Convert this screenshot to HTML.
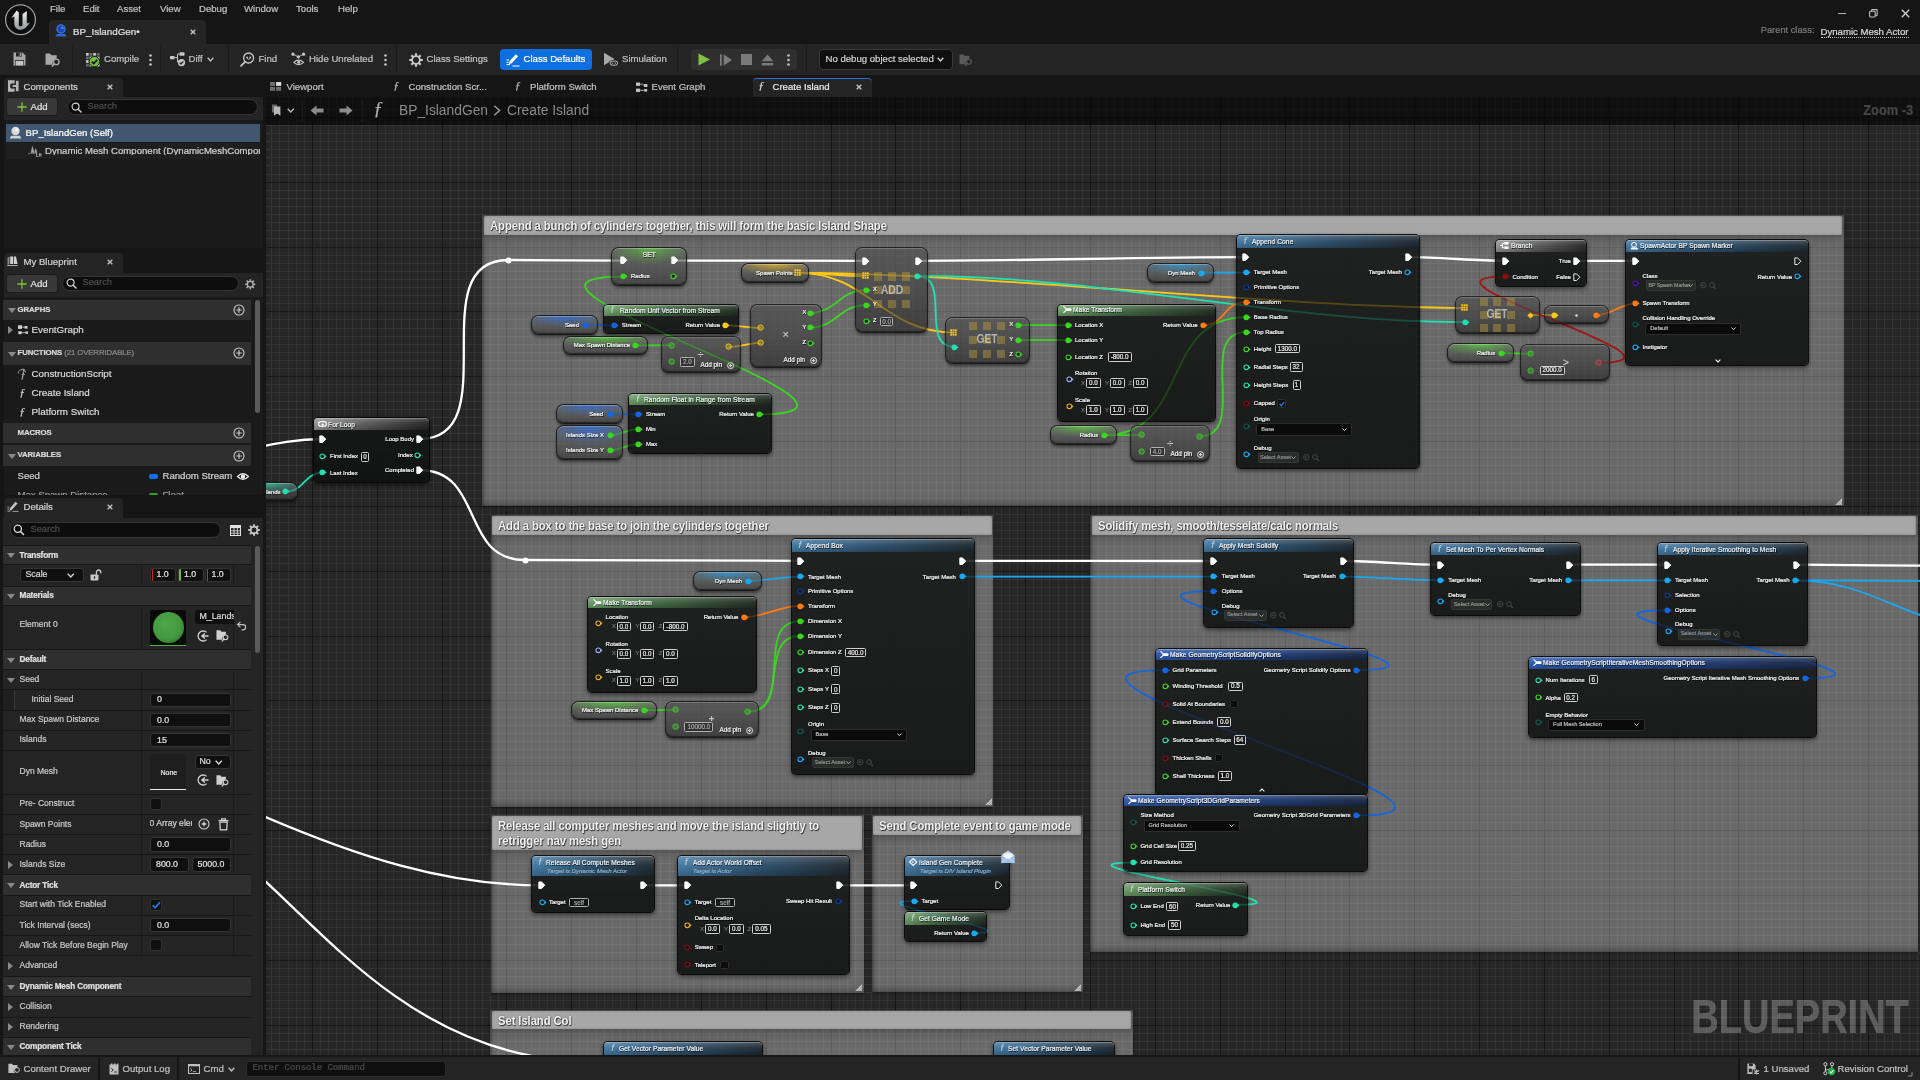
<!DOCTYPE html>
<html lang="en"><head><meta charset="utf-8"><title>BP_IslandGen</title>
<style>
*{margin:0;padding:0;}
html,body{width:1920px;height:1080px;overflow:hidden;background:#151515;}
body{font-family:"Liberation Sans",sans-serif;position:relative;}
.t{position:absolute;white-space:nowrap;line-height:1;-webkit-text-stroke:0.22px currentColor;}
.r{position:absolute;}
svg{overflow:visible;}
#app{position:absolute;left:0;top:0;width:1920px;height:1080px;will-change:transform;overflow:hidden;}
#graph{position:absolute;left:0;top:0;width:1920px;height:1080px;clip-path:inset(97px 0 25px 266px);
 background-color:#262626;}
.cm{background:rgba(255,255,255,.31);box-shadow:inset 1.5px 1.5px 3px rgba(0,0,0,.3), inset 5px -9px 9px -7px rgba(0,0,0,.32), inset -0.5px -0.5px 1px rgba(0,0,0,.1), 0 1px 1.5px rgba(0,0,0,.45);}
.cmt{border-radius:1.5px;background:#a7a7a7;box-shadow:inset 0 0 3px rgba(0,0,0,.2), 0 3px 7px 1px rgba(0,0,0,.22);}
.cmtx{font-size:12.6px;font-weight:700;color:#f4f4f4;transform:scaleX(.897);transform-origin:0 0;text-shadow:0.8px 1px 1px rgba(0,0,0,.75), 0 0 1.5px rgba(0,0,0,.5);line-height:15.1px;letter-spacing:-.1px;-webkit-text-stroke:0;}
.nd{background:linear-gradient(to bottom, rgba(20,23,21,.87) 0, rgba(15,17,16,.89) 100%);border-radius:4px;box-shadow:0 0 0 1px rgba(5,5,5,.9), 0 2px 4px 1px rgba(0,0,0,.5);}
.vn{border-radius:6.5px;box-shadow:inset 0 0.8px 0.5px rgba(255,255,255,.35), inset 0 -1px 1px rgba(0,0,0,.5), 0 0 0 1px rgba(20,20,20,.85), 0 2px 3px 1px rgba(0,0,0,.45);}
.cn{border-radius:6.5px;background:linear-gradient(to bottom, rgba(80,80,80,.68) 0, rgba(64,64,64,.68) 50%, rgba(46,46,46,.72) 100%);box-shadow:inset 0 0.8px 0.5px rgba(255,255,255,.25), inset 0 -1px 1px rgba(0,0,0,.45), 0 0 0 1px rgba(20,20,20,.8), 0 2px 3px 1px rgba(0,0,0,.45);}
</style></head><body>
<div id="app">
<div id="graph">
<svg class="r" style="left:0;top:0" width="1920" height="1080" viewBox="0 0 1920 1080" shape-rendering="crispEdges"><path d="M263.5 97V1056M271.5 97V1056M279.5 97V1056M288.5 97V1056M296.5 97V1056M304.5 97V1056M320.5 97V1056M328.5 97V1056M336.5 97V1056M344.5 97V1056M352.5 97V1056M361.5 97V1056M369.5 97V1056M385.5 97V1056M393.5 97V1056M401.5 97V1056M409.5 97V1056M417.5 97V1056M425.5 97V1056M433.5 97V1056M450.5 97V1056M458.5 97V1056M466.5 97V1056M474.5 97V1056M482.5 97V1056M490.5 97V1056M498.5 97V1056M515.5 97V1056M523.5 97V1056M531.5 97V1056M539.5 97V1056M547.5 97V1056M555.5 97V1056M563.5 97V1056M579.5 97V1056M587.5 97V1056M596.5 97V1056M604.5 97V1056M612.5 97V1056M620.5 97V1056M628.5 97V1056M644.5 97V1056M652.5 97V1056M660.5 97V1056M669.5 97V1056M677.5 97V1056M685.5 97V1056M693.5 97V1056M709.5 97V1056M717.5 97V1056M725.5 97V1056M733.5 97V1056M741.5 97V1056M750.5 97V1056M758.5 97V1056M774.5 97V1056M782.5 97V1056M790.5 97V1056M798.5 97V1056M806.5 97V1056M814.5 97V1056M823.5 97V1056M839.5 97V1056M847.5 97V1056M855.5 97V1056M863.5 97V1056M871.5 97V1056M879.5 97V1056M887.5 97V1056M904.5 97V1056M912.5 97V1056M920.5 97V1056M928.5 97V1056M936.5 97V1056M944.5 97V1056M952.5 97V1056M968.5 97V1056M977.5 97V1056M985.5 97V1056M993.5 97V1056M1001.5 97V1056M1009.5 97V1056M1017.5 97V1056M1033.5 97V1056M1041.5 97V1056M1049.5 97V1056M1058.5 97V1056M1066.5 97V1056M1074.5 97V1056M1082.5 97V1056M1098.5 97V1056M1106.5 97V1056M1114.5 97V1056M1122.5 97V1056M1131.5 97V1056M1139.5 97V1056M1147.5 97V1056M1163.5 97V1056M1171.5 97V1056M1179.5 97V1056M1187.5 97V1056M1195.5 97V1056M1203.5 97V1056M1212.5 97V1056M1228.5 97V1056M1236.5 97V1056M1244.5 97V1056M1252.5 97V1056M1260.5 97V1056M1268.5 97V1056M1276.5 97V1056M1293.5 97V1056M1301.5 97V1056M1309.5 97V1056M1317.5 97V1056M1325.5 97V1056M1333.5 97V1056M1341.5 97V1056M1357.5 97V1056M1366.5 97V1056M1374.5 97V1056M1382.5 97V1056M1390.5 97V1056M1398.5 97V1056M1406.5 97V1056M1422.5 97V1056M1430.5 97V1056M1438.5 97V1056M1447.5 97V1056M1455.5 97V1056M1463.5 97V1056M1471.5 97V1056M1487.5 97V1056M1495.5 97V1056M1503.5 97V1056M1511.5 97V1056M1520.5 97V1056M1528.5 97V1056M1536.5 97V1056M1552.5 97V1056M1560.5 97V1056M1568.5 97V1056M1576.5 97V1056M1584.5 97V1056M1592.5 97V1056M1601.5 97V1056M1617.5 97V1056M1625.5 97V1056M1633.5 97V1056M1641.5 97V1056M1649.5 97V1056M1657.5 97V1056M1665.5 97V1056M1682.5 97V1056M1690.5 97V1056M1698.5 97V1056M1706.5 97V1056M1714.5 97V1056M1722.5 97V1056M1730.5 97V1056M1746.5 97V1056M1755.5 97V1056M1763.5 97V1056M1771.5 97V1056M1779.5 97V1056M1787.5 97V1056M1795.5 97V1056M1811.5 97V1056M1819.5 97V1056M1828.5 97V1056M1836.5 97V1056M1844.5 97V1056M1852.5 97V1056M1860.5 97V1056M1876.5 97V1056M1884.5 97V1056M1892.5 97V1056M1900.5 97V1056M1909.5 97V1056M1917.5 97V1056M266 93.5H1920M266 101.5H1920M266 109.5H1920M266 125.5H1920M266 133.5H1920M266 141.5H1920M266 149.5H1920M266 157.5H1920M266 165.5H1920M266 174.5H1920M266 190.5H1920M266 198.5H1920M266 206.5H1920M266 214.5H1920M266 222.5H1920M266 230.5H1920M266 238.5H1920M266 255.5H1920M266 263.5H1920M266 271.5H1920M266 279.5H1920M266 287.5H1920M266 295.5H1920M266 303.5H1920M266 319.5H1920M266 328.5H1920M266 336.5H1920M266 344.5H1920M266 352.5H1920M266 360.5H1920M266 368.5H1920M266 384.5H1920M266 392.5H1920M266 401.5H1920M266 409.5H1920M266 417.5H1920M266 425.5H1920M266 433.5H1920M266 449.5H1920M266 457.5H1920M266 465.5H1920M266 473.5H1920M266 482.5H1920M266 490.5H1920M266 498.5H1920M266 514.5H1920M266 522.5H1920M266 530.5H1920M266 538.5H1920M266 546.5H1920M266 555.5H1920M266 563.5H1920M266 579.5H1920M266 587.5H1920M266 595.5H1920M266 603.5H1920M266 611.5H1920M266 619.5H1920M266 627.5H1920M266 644.5H1920M266 652.5H1920M266 660.5H1920M266 668.5H1920M266 676.5H1920M266 684.5H1920M266 692.5H1920M266 709.5H1920M266 717.5H1920M266 725.5H1920M266 733.5H1920M266 741.5H1920M266 749.5H1920M266 757.5H1920M266 773.5H1920M266 781.5H1920M266 790.5H1920M266 798.5H1920M266 806.5H1920M266 814.5H1920M266 822.5H1920M266 838.5H1920M266 846.5H1920M266 854.5H1920M266 863.5H1920M266 871.5H1920M266 879.5H1920M266 887.5H1920M266 903.5H1920M266 911.5H1920M266 919.5H1920M266 927.5H1920M266 935.5H1920M266 944.5H1920M266 952.5H1920M266 968.5H1920M266 976.5H1920M266 984.5H1920M266 992.5H1920M266 1000.5H1920M266 1008.5H1920M266 1017.5H1920M266 1033.5H1920M266 1041.5H1920M266 1049.5H1920" stroke="#333333" stroke-width="1" fill="none"/><path d="M312.5 97V1056M377.5 97V1056M442.5 97V1056M506.5 97V1056M571.5 97V1056M636.5 97V1056M701.5 97V1056M766.5 97V1056M831.5 97V1056M895.5 97V1056M960.5 97V1056M1025.5 97V1056M1090.5 97V1056M1155.5 97V1056M1220.5 97V1056M1285.5 97V1056M1349.5 97V1056M1414.5 97V1056M1479.5 97V1056M1544.5 97V1056M1609.5 97V1056M1674.5 97V1056M1738.5 97V1056M1803.5 97V1056M1868.5 97V1056M266 117.5H1920M266 182.5H1920M266 247.5H1920M266 311.5H1920M266 376.5H1920M266 441.5H1920M266 506.5H1920M266 571.5H1920M266 636.5H1920M266 700.5H1920M266 765.5H1920M266 830.5H1920M266 895.5H1920M266 960.5H1920M266 1025.5H1920" stroke="#171717" stroke-width="1" fill="none"/></svg>
<div class="r cm" style="left:482.4px;top:214.6px;width:1361.5px;height:291.8px;"><div class="r cmt" style="left:1.5px;top:1.5px;right:1.5px;height:19.0px;"></div><svg class="r" style="right:1.5px;bottom:1.5px" width="7" height="7" viewBox="0 0 7 7"><path d="M7 0.3V7H0.3Z" fill="#d0d0d0" fill-opacity=".9"/><path d="M7 2.8L2.8 7M7 5L5 7" stroke="#7a7a7a" stroke-width="0.6"/></svg></div>
<div class="t cmtx" style="left:489.8px;top:218.8px;">Append a bunch of cylinders together, this will form the basic Island Shape</div>
<div class="r cm" style="left:490.5px;top:514.6px;width:502.6px;height:292.3px;"><div class="r cmt" style="left:1.5px;top:1.5px;right:1.5px;height:19.2px;"></div><svg class="r" style="right:1.5px;bottom:1.5px" width="7" height="7" viewBox="0 0 7 7"><path d="M7 0.3V7H0.3Z" fill="#d0d0d0" fill-opacity=".9"/><path d="M7 2.8L2.8 7M7 5L5 7" stroke="#7a7a7a" stroke-width="0.6"/></svg></div>
<div class="t cmtx" style="left:497.9px;top:518.8px;">Add a box to the base to join the cylinders together</div>
<div class="r cm" style="left:1090.1px;top:514.6px;width:827.7px;height:437.4px;"><div class="r cmt" style="left:1.5px;top:1.5px;right:1.5px;height:19.2px;"></div></div>
<div class="t cmtx" style="left:1097.5px;top:518.8px;">Solidify mesh, smooth/tesselate/calc normals</div>
<div class="r cm" style="left:490.5px;top:814.6px;width:373.1px;height:178.0px;"><div class="r cmt" style="left:1.5px;top:1.5px;right:1.5px;height:33.9px;"></div><svg class="r" style="right:1.5px;bottom:1.5px" width="7" height="7" viewBox="0 0 7 7"><path d="M7 0.3V7H0.3Z" fill="#d0d0d0" fill-opacity=".9"/><path d="M7 2.8L2.8 7M7 5L5 7" stroke="#7a7a7a" stroke-width="0.6"/></svg></div>
<div class="t cmtx" style="left:497.9px;top:818.8px;">Release all computer meshes and move the island slightly to<br>retrigger nav mesh gen</div>
<div class="r cm" style="left:871.8px;top:814.6px;width:211.2px;height:177.9px;"><div class="r cmt" style="left:1.5px;top:1.5px;right:1.5px;height:19.1px;"></div><svg class="r" style="right:1.5px;bottom:1.5px" width="7" height="7" viewBox="0 0 7 7"><path d="M7 0.3V7H0.3Z" fill="#d0d0d0" fill-opacity=".9"/><path d="M7 2.8L2.8 7M7 5L5 7" stroke="#7a7a7a" stroke-width="0.6"/></svg></div>
<div class="t cmtx" style="left:879.2px;top:818.8px;">Send Complete event to game mode</div>
<div class="r cm" style="left:490.4px;top:1009.8px;width:642.6px;height:90.2px;"><div class="r cmt" style="left:1.5px;top:1.5px;right:1.5px;height:18.2px;"></div><svg class="r" style="right:1.5px;bottom:1.5px" width="7" height="7" viewBox="0 0 7 7"><path d="M7 0.3V7H0.3Z" fill="#d0d0d0" fill-opacity=".9"/><path d="M7 2.8L2.8 7M7 5L5 7" stroke="#7a7a7a" stroke-width="0.6"/></svg></div>
<div class="t cmtx" style="left:497.8px;top:1014.0px;">Set Island Col</div>
<svg class="r" style="left:0;top:0" width="1920" height="1080" viewBox="0 0 1920 1080">
<path d="M186.0 457.0C237.4 457.0 270.9 439.0 322.3 439.0" stroke="#ffffff" stroke-width="2.3" fill="none" stroke-opacity="1.0"/>
<path d="M419.3 439.0C508.6 439.0 419.0 260.0 508.3 260.0" stroke="#ffffff" stroke-width="2.3" fill="none" stroke-opacity="1.0"/>
<path d="M508.3 260.0C546.9 260.0 584.8 260.6 623.4 260.6" stroke="#ffffff" stroke-width="2.3" fill="none" stroke-opacity="1.0"/>
<path d="M675.0 260.6C738.7 260.6 802.1 260.8 865.8 260.8" stroke="#ffffff" stroke-width="2.3" fill="none" stroke-opacity="1.0"/>
<path d="M918.3 260.8C1028.7 260.8 1135.4 257.2 1245.8 257.2" stroke="#ffffff" stroke-width="2.3" fill="none" stroke-opacity="1.0"/>
<path d="M1408.8 257.2C1442.3 257.2 1472.1 260.8 1505.6 260.8" stroke="#ffffff" stroke-width="2.3" fill="none" stroke-opacity="1.0"/>
<path d="M1576.4 260.8C1596.1 260.8 1615.9 260.8 1635.6 260.8" stroke="#ffffff" stroke-width="2.3" fill="none" stroke-opacity="1.0"/>
<path d="M419.3 470.0C484.5 470.0 459.8 560.0 525.0 560.0" stroke="#ffffff" stroke-width="2.3" fill="none" stroke-opacity="1.0"/>
<path d="M525.0 560.0C617.0 560.0 708.3 560.8 800.3 560.8" stroke="#ffffff" stroke-width="2.3" fill="none" stroke-opacity="1.0"/>
<path d="M962.8 560.8C1046.4 560.8 1129.9 561.0 1213.5 561.0" stroke="#ffffff" stroke-width="2.3" fill="none" stroke-opacity="1.0"/>
<path d="M1343.2 561.0C1376.8 561.0 1406.8 564.7 1440.4 564.7" stroke="#ffffff" stroke-width="2.3" fill="none" stroke-opacity="1.0"/>
<path d="M1570.0 564.7C1602.6 564.7 1635.1 564.7 1667.7 564.7" stroke="#ffffff" stroke-width="2.3" fill="none" stroke-opacity="1.0"/>
<path d="M1796.3 564.7C1851.3 564.7 1905.0 566.0 1960.0 566.0" stroke="#ffffff" stroke-width="2.3" fill="none" stroke-opacity="1.0"/>
<path d="M238 805L265 816.7C356 855.5 444 885.3 541.3 885.3" stroke="#ffffff" stroke-width="2.3" fill="none"/>
<path d="M230 849L265 881C334 945 407 1030 527 1055L575 1065" stroke="#ffffff" stroke-width="2.3" fill="none"/>
<path d="M643.7 885.3C658.2 885.3 672.6 885.3 687.1 885.3" stroke="#ffffff" stroke-width="2.3" fill="none" stroke-opacity="1.0"/>
<path d="M839.3 885.3C864.1 885.3 889.0 885.3 913.8 885.3" stroke="#ffffff" stroke-width="2.3" fill="none" stroke-opacity="1.0"/>
<path d="M285.7 491.7C304.4 491.7 304.0 472.7 322.7 472.7" stroke="#22e0b0" stroke-width="1.75" fill="none" stroke-opacity="1.0"/>
<path d="M585.4 325.0C595.2 325.0 604.6 325.3 614.4 325.3" stroke="#1466e0" stroke-width="1.75" fill="none" stroke-opacity="1.0"/>
<path d="M725.6 325.3C738.2 325.3 748.2 327.8 760.8 327.8" stroke="#fdc818" stroke-width="1.75" fill="none" stroke-opacity="1.0"/>
<path d="M635.7 345.4C647.6 345.4 659.4 345.4 671.3 345.4" stroke="#3bd622" stroke-width="1.75" fill="none" stroke-opacity="1.0"/>
<path d="M728.6 347.0C740.7 347.0 748.7 342.8 760.8 342.8" stroke="#fdc818" stroke-width="1.75" fill="none" stroke-opacity="1.0"/>
<path d="M810.1 312.8C836.3 312.8 839.6 290.0 865.8 290.0" stroke="#3bd622" stroke-width="1.75" fill="none" stroke-opacity="1.0"/>
<path d="M810.1 327.6C836.2 327.6 839.7 305.0 865.8 305.0" stroke="#3bd622" stroke-width="1.75" fill="none" stroke-opacity="1.0"/>
<path d="M797.8 272.8C821.2 272.8 841.6 275.8 865.0 275.8" stroke="#fdc818" stroke-width="2.35" fill="none" stroke-opacity="1.0"/>
<path d="M797.8 272.8C869.7 272.8 881.9 332.5 953.8 332.5" stroke="#fdc818" stroke-width="1.75" fill="none" stroke-opacity="1.0"/>
<path d="M797.8 272.8C978.4 272.8 1284.1 307.8 1464.7 307.8" stroke="#fdc818" stroke-width="1.75" fill="none" stroke-opacity="1.0"/>
<path d="M916.8 275.8C953.0 275.8 918.3 346.8 954.5 346.8" stroke="#22e0b0" stroke-width="1.75" fill="none" stroke-opacity="1.0"/>
<path d="M916.8 275.8C1101.1 275.8 1281.0 322.0 1465.3 322.0" stroke="#22e0b0" stroke-width="1.75" fill="none" stroke-opacity="1.0"/>
<path d="M1018.0 325.0C1034.7 325.0 1051.3 325.0 1068.0 325.0" stroke="#3bd622" stroke-width="1.75" fill="none" stroke-opacity="1.0"/>
<path d="M1018.0 340.0C1034.7 340.0 1051.3 340.0 1068.0 340.0" stroke="#3bd622" stroke-width="1.75" fill="none" stroke-opacity="1.0"/>
<path d="M758.8 414.3C932.4 414.3 449.8 276.6 623.4 276.6" stroke="#3bd622" stroke-width="1.75" fill="none" stroke-opacity="1.0"/>
<path d="M610.0 414.1C619.5 414.1 628.9 414.3 638.4 414.3" stroke="#1466e0" stroke-width="1.75" fill="none" stroke-opacity="1.0"/>
<path d="M610.0 435.0C621.4 435.0 627.0 429.1 638.4 429.1" stroke="#3bd622" stroke-width="1.75" fill="none" stroke-opacity="1.0"/>
<path d="M610.0 450.0C621.4 450.0 627.0 444.1 638.4 444.1" stroke="#3bd622" stroke-width="1.75" fill="none" stroke-opacity="1.0"/>
<path d="M1201.3 272.8C1216.2 272.8 1230.9 272.5 1245.8 272.5" stroke="#19a8f2" stroke-width="1.75" fill="none" stroke-opacity="1.0"/>
<path d="M1203.2 325.0C1225.1 325.0 1223.9 302.0 1245.8 302.0" stroke="#ff7a14" stroke-width="1.75" fill="none" stroke-opacity="1.0"/>
<path d="M1104.3 435.0C1190.8 435.0 1159.3 317.0 1245.8 317.0" stroke="#3bd622" stroke-width="1.75" fill="none" stroke-opacity="1.0"/>
<path d="M1104.3 435.0C1116.8 435.0 1129.3 435.0 1141.8 435.0" stroke="#3bd622" stroke-width="1.75" fill="none" stroke-opacity="1.0"/>
<path d="M1199.3 436.3C1249.6 436.3 1195.5 332.0 1245.8 332.0" stroke="#3bd622" stroke-width="1.75" fill="none" stroke-opacity="1.0"/>
<path d="M1530.0 315.0C1538.1 315.0 1546.1 315.0 1554.2 315.0" stroke="#fdc818" stroke-width="1.75" fill="none" stroke-opacity="1.0"/>
<path d="M1596.7 315.0C1613.5 315.0 1618.8 303.6 1635.6 303.6" stroke="#ff7a14" stroke-width="1.75" fill="none" stroke-opacity="1.0"/>
<path d="M1501.4 353.0C1511.3 353.0 1520.7 353.6 1530.6 353.6" stroke="#3bd622" stroke-width="1.75" fill="none" stroke-opacity="1.0"/>
<path d="M1598.9 362.5C1714.7 362.5 1389.8 276.7 1505.6 276.7" stroke="#a01818" stroke-width="1.75" fill="none" stroke-opacity="1.0"/>
<path d="M748.0 580.8C766.8 580.8 781.5 576.7 800.3 576.7" stroke="#19a8f2" stroke-width="1.75" fill="none" stroke-opacity="1.0"/>
<path d="M743.8 617.0C766.4 617.0 777.7 605.8 800.3 605.8" stroke="#ff7a14" stroke-width="1.75" fill="none" stroke-opacity="1.0"/>
<path d="M643.9 710.0C654.5 710.0 665.2 710.0 675.8 710.0" stroke="#3bd622" stroke-width="1.75" fill="none" stroke-opacity="1.0"/>
<path d="M748.0 711.7C795.6 711.7 752.7 621.1 800.3 621.1" stroke="#3bd622" stroke-width="1.75" fill="none" stroke-opacity="1.0"/>
<path d="M748.0 711.7C790.7 711.7 757.6 635.8 800.3 635.8" stroke="#3bd622" stroke-width="1.75" fill="none" stroke-opacity="1.0"/>
<path d="M961.8 576.7C1045.7 576.7 1129.6 576.6 1213.5 576.6" stroke="#19a8f2" stroke-width="1.75" fill="none" stroke-opacity="1.0"/>
<path d="M1341.8 576.6C1375.9 576.6 1406.3 580.3 1440.4 580.3" stroke="#19a8f2" stroke-width="1.75" fill="none" stroke-opacity="1.0"/>
<path d="M1568.2 580.3C1601.4 580.3 1634.5 580.3 1667.7 580.3" stroke="#19a8f2" stroke-width="1.75" fill="none" stroke-opacity="1.0"/>
<path d="M1795.0 580.3C1850.2 580.3 1904.8 581.0 1960.0 581.0" stroke="#19a8f2" stroke-width="1.75" fill="none" stroke-opacity="1.0"/>
<path d="M1795.0 580.3C1875.9 580.3 1909.1 628.0 1990.0 628.0" stroke="#19a8f2" stroke-width="1.75" fill="none" stroke-opacity="1.0"/>
<path d="M1356.0 670.0C1510.6 670.0 1058.9 591.2 1213.5 591.2" stroke="#1466e0" stroke-width="1.75" fill="none" stroke-opacity="1.0"/>
<path d="M1356.0 815.4C1545.3 815.4 975.7 670.0 1165.0 670.0" stroke="#1466e0" stroke-width="1.75" fill="none" stroke-opacity="1.0"/>
<path d="M1235.0 904.8C1339.5 904.8 1028.7 862.6 1133.2 862.6" stroke="#22e0b0" stroke-width="1.75" fill="none" stroke-opacity="1.0"/>
<path d="M1804.8 678.0C1950.1 678.0 1522.4 610.3 1667.7 610.3" stroke="#1466e0" stroke-width="1.75" fill="none" stroke-opacity="1.0"/>
<path d="M973.8 933.0C1038.4 933.0 849.2 901.0 913.8 901.0" stroke="#19a8f2" stroke-width="1.75" fill="none" stroke-opacity="1.0"/>
</svg>
<div class="r nd" style="left:314.3px;top:418.3px;width:114.7px;height:63.4px;"><div class="r" style="left:0;top:0;width:100%;height:12.0px;border-radius:3.5px 3.5px 0 0;background:linear-gradient(to bottom, rgba(255,255,255,.22) 0, rgba(255,255,255,.04) 45%, rgba(0,0,0,.18) 100%), linear-gradient(to right, rgba(150,150,150,.98) 0, rgba(100,100,100,.85) 45%, rgba(45,45,45,.5) 100%);box-shadow:inset 0 0.7px 0 rgba(255,255,255,.35);"></div></div>
<svg class="r" style="left:318.3px;top:420.8px;" width="9" height="7" viewBox="0 0 9 7"><rect x="0.6" y="0.6" width="7.8" height="4.6" rx="2.3" stroke="#fff" stroke-width="1.1" fill="none"/><path d="M3.2 2.8h3L4.7 6.6z" fill="#fff"/></svg>
<div class="t" style="left:327.8px;top:420.68px;font-size:7.2px;color:#eef2f4;font-weight:400;text-shadow:0.6px 0.8px 0.6px rgba(0,0,0,.9);transform:scaleX(.93);transform-origin:0 50%;letter-spacing:.05px;">For Loop</div>
<svg class="r" style="left:318.7px;top:434.8px;" width="7.6" height="8.4" viewBox="0 0 7.6 8.4"><path d="M0.8 0.9H3.6L6.8 4.2L3.6 7.5H0.8Z" fill="#ffffff" stroke="#ffffff" stroke-width="0.9" stroke-linejoin="round"/></svg>
<div class="t" style="right:1506.0px;top:435.82px;font-size:6px;color:#f2f2f2;font-weight:400;text-shadow:0.6px 0.8px 0.6px rgba(0,0,0,.9);">Loop Body</div>
<svg class="r" style="left:415.7px;top:434.8px;" width="7.6" height="8.4" viewBox="0 0 7.6 8.4"><path d="M0.8 0.9H3.6L6.8 4.2L3.6 7.5H0.8Z" fill="#ffffff" stroke="#ffffff" stroke-width="0.9" stroke-linejoin="round"/></svg>
<svg class="r" style="left:319.4px;top:453.0px;" width="8.4" height="6.6" viewBox="0 0 8.4 6.6"><circle cx="3.3" cy="3.3" r="2.35" fill="#0c0c0c" fill-opacity="0.6" stroke="#22e0b0" stroke-width="1.1"/><path d="M6 1.9L7.6 3.3L6 4.7Z" fill="#22e0b0"/></svg>
<div class="t" style="left:330.0px;top:453.12px;font-size:6px;color:#f2f2f2;font-weight:400;text-shadow:0.6px 0.8px 0.6px rgba(0,0,0,.9);">First Index</div>
<div class="r" style="left:361.0px;top:451.7px;width:8.3px;height:10.0px;border:1px solid #d0d0d0;box-sizing:border-box;border-radius:1.5px;background:rgba(10,10,10,.35);"></div><div class="t" style="left:265.1px;width:200px;text-align:center;top:453.81px;font-size:6.3px;color:#e8e8e8;font-weight:400;">0</div>
<div class="t" style="right:1507.3px;top:451.82px;font-size:6px;color:#f2f2f2;font-weight:400;text-shadow:0.6px 0.8px 0.6px rgba(0,0,0,.9);">Index</div>
<svg class="r" style="left:414.3px;top:451.7px;" width="8.4" height="6.6" viewBox="0 0 8.4 6.6"><circle cx="3.3" cy="3.3" r="2.35" fill="#0c0c0c" fill-opacity="0.6" stroke="#22e0b0" stroke-width="1.1"/><path d="M6 1.9L7.6 3.3L6 4.7Z" fill="#22e0b0"/></svg>
<svg class="r" style="left:319.4px;top:469.4px;" width="8.4" height="6.6" viewBox="0 0 8.4 6.6"><circle cx="3.3" cy="3.3" r="2.9" fill="#22e0b0"/><path d="M6 1.9L7.6 3.3L6 4.7Z" fill="#22e0b0"/></svg>
<div class="t" style="left:330.0px;top:469.52px;font-size:6px;color:#f2f2f2;font-weight:400;text-shadow:0.6px 0.8px 0.6px rgba(0,0,0,.9);">Last Index</div>
<div class="t" style="right:1506.0px;top:466.82px;font-size:6px;color:#f2f2f2;font-weight:400;text-shadow:0.6px 0.8px 0.6px rgba(0,0,0,.9);">Completed</div>
<svg class="r" style="left:415.7px;top:465.8px;" width="7.6" height="8.4" viewBox="0 0 7.6 8.4"><path d="M0.8 0.9H3.6L6.8 4.2L3.6 7.5H0.8Z" fill="#ffffff" stroke="#ffffff" stroke-width="0.9" stroke-linejoin="round"/></svg>
<div class="r vn" style="left:236.0px;top:483.3px;width:61.3px;height:16.7px;background:radial-gradient(ellipse 70% 62% at 50% 0%, rgba(40,210,170,.75) 0, rgba(40,210,170,.3) 50%, rgba(40,210,170,0) 100%), linear-gradient(to bottom, rgba(98,100,98,.66) 0, rgba(78,80,78,.66) 55%, rgba(56,56,56,.7) 100%);"></div>
<div class="t" style="right:1639.5px;top:488.52px;font-size:6px;color:#f2f2f2;font-weight:400;text-shadow:0.6px 0.8px 0.6px rgba(0,0,0,.9);">Islands</div>
<svg class="r" style="left:282.4px;top:488.4px;" width="8.4" height="6.6" viewBox="0 0 8.4 6.6"><circle cx="3.3" cy="3.3" r="2.9" fill="#22e0b0"/><path d="M6 1.9L7.6 3.3L6 4.7Z" fill="#22e0b0"/></svg>
<div class="r vn" style="left:612.3px;top:247.6px;width:73.8px;height:37.4px;border-radius:7px;background:radial-gradient(ellipse 60% 45% at 50% 0%, rgba(90,220,60,.7) 0, rgba(90,220,60,.28) 45%, rgba(90,220,60,0) 100%), linear-gradient(to bottom, rgba(94,96,94,.66) 0, rgba(74,76,74,.66) 55%, rgba(54,54,54,.7) 100%);"></div>
<div class="t" style="left:549.3px;width:200px;text-align:center;top:252.20px;font-size:6.8px;color:#f0f0f0;font-weight:400;text-shadow:0.6px 0.8px 0.6px rgba(0,0,0,.9);">SET</div>
<svg class="r" style="left:619.8px;top:256.4px;" width="7.6" height="8.4" viewBox="0 0 7.6 8.4"><path d="M0.8 0.9H3.6L6.8 4.2L3.6 7.5H0.8Z" fill="#ffffff" stroke="#ffffff" stroke-width="0.9" stroke-linejoin="round"/></svg>
<svg class="r" style="left:671.4px;top:256.4px;" width="7.6" height="8.4" viewBox="0 0 7.6 8.4"><path d="M0.8 0.9H3.6L6.8 4.2L3.6 7.5H0.8Z" fill="#ffffff" stroke="#ffffff" stroke-width="0.9" stroke-linejoin="round"/></svg>
<svg class="r" style="left:620.1px;top:273.3px;" width="8.4" height="6.6" viewBox="0 0 8.4 6.6"><circle cx="3.3" cy="3.3" r="2.9" fill="#3bd622"/><path d="M6 1.9L7.6 3.3L6 4.7Z" fill="#3bd622"/></svg>
<div class="t" style="left:631.0px;top:273.42px;font-size:6px;color:#f2f2f2;font-weight:400;text-shadow:0.6px 0.8px 0.6px rgba(0,0,0,.9);">Radius</div>
<svg class="r" style="left:670.3px;top:273.3px;" width="8.4" height="6.6" viewBox="0 0 8.4 6.6"><circle cx="3.3" cy="3.3" r="2.35" fill="#0c0c0c" fill-opacity="0.6" stroke="#3bd622" stroke-width="1.1"/><path d="M6 1.9L7.6 3.3L6 4.7Z" fill="#3bd622"/></svg>
<div class="r vn" style="left:742.3px;top:264.3px;width:66.0px;height:17.4px;background:radial-gradient(ellipse 70% 62% at 50% 0%, rgba(240,190,40,.75) 0, rgba(240,190,40,.3) 50%, rgba(240,190,40,0) 100%), linear-gradient(to bottom, rgba(98,100,98,.66) 0, rgba(78,80,78,.66) 55%, rgba(56,56,56,.7) 100%);"></div>
<div class="t" style="right:1127.2px;top:269.62px;font-size:6px;color:#f2f2f2;font-weight:400;text-shadow:0.6px 0.8px 0.6px rgba(0,0,0,.9);">Spawn Points</div>
<svg class="r" style="left:794.4px;top:269.4px;" width="7" height="7" viewBox="0 0 7 7"><rect x="0.3" y="0.3" width="1.8" height="1.8" fill="#fdc818"/><rect x="0.3" y="2.6" width="1.8" height="1.8" fill="#fdc818"/><rect x="0.3" y="4.9" width="1.8" height="1.8" fill="#fdc818"/><rect x="2.6" y="0.3" width="1.8" height="1.8" fill="#fdc818"/><rect x="2.6" y="2.6" width="1.8" height="1.8" fill="#fdc818"/><rect x="2.6" y="4.9" width="1.8" height="1.8" fill="#fdc818"/><rect x="4.9" y="0.3" width="1.8" height="1.8" fill="#fdc818"/><rect x="4.9" y="2.6" width="1.8" height="1.8" fill="#fdc818"/><rect x="4.9" y="4.9" width="1.8" height="1.8" fill="#fdc818"/></svg>
<div class="r nd" style="left:604.1px;top:304.6px;width:133.7px;height:28.6px;"><div class="r" style="left:0;top:0;width:100%;height:11.6px;border-radius:3.5px 3.5px 0 0;background:linear-gradient(to bottom, rgba(255,255,255,.22) 0, rgba(255,255,255,.04) 45%, rgba(0,0,0,.18) 100%), linear-gradient(to right, rgba(112,160,108,.98) 0, rgba(70,112,70,.85) 45%, rgba(36,56,38,.5) 100%);box-shadow:inset 0 0.7px 0 rgba(255,255,255,.35);"></div></div>
<div class="t" style="left:610.6px;top:305.92px;font-size:8px;color:#d8e8f0;font-family:'Liberation Serif',serif;font-style:italic;opacity:.75">&#402;</div>
<div class="t" style="left:619.8px;top:306.78px;font-size:7.2px;color:#eef2f4;font-weight:400;text-shadow:0.6px 0.8px 0.6px rgba(0,0,0,.9);transform:scaleX(.93);transform-origin:0 50%;letter-spacing:.05px;">Random Unit Vector from Stream</div>
<svg class="r" style="left:611.1px;top:322.0px;" width="8.4" height="6.6" viewBox="0 0 8.4 6.6"><circle cx="3.3" cy="3.3" r="2.9" fill="#1466e0"/><path d="M6 1.9L7.6 3.3L6 4.7Z" fill="#1466e0"/></svg>
<div class="t" style="left:621.8px;top:322.12px;font-size:6px;color:#f2f2f2;font-weight:400;text-shadow:0.6px 0.8px 0.6px rgba(0,0,0,.9);">Stream</div>
<div class="t" style="right:1200.0px;top:322.12px;font-size:6px;color:#f2f2f2;font-weight:400;text-shadow:0.6px 0.8px 0.6px rgba(0,0,0,.9);">Return Value</div>
<svg class="r" style="left:722.3px;top:322.0px;" width="8.4" height="6.6" viewBox="0 0 8.4 6.6"><circle cx="3.3" cy="3.3" r="2.9" fill="#fdc818"/><path d="M6 1.9L7.6 3.3L6 4.7Z" fill="#fdc818"/></svg>
<div class="r vn" style="left:531.6px;top:316.0px;width:65.6px;height:17.8px;background:radial-gradient(ellipse 70% 62% at 50% 0%, rgba(40,110,235,.75) 0, rgba(40,110,235,.3) 50%, rgba(40,110,235,0) 100%), linear-gradient(to bottom, rgba(98,100,98,.66) 0, rgba(78,80,78,.66) 55%, rgba(56,56,56,.7) 100%);"></div>
<div class="t" style="right:1341.0px;top:321.82px;font-size:6px;color:#f2f2f2;font-weight:400;text-shadow:0.6px 0.8px 0.6px rgba(0,0,0,.9);">Seed</div>
<svg class="r" style="left:582.1px;top:321.7px;" width="8.4" height="6.6" viewBox="0 0 8.4 6.6"><circle cx="3.3" cy="3.3" r="2.9" fill="#1466e0"/><path d="M6 1.9L7.6 3.3L6 4.7Z" fill="#1466e0"/></svg>
<div class="r vn" style="left:563.8px;top:337.2px;width:83.7px;height:16.8px;background:radial-gradient(ellipse 70% 62% at 50% 0%, rgba(90,220,60,.75) 0, rgba(90,220,60,.3) 50%, rgba(90,220,60,0) 100%), linear-gradient(to bottom, rgba(98,100,98,.66) 0, rgba(78,80,78,.66) 55%, rgba(56,56,56,.7) 100%);"></div>
<div class="t" style="right:1290.0px;top:342.22px;font-size:6px;color:#f2f2f2;font-weight:400;text-shadow:0.6px 0.8px 0.6px rgba(0,0,0,.9);">Max Spawn Distance</div>
<svg class="r" style="left:632.4px;top:342.1px;" width="8.4" height="6.6" viewBox="0 0 8.4 6.6"><circle cx="3.3" cy="3.3" r="2.9" fill="#3bd622"/><path d="M6 1.9L7.6 3.3L6 4.7Z" fill="#3bd622"/></svg>
<div class="r cn" style="left:661.6px;top:337.2px;width:78.2px;height:35.0px;"></div>
<svg class="r" style="left:667.7px;top:341.8px;" width="7.2" height="7.2" viewBox="0 0 7.2 7.2"><circle cx="3.6" cy="3.6" r="2.7" fill="#3bd622" fill-opacity="0.35" stroke="#3bd622" stroke-opacity="0.85" stroke-width="1"/></svg>
<svg class="r" style="left:667.7px;top:358.4px;" width="7.2" height="7.2" viewBox="0 0 7.2 7.2"><circle cx="3.6" cy="3.6" r="2.7" fill="#3bd622" fill-opacity="0.35" stroke="#3bd622" stroke-opacity="0.85" stroke-width="1"/></svg>
<div class="r" style="left:680.3px;top:357.4px;width:14.5px;height:9.8px;border:1px solid #b0b0b0;box-sizing:border-box;border-radius:1.5px;background:rgba(10,10,10,.35);"></div><div class="t" style="left:587.5px;width:200px;text-align:center;top:359.41px;font-size:6.3px;color:#a8a8a8;font-weight:400;">2.0</div>
<svg class="r" style="left:725.0px;top:343.4px;" width="7.2" height="7.2" viewBox="0 0 7.2 7.2"><circle cx="3.6" cy="3.6" r="2.7" fill="#fdc818" fill-opacity="0.35" stroke="#fdc818" stroke-opacity="0.85" stroke-width="1"/></svg>
<div class="t" style="left:600.6px;width:200px;text-align:center;top:348.97px;font-size:11px;color:#c8c8c8;font-weight:400;">&#247;</div>
<div class="t" style="left:700.4px;top:362.41px;font-size:6.4px;color:#f0f0f0;font-weight:400;text-shadow:0.6px 0.8px 0.6px rgba(0,0,0,.9);">Add pin</div>
<svg class="r" style="left:727.0px;top:362.2px;" width="7.2" height="7.2" viewBox="0 0 7.2 7.2"><circle cx="3.6" cy="3.6" r="3" stroke="#f0f0f0" stroke-width="0.9" fill="none"/><path d="M3.6 2V5.2M2 3.6H5.2" stroke="#f0f0f0" stroke-width="0.9"/></svg>
<div class="r cn" style="left:751.0px;top:305.1px;width:70.3px;height:61.5px;"></div>
<svg class="r" style="left:757.2px;top:324.2px;" width="7.2" height="7.2" viewBox="0 0 7.2 7.2"><circle cx="3.6" cy="3.6" r="2.7" fill="#fdc818" fill-opacity="0.35" stroke="#fdc818" stroke-opacity="0.85" stroke-width="1"/></svg>
<svg class="r" style="left:757.2px;top:339.2px;" width="7.2" height="7.2" viewBox="0 0 7.2 7.2"><circle cx="3.6" cy="3.6" r="2.7" fill="#fdc818" fill-opacity="0.35" stroke="#fdc818" stroke-opacity="0.85" stroke-width="1"/></svg>
<div class="t" style="left:685.7px;width:200px;text-align:center;top:329.47px;font-size:11px;color:#c8c8c8;font-weight:400;">&#215;</div>
<div class="t" style="left:802.5px;top:309.83px;font-size:5.6px;color:#f2f2f2;font-weight:400;text-shadow:0.6px 0.8px 0.6px rgba(0,0,0,.9);">X</div>
<svg class="r" style="left:806.8px;top:309.5px;" width="8.4" height="6.6" viewBox="0 0 8.4 6.6"><circle cx="3.3" cy="3.3" r="2.9" fill="#3bd622"/><path d="M6 1.9L7.6 3.3L6 4.7Z" fill="#3bd622"/></svg>
<div class="t" style="left:802.5px;top:324.63px;font-size:5.6px;color:#f2f2f2;font-weight:400;text-shadow:0.6px 0.8px 0.6px rgba(0,0,0,.9);">Y</div>
<svg class="r" style="left:806.8px;top:324.3px;" width="8.4" height="6.6" viewBox="0 0 8.4 6.6"><circle cx="3.3" cy="3.3" r="2.9" fill="#3bd622"/><path d="M6 1.9L7.6 3.3L6 4.7Z" fill="#3bd622"/></svg>
<div class="t" style="left:802.5px;top:339.83px;font-size:5.6px;color:#f2f2f2;font-weight:400;text-shadow:0.6px 0.8px 0.6px rgba(0,0,0,.9);">Z</div>
<svg class="r" style="left:806.8px;top:339.5px;" width="8.4" height="6.6" viewBox="0 0 8.4 6.6"><circle cx="3.3" cy="3.3" r="2.35" fill="#0c0c0c" fill-opacity="0.6" stroke="#3bd622" stroke-width="1.1"/><path d="M6 1.9L7.6 3.3L6 4.7Z" fill="#3bd622"/></svg>
<div class="t" style="left:783.5px;top:357.31px;font-size:6.4px;color:#f0f0f0;font-weight:400;text-shadow:0.6px 0.8px 0.6px rgba(0,0,0,.9);">Add pin</div>
<svg class="r" style="left:810.0px;top:357.1px;" width="7.2" height="7.2" viewBox="0 0 7.2 7.2"><circle cx="3.6" cy="3.6" r="3" stroke="#f0f0f0" stroke-width="0.9" fill="none"/><path d="M3.6 2V5.2M2 3.6H5.2" stroke="#f0f0f0" stroke-width="0.9"/></svg>
<div class="r cn" style="left:856.3px;top:248.0px;width:71.2px;height:83.8px;"></div>
<div class="r" style="left:873.8px;top:272.0px;width:8.5px;height:8.5px;background:rgba(190,156,60,.44);"></div><div class="r" style="left:873.8px;top:285.8px;width:8.5px;height:8.5px;background:rgba(190,156,60,.44);"></div><div class="r" style="left:873.8px;top:299.7px;width:8.5px;height:8.5px;background:rgba(190,156,60,.44);"></div><div class="r" style="left:887.6px;top:272.0px;width:8.5px;height:8.5px;background:rgba(190,156,60,.44);"></div><div class="r" style="left:887.6px;top:285.8px;width:8.5px;height:8.5px;background:rgba(190,156,60,.44);"></div><div class="r" style="left:887.6px;top:299.7px;width:8.5px;height:8.5px;background:rgba(190,156,60,.44);"></div><div class="r" style="left:901.5px;top:272.0px;width:8.5px;height:8.5px;background:rgba(190,156,60,.44);"></div><div class="r" style="left:901.5px;top:285.8px;width:8.5px;height:8.5px;background:rgba(190,156,60,.44);"></div><div class="r" style="left:901.5px;top:299.7px;width:8.5px;height:8.5px;background:rgba(190,156,60,.44);"></div>
<div class="t" style="left:792.0px;width:200px;text-align:center;top:283.52px;font-size:12.8px;color:rgba(205,205,200,.8);font-weight:700;transform:scaleX(.8);-webkit-text-stroke:0;">ADD</div>
<svg class="r" style="left:862.2px;top:256.6px;" width="7.6" height="8.4" viewBox="0 0 7.6 8.4"><path d="M0.8 0.9H3.6L6.8 4.2L3.6 7.5H0.8Z" fill="#ffffff" stroke="#ffffff" stroke-width="0.9" stroke-linejoin="round"/></svg>
<svg class="r" style="left:914.7px;top:256.6px;" width="7.6" height="8.4" viewBox="0 0 7.6 8.4"><path d="M0.8 0.9H3.6L6.8 4.2L3.6 7.5H0.8Z" fill="#ffffff" stroke="#ffffff" stroke-width="0.9" stroke-linejoin="round"/></svg>
<svg class="r" style="left:861.6px;top:272.4px;" width="7" height="7" viewBox="0 0 7 7"><rect x="0.3" y="0.3" width="1.8" height="1.8" fill="#fdc818"/><rect x="0.3" y="2.6" width="1.8" height="1.8" fill="#fdc818"/><rect x="0.3" y="4.9" width="1.8" height="1.8" fill="#fdc818"/><rect x="2.6" y="0.3" width="1.8" height="1.8" fill="#fdc818"/><rect x="2.6" y="2.6" width="1.8" height="1.8" fill="#fdc818"/><rect x="2.6" y="4.9" width="1.8" height="1.8" fill="#fdc818"/><rect x="4.9" y="0.3" width="1.8" height="1.8" fill="#fdc818"/><rect x="4.9" y="2.6" width="1.8" height="1.8" fill="#fdc818"/><rect x="4.9" y="4.9" width="1.8" height="1.8" fill="#fdc818"/></svg>
<svg class="r" style="left:913.5px;top:272.5px;" width="8.4" height="6.6" viewBox="0 0 8.4 6.6"><circle cx="3.3" cy="3.3" r="2.9" fill="#22e0b0"/><path d="M6 1.9L7.6 3.3L6 4.7Z" fill="#22e0b0"/></svg>
<svg class="r" style="left:862.5px;top:286.7px;" width="8.4" height="6.6" viewBox="0 0 8.4 6.6"><circle cx="3.3" cy="3.3" r="2.9" fill="#3bd622"/><path d="M6 1.9L7.6 3.3L6 4.7Z" fill="#3bd622"/></svg>
<div class="t" style="left:873.0px;top:287.03px;font-size:5.6px;color:#f2f2f2;font-weight:400;text-shadow:0.6px 0.8px 0.6px rgba(0,0,0,.9);">X</div>
<svg class="r" style="left:862.5px;top:301.7px;" width="8.4" height="6.6" viewBox="0 0 8.4 6.6"><circle cx="3.3" cy="3.3" r="2.9" fill="#3bd622"/><path d="M6 1.9L7.6 3.3L6 4.7Z" fill="#3bd622"/></svg>
<div class="t" style="left:873.0px;top:302.03px;font-size:5.6px;color:#f2f2f2;font-weight:400;text-shadow:0.6px 0.8px 0.6px rgba(0,0,0,.9);">Y</div>
<svg class="r" style="left:862.5px;top:318.0px;" width="8.4" height="6.6" viewBox="0 0 8.4 6.6"><circle cx="3.3" cy="3.3" r="2.35" fill="#0c0c0c" fill-opacity="0.6" stroke="#3bd622" stroke-width="1.1"/><path d="M6 1.9L7.6 3.3L6 4.7Z" fill="#3bd622"/></svg>
<div class="t" style="left:873.0px;top:318.33px;font-size:5.6px;color:#f2f2f2;font-weight:400;text-shadow:0.6px 0.8px 0.6px rgba(0,0,0,.9);">Z</div>
<div class="r" style="left:880.0px;top:316.6px;width:13.3px;height:9.6px;border:1px solid #b0b0b0;box-sizing:border-box;border-radius:1.5px;background:rgba(10,10,10,.35);"></div><div class="t" style="left:786.6px;width:200px;text-align:center;top:318.51px;font-size:6.3px;color:#a8a8a8;font-weight:400;">0.0</div>
<div class="r cn" style="left:945.5px;top:317.5px;width:83.3px;height:45.5px;"></div>
<div class="r" style="left:968.8px;top:321.8px;width:8.5px;height:8.5px;background:rgba(190,156,60,.44);"></div><div class="r" style="left:968.8px;top:335.6px;width:8.5px;height:8.5px;background:rgba(190,156,60,.44);"></div><div class="r" style="left:968.8px;top:349.5px;width:8.5px;height:8.5px;background:rgba(190,156,60,.44);"></div><div class="r" style="left:982.6px;top:321.8px;width:8.5px;height:8.5px;background:rgba(190,156,60,.44);"></div><div class="r" style="left:982.6px;top:335.6px;width:8.5px;height:8.5px;background:rgba(190,156,60,.44);"></div><div class="r" style="left:982.6px;top:349.5px;width:8.5px;height:8.5px;background:rgba(190,156,60,.44);"></div><div class="r" style="left:996.5px;top:321.8px;width:8.5px;height:8.5px;background:rgba(190,156,60,.44);"></div><div class="r" style="left:996.5px;top:335.6px;width:8.5px;height:8.5px;background:rgba(190,156,60,.44);"></div><div class="r" style="left:996.5px;top:349.5px;width:8.5px;height:8.5px;background:rgba(190,156,60,.44);"></div>
<div class="t" style="left:886.8px;width:200px;text-align:center;top:333.02px;font-size:12.8px;color:rgba(205,205,200,.8);font-weight:700;transform:scaleX(.8);-webkit-text-stroke:0;">GET</div>
<svg class="r" style="left:950.4px;top:329.1px;" width="7" height="7" viewBox="0 0 7 7"><rect x="0.3" y="0.3" width="1.8" height="1.8" fill="#fdc818"/><rect x="0.3" y="2.6" width="1.8" height="1.8" fill="#fdc818"/><rect x="0.3" y="4.9" width="1.8" height="1.8" fill="#fdc818"/><rect x="2.6" y="0.3" width="1.8" height="1.8" fill="#fdc818"/><rect x="2.6" y="2.6" width="1.8" height="1.8" fill="#fdc818"/><rect x="2.6" y="4.9" width="1.8" height="1.8" fill="#fdc818"/><rect x="4.9" y="0.3" width="1.8" height="1.8" fill="#fdc818"/><rect x="4.9" y="2.6" width="1.8" height="1.8" fill="#fdc818"/><rect x="4.9" y="4.9" width="1.8" height="1.8" fill="#fdc818"/></svg>
<svg class="r" style="left:951.2px;top:343.5px;" width="8.4" height="6.6" viewBox="0 0 8.4 6.6"><circle cx="3.3" cy="3.3" r="2.9" fill="#22e0b0"/><path d="M6 1.9L7.6 3.3L6 4.7Z" fill="#22e0b0"/></svg>
<div class="t" style="left:1009.5px;top:322.03px;font-size:5.6px;color:#f2f2f2;font-weight:400;text-shadow:0.6px 0.8px 0.6px rgba(0,0,0,.9);">X</div>
<svg class="r" style="left:1014.7px;top:321.7px;" width="8.4" height="6.6" viewBox="0 0 8.4 6.6"><circle cx="3.3" cy="3.3" r="2.9" fill="#3bd622"/><path d="M6 1.9L7.6 3.3L6 4.7Z" fill="#3bd622"/></svg>
<div class="t" style="left:1009.5px;top:337.03px;font-size:5.6px;color:#f2f2f2;font-weight:400;text-shadow:0.6px 0.8px 0.6px rgba(0,0,0,.9);">Y</div>
<svg class="r" style="left:1014.7px;top:336.7px;" width="8.4" height="6.6" viewBox="0 0 8.4 6.6"><circle cx="3.3" cy="3.3" r="2.9" fill="#3bd622"/><path d="M6 1.9L7.6 3.3L6 4.7Z" fill="#3bd622"/></svg>
<div class="t" style="left:1009.5px;top:351.53px;font-size:5.6px;color:#f2f2f2;font-weight:400;text-shadow:0.6px 0.8px 0.6px rgba(0,0,0,.9);">Z</div>
<svg class="r" style="left:1014.7px;top:351.2px;" width="8.4" height="6.6" viewBox="0 0 8.4 6.6"><circle cx="3.3" cy="3.3" r="2.35" fill="#0c0c0c" fill-opacity="0.6" stroke="#3bd622" stroke-width="1.1"/><path d="M6 1.9L7.6 3.3L6 4.7Z" fill="#3bd622"/></svg>
<div class="r nd" style="left:1058.3px;top:304.5px;width:156.7px;height:116.8px;"><div class="r" style="left:0;top:0;width:100%;height:11.1px;border-radius:3.5px 3.5px 0 0;background:linear-gradient(to bottom, rgba(255,255,255,.22) 0, rgba(255,255,255,.04) 45%, rgba(0,0,0,.18) 100%), linear-gradient(to right, rgba(112,160,108,.98) 0, rgba(70,112,70,.85) 45%, rgba(36,56,38,.5) 100%);box-shadow:inset 0 0.7px 0 rgba(255,255,255,.35);"></div></div>
<svg class="r" style="left:1062.5px;top:306.4px;" width="9" height="7.2" viewBox="0 0 9 7.2"><path d="M0.4 0.4L3 2.6v2L0.4 6.8" stroke="#fff" stroke-width="1.1" fill="none"/><rect x="3" y="2.2" width="5.6" height="2.8" rx="1.2" fill="#fff"/></svg>
<div class="t" style="left:1073.3px;top:306.43px;font-size:7.2px;color:#eef2f4;font-weight:400;text-shadow:0.6px 0.8px 0.6px rgba(0,0,0,.9);transform:scaleX(.93);transform-origin:0 50%;letter-spacing:.05px;">Make Transform</div>
<svg class="r" style="left:1064.7px;top:321.7px;" width="8.4" height="6.6" viewBox="0 0 8.4 6.6"><circle cx="3.3" cy="3.3" r="2.9" fill="#3bd622"/><path d="M6 1.9L7.6 3.3L6 4.7Z" fill="#3bd622"/></svg>
<div class="t" style="left:1075.0px;top:321.82px;font-size:6px;color:#f2f2f2;font-weight:400;text-shadow:0.6px 0.8px 0.6px rgba(0,0,0,.9);">Location X</div>
<div class="t" style="right:722.5px;top:321.82px;font-size:6px;color:#f2f2f2;font-weight:400;text-shadow:0.6px 0.8px 0.6px rgba(0,0,0,.9);">Return Value</div>
<svg class="r" style="left:1199.9px;top:321.7px;" width="8.4" height="6.6" viewBox="0 0 8.4 6.6"><circle cx="3.3" cy="3.3" r="2.9" fill="#ff7a14"/><path d="M6 1.9L7.6 3.3L6 4.7Z" fill="#ff7a14"/></svg>
<svg class="r" style="left:1064.7px;top:336.7px;" width="8.4" height="6.6" viewBox="0 0 8.4 6.6"><circle cx="3.3" cy="3.3" r="2.9" fill="#3bd622"/><path d="M6 1.9L7.6 3.3L6 4.7Z" fill="#3bd622"/></svg>
<div class="t" style="left:1075.0px;top:336.82px;font-size:6px;color:#f2f2f2;font-weight:400;text-shadow:0.6px 0.8px 0.6px rgba(0,0,0,.9);">Location Y</div>
<svg class="r" style="left:1064.7px;top:353.5px;" width="8.4" height="6.6" viewBox="0 0 8.4 6.6"><circle cx="3.3" cy="3.3" r="2.35" fill="#0c0c0c" fill-opacity="0.6" stroke="#3bd622" stroke-width="1.1"/><path d="M6 1.9L7.6 3.3L6 4.7Z" fill="#3bd622"/></svg>
<div class="t" style="left:1075.0px;top:353.62px;font-size:6px;color:#f2f2f2;font-weight:400;text-shadow:0.6px 0.8px 0.6px rgba(0,0,0,.9);">Location Z</div>
<div class="r" style="left:1107.5px;top:352.0px;width:24.3px;height:9.8px;border:1px solid #d0d0d0;box-sizing:border-box;border-radius:1.5px;background:rgba(10,10,10,.35);"></div><div class="t" style="left:1019.7px;width:200px;text-align:center;top:354.01px;font-size:6.3px;color:#e8e8e8;font-weight:400;">-800.0</div>
<div class="t" style="left:1075.0px;top:369.82px;font-size:6px;color:#f2f2f2;font-weight:400;text-shadow:0.6px 0.8px 0.6px rgba(0,0,0,.9);">Rotation</div>
<svg class="r" style="left:1065.5px;top:376.2px;" width="8.4" height="6.6" viewBox="0 0 8.4 6.6"><circle cx="3.3" cy="3.3" r="2.35" fill="#0c0c0c" fill-opacity="0.6" stroke="#9fb0ff" stroke-width="1.1"/><path d="M6 1.9L7.6 3.3L6 4.7Z" fill="#9fb0ff"/></svg>
<div class="t" style="left:1081.0px;top:379.71px;font-size:6.2px;color:#6e6e6e;font-weight:400;">X</div>
<div class="r" style="left:1086.3px;top:378.0px;width:14.5px;height:10.0px;border:1px solid #d0d0d0;box-sizing:border-box;border-radius:1.5px;background:rgba(10,10,10,.35);"></div><div class="t" style="left:993.5px;width:200px;text-align:center;top:380.11px;font-size:6.3px;color:#e8e8e8;font-weight:400;">0.0</div>
<div class="t" style="left:1105.0px;top:379.71px;font-size:6.2px;color:#6e6e6e;font-weight:400;">Y</div>
<div class="r" style="left:1110.0px;top:378.0px;width:14.5px;height:10.0px;border:1px solid #d0d0d0;box-sizing:border-box;border-radius:1.5px;background:rgba(10,10,10,.35);"></div><div class="t" style="left:1017.2px;width:200px;text-align:center;top:380.11px;font-size:6.3px;color:#e8e8e8;font-weight:400;">0.0</div>
<div class="t" style="left:1128.3px;top:379.71px;font-size:6.2px;color:#6e6e6e;font-weight:400;">Z</div>
<div class="r" style="left:1133.0px;top:378.0px;width:14.5px;height:10.0px;border:1px solid #d0d0d0;box-sizing:border-box;border-radius:1.5px;background:rgba(10,10,10,.35);"></div><div class="t" style="left:1040.2px;width:200px;text-align:center;top:380.11px;font-size:6.3px;color:#e8e8e8;font-weight:400;">0.0</div>
<div class="t" style="left:1075.0px;top:396.82px;font-size:6px;color:#f2f2f2;font-weight:400;text-shadow:0.6px 0.8px 0.6px rgba(0,0,0,.9);">Scale</div>
<svg class="r" style="left:1065.5px;top:403.0px;" width="8.4" height="6.6" viewBox="0 0 8.4 6.6"><circle cx="3.3" cy="3.3" r="2.35" fill="#0c0c0c" fill-opacity="0.6" stroke="#e8b020" stroke-width="1.1"/><path d="M6 1.9L7.6 3.3L6 4.7Z" fill="#e8b020"/></svg>
<div class="t" style="left:1081.0px;top:406.71px;font-size:6.2px;color:#6e6e6e;font-weight:400;">X</div>
<div class="r" style="left:1086.3px;top:405.0px;width:14.5px;height:10.0px;border:1px solid #d0d0d0;box-sizing:border-box;border-radius:1.5px;background:rgba(10,10,10,.35);"></div><div class="t" style="left:993.5px;width:200px;text-align:center;top:407.11px;font-size:6.3px;color:#e8e8e8;font-weight:400;">1.0</div>
<div class="t" style="left:1105.0px;top:406.71px;font-size:6.2px;color:#6e6e6e;font-weight:400;">Y</div>
<div class="r" style="left:1110.0px;top:405.0px;width:14.5px;height:10.0px;border:1px solid #d0d0d0;box-sizing:border-box;border-radius:1.5px;background:rgba(10,10,10,.35);"></div><div class="t" style="left:1017.2px;width:200px;text-align:center;top:407.11px;font-size:6.3px;color:#e8e8e8;font-weight:400;">1.0</div>
<div class="t" style="left:1128.3px;top:406.71px;font-size:6.2px;color:#6e6e6e;font-weight:400;">Z</div>
<div class="r" style="left:1133.0px;top:405.0px;width:14.5px;height:10.0px;border:1px solid #d0d0d0;box-sizing:border-box;border-radius:1.5px;background:rgba(10,10,10,.35);"></div><div class="t" style="left:1040.2px;width:200px;text-align:center;top:407.11px;font-size:6.3px;color:#e8e8e8;font-weight:400;">1.0</div>
<div class="r vn" style="left:1147.5px;top:263.8px;width:65.8px;height:18.0px;background:radial-gradient(ellipse 70% 62% at 50% 0%, rgba(40,160,235,.75) 0, rgba(40,160,235,.3) 50%, rgba(40,160,235,0) 100%), linear-gradient(to bottom, rgba(98,100,98,.66) 0, rgba(78,80,78,.66) 55%, rgba(56,56,56,.7) 100%);"></div>
<div class="t" style="right:725.0px;top:269.62px;font-size:6px;color:#f2f2f2;font-weight:400;text-shadow:0.6px 0.8px 0.6px rgba(0,0,0,.9);">Dyn Mesh</div>
<svg class="r" style="left:1198.0px;top:269.5px;" width="8.4" height="6.6" viewBox="0 0 8.4 6.6"><circle cx="3.3" cy="3.3" r="2.9" fill="#19a8f2"/><path d="M6 1.9L7.6 3.3L6 4.7Z" fill="#19a8f2"/></svg>
<div class="r vn" style="left:1050.8px;top:426.3px;width:65.5px;height:17.5px;background:radial-gradient(ellipse 70% 62% at 50% 0%, rgba(90,220,60,.75) 0, rgba(90,220,60,.3) 50%, rgba(90,220,60,0) 100%), linear-gradient(to bottom, rgba(98,100,98,.66) 0, rgba(78,80,78,.66) 55%, rgba(56,56,56,.7) 100%);"></div>
<div class="t" style="right:821.7px;top:431.82px;font-size:6px;color:#f2f2f2;font-weight:400;text-shadow:0.6px 0.8px 0.6px rgba(0,0,0,.9);">Radius</div>
<svg class="r" style="left:1101.0px;top:431.7px;" width="8.4" height="6.6" viewBox="0 0 8.4 6.6"><circle cx="3.3" cy="3.3" r="2.9" fill="#3bd622"/><path d="M6 1.9L7.6 3.3L6 4.7Z" fill="#3bd622"/></svg>
<div class="r cn" style="left:1131.3px;top:426.3px;width:77.5px;height:35.0px;"></div>
<svg class="r" style="left:1138.2px;top:431.4px;" width="7.2" height="7.2" viewBox="0 0 7.2 7.2"><circle cx="3.6" cy="3.6" r="2.7" fill="#3bd622" fill-opacity="0.35" stroke="#3bd622" stroke-opacity="0.85" stroke-width="1"/></svg>
<svg class="r" style="left:1138.2px;top:448.2px;" width="7.2" height="7.2" viewBox="0 0 7.2 7.2"><circle cx="3.6" cy="3.6" r="2.7" fill="#3bd622" fill-opacity="0.35" stroke="#3bd622" stroke-opacity="0.85" stroke-width="1"/></svg>
<div class="r" style="left:1150.0px;top:447.0px;width:14.5px;height:9.4px;border:1px solid #b0b0b0;box-sizing:border-box;border-radius:1.5px;background:rgba(10,10,10,.35);"></div><div class="t" style="left:1057.2px;width:200px;text-align:center;top:448.81px;font-size:6.3px;color:#a8a8a8;font-weight:400;">4.0</div>
<svg class="r" style="left:1195.7px;top:432.7px;" width="7.2" height="7.2" viewBox="0 0 7.2 7.2"><circle cx="3.6" cy="3.6" r="2.7" fill="#3bd622" fill-opacity="0.35" stroke="#3bd622" stroke-opacity="0.85" stroke-width="1"/></svg>
<div class="t" style="left:1070.2px;width:200px;text-align:center;top:437.57px;font-size:11px;color:#c8c8c8;font-weight:400;">&#247;</div>
<div class="t" style="left:1170.5px;top:451.21px;font-size:6.4px;color:#f0f0f0;font-weight:400;text-shadow:0.6px 0.8px 0.6px rgba(0,0,0,.9);">Add pin</div>
<svg class="r" style="left:1197.0px;top:451.0px;" width="7.2" height="7.2" viewBox="0 0 7.2 7.2"><circle cx="3.6" cy="3.6" r="3" stroke="#f0f0f0" stroke-width="0.9" fill="none"/><path d="M3.6 2V5.2M2 3.6H5.2" stroke="#f0f0f0" stroke-width="0.9"/></svg>
<div class="r nd" style="left:1237.0px;top:235.4px;width:182.3px;height:232.6px;"><div class="r" style="left:0;top:0;width:100%;height:12.2px;border-radius:3.5px 3.5px 0 0;background:linear-gradient(to bottom, rgba(255,255,255,.22) 0, rgba(255,255,255,.04) 45%, rgba(0,0,0,.18) 100%), linear-gradient(to right, rgba(68,122,164,.98) 0, rgba(46,88,124,.85) 45%, rgba(28,46,62,.55) 100%);box-shadow:inset 0 0.7px 0 rgba(255,255,255,.35);"></div></div>
<div class="t" style="left:1243.5px;top:237.02px;font-size:8px;color:#d8e8f0;font-family:'Liberation Serif',serif;font-style:italic;opacity:.75">&#402;</div>
<div class="t" style="left:1251.8px;top:237.88px;font-size:7.2px;color:#eef2f4;font-weight:400;text-shadow:0.6px 0.8px 0.6px rgba(0,0,0,.9);transform:scaleX(.93);transform-origin:0 50%;letter-spacing:.05px;">Append Cone</div>
<svg class="r" style="left:1242.2px;top:253.0px;" width="7.6" height="8.4" viewBox="0 0 7.6 8.4"><path d="M0.8 0.9H3.6L6.8 4.2L3.6 7.5H0.8Z" fill="#ffffff" stroke="#ffffff" stroke-width="0.9" stroke-linejoin="round"/></svg>
<svg class="r" style="left:1405.2px;top:253.0px;" width="7.6" height="8.4" viewBox="0 0 7.6 8.4"><path d="M0.8 0.9H3.6L6.8 4.2L3.6 7.5H0.8Z" fill="#ffffff" stroke="#ffffff" stroke-width="0.9" stroke-linejoin="round"/></svg>
<svg class="r" style="left:1242.5px;top:269.2px;" width="8.4" height="6.6" viewBox="0 0 8.4 6.6"><circle cx="3.3" cy="3.3" r="2.9" fill="#19a8f2"/><path d="M6 1.9L7.6 3.3L6 4.7Z" fill="#19a8f2"/></svg>
<div class="t" style="left:1253.8px;top:269.32px;font-size:6px;color:#f2f2f2;font-weight:400;text-shadow:0.6px 0.8px 0.6px rgba(0,0,0,.9);">Target Mesh</div>
<div class="t" style="right:518.2px;top:269.32px;font-size:6px;color:#f2f2f2;font-weight:400;text-shadow:0.6px 0.8px 0.6px rgba(0,0,0,.9);">Target Mesh</div>
<svg class="r" style="left:1403.7px;top:269.2px;" width="8.4" height="6.6" viewBox="0 0 8.4 6.6"><circle cx="3.3" cy="3.3" r="2.35" fill="#0c0c0c" fill-opacity="0.6" stroke="#19a8f2" stroke-width="1.1"/><path d="M6 1.9L7.6 3.3L6 4.7Z" fill="#19a8f2"/></svg>
<svg class="r" style="left:1242.5px;top:283.9px;" width="8.4" height="6.6" viewBox="0 0 8.4 6.6"><circle cx="3.3" cy="3.3" r="2.35" fill="#0c0c0c" fill-opacity="0.6" stroke="#0a3f9a" stroke-width="1.1"/><path d="M6 1.9L7.6 3.3L6 4.7Z" fill="#0a3f9a"/></svg>
<div class="t" style="left:1253.8px;top:284.02px;font-size:6px;color:#f2f2f2;font-weight:400;text-shadow:0.6px 0.8px 0.6px rgba(0,0,0,.9);">Primitive Options</div>
<svg class="r" style="left:1242.5px;top:298.7px;" width="8.4" height="6.6" viewBox="0 0 8.4 6.6"><circle cx="3.3" cy="3.3" r="2.9" fill="#ff7a14"/><path d="M6 1.9L7.6 3.3L6 4.7Z" fill="#ff7a14"/></svg>
<div class="t" style="left:1253.8px;top:298.82px;font-size:6px;color:#f2f2f2;font-weight:400;text-shadow:0.6px 0.8px 0.6px rgba(0,0,0,.9);">Transform</div>
<svg class="r" style="left:1242.5px;top:313.7px;" width="8.4" height="6.6" viewBox="0 0 8.4 6.6"><circle cx="3.3" cy="3.3" r="2.9" fill="#3bd622"/><path d="M6 1.9L7.6 3.3L6 4.7Z" fill="#3bd622"/></svg>
<div class="t" style="left:1253.8px;top:313.82px;font-size:6px;color:#f2f2f2;font-weight:400;text-shadow:0.6px 0.8px 0.6px rgba(0,0,0,.9);">Base Radius</div>
<svg class="r" style="left:1242.5px;top:328.7px;" width="8.4" height="6.6" viewBox="0 0 8.4 6.6"><circle cx="3.3" cy="3.3" r="2.9" fill="#3bd622"/><path d="M6 1.9L7.6 3.3L6 4.7Z" fill="#3bd622"/></svg>
<div class="t" style="left:1253.8px;top:328.82px;font-size:6px;color:#f2f2f2;font-weight:400;text-shadow:0.6px 0.8px 0.6px rgba(0,0,0,.9);">Top Radius</div>
<svg class="r" style="left:1242.5px;top:345.5px;" width="8.4" height="6.6" viewBox="0 0 8.4 6.6"><circle cx="3.3" cy="3.3" r="2.35" fill="#0c0c0c" fill-opacity="0.6" stroke="#3bd622" stroke-width="1.1"/><path d="M6 1.9L7.6 3.3L6 4.7Z" fill="#3bd622"/></svg>
<div class="t" style="left:1253.8px;top:345.62px;font-size:6px;color:#f2f2f2;font-weight:400;text-shadow:0.6px 0.8px 0.6px rgba(0,0,0,.9);">Height</div>
<div class="r" style="left:1275.0px;top:343.8px;width:25.0px;height:9.6px;border:1px solid #d0d0d0;box-sizing:border-box;border-radius:1.5px;background:rgba(10,10,10,.35);"></div><div class="t" style="left:1187.5px;width:200px;text-align:center;top:345.71px;font-size:6.3px;color:#e8e8e8;font-weight:400;">1300.0</div>
<svg class="r" style="left:1242.5px;top:363.7px;" width="8.4" height="6.6" viewBox="0 0 8.4 6.6"><circle cx="3.3" cy="3.3" r="2.35" fill="#0c0c0c" fill-opacity="0.6" stroke="#22e0b0" stroke-width="1.1"/><path d="M6 1.9L7.6 3.3L6 4.7Z" fill="#22e0b0"/></svg>
<div class="t" style="left:1253.8px;top:363.82px;font-size:6px;color:#f2f2f2;font-weight:400;text-shadow:0.6px 0.8px 0.6px rgba(0,0,0,.9);">Radial Steps</div>
<div class="r" style="left:1289.5px;top:362.0px;width:13.0px;height:9.8px;border:1px solid #d0d0d0;box-sizing:border-box;border-radius:1.5px;background:rgba(10,10,10,.35);"></div><div class="t" style="left:1196.0px;width:200px;text-align:center;top:364.01px;font-size:6.3px;color:#e8e8e8;font-weight:400;">32</div>
<svg class="r" style="left:1242.5px;top:381.7px;" width="8.4" height="6.6" viewBox="0 0 8.4 6.6"><circle cx="3.3" cy="3.3" r="2.35" fill="#0c0c0c" fill-opacity="0.6" stroke="#22e0b0" stroke-width="1.1"/><path d="M6 1.9L7.6 3.3L6 4.7Z" fill="#22e0b0"/></svg>
<div class="t" style="left:1253.8px;top:381.82px;font-size:6px;color:#f2f2f2;font-weight:400;text-shadow:0.6px 0.8px 0.6px rgba(0,0,0,.9);">Height Steps</div>
<div class="r" style="left:1292.5px;top:380.3px;width:8.0px;height:9.7px;border:1px solid #d0d0d0;box-sizing:border-box;border-radius:1.5px;background:rgba(10,10,10,.35);"></div><div class="t" style="left:1196.5px;width:200px;text-align:center;top:382.26px;font-size:6.3px;color:#e8e8e8;font-weight:400;">1</div>
<svg class="r" style="left:1242.5px;top:400.0px;" width="8.4" height="6.6" viewBox="0 0 8.4 6.6"><circle cx="3.3" cy="3.3" r="2.35" fill="#0c0c0c" fill-opacity="0.6" stroke="#8a0c0c" stroke-width="1.1"/><path d="M6 1.9L7.6 3.3L6 4.7Z" fill="#8a0c0c"/></svg>
<div class="t" style="left:1253.8px;top:400.12px;font-size:6px;color:#f2f2f2;font-weight:400;text-shadow:0.6px 0.8px 0.6px rgba(0,0,0,.9);">Capped</div>
<div class="r" style="left:1277.3px;top:399.2px;width:8.4px;height:8.4px;background:#0c0c0c;border:1px solid #2e2e2e;box-sizing:border-box;border-radius:1.5px;"></div><svg class="r" style="left:1278.5px;top:400.6px;" width="6" height="6" viewBox="0 0 6 6"><path d="M0.6 3L2.3 4.8L5.4 0.8" stroke="#1b7df2" stroke-width="1.3" fill="none"/></svg>
<div class="t" style="left:1253.8px;top:415.62px;font-size:6px;color:#f2f2f2;font-weight:400;text-shadow:0.6px 0.8px 0.6px rgba(0,0,0,.9);">Origin</div>
<svg class="r" style="left:1243.0px;top:422.5px;" width="8.4" height="6.6" viewBox="0 0 8.4 6.6"><circle cx="3.3" cy="3.3" r="2.35" fill="#0c0c0c" fill-opacity="0.6" stroke="#0f5a52" stroke-width="1.1"/><path d="M6 1.9L7.6 3.3L6 4.7Z" fill="#0f5a52"/></svg>
<div class="r" style="left:1256.3px;top:423.0px;width:96.2px;height:13.3px;background:#0a0a0a;border:1px solid #2c2c2c;box-sizing:border-box;border-radius:2px;"></div><div class="t" style="left:1261.3px;top:426.68px;font-size:5.6px;color:#b8b8b8;font-weight:400;">Base</div><svg class="r" style="left:1342.0px;top:428.0px;" width="5" height="3.4" viewBox="0 0 5 3.4"><path d="M0.5 0.5L2.5 2.7L4.5 0.5" stroke="#d0d0d0" stroke-width="1" fill="none"/></svg>
<div class="t" style="left:1253.8px;top:444.82px;font-size:6px;color:#f2f2f2;font-weight:400;text-shadow:0.6px 0.8px 0.6px rgba(0,0,0,.9);">Debug</div>
<svg class="r" style="left:1243.0px;top:451.0px;" width="8.4" height="6.6" viewBox="0 0 8.4 6.6"><circle cx="3.3" cy="3.3" r="2.35" fill="#0c0c0c" fill-opacity="0.6" stroke="#19a8f2" stroke-width="1.1"/><path d="M6 1.9L7.6 3.3L6 4.7Z" fill="#19a8f2"/></svg>
<div class="r" style="left:1257.5px;top:452.0px;width:41.3px;height:11.0px;background:#2a2c2a;border:1px solid #343634;box-sizing:border-box;border-radius:2px;"></div><div class="t" style="left:1260.0px;top:454.53px;font-size:5.6px;color:#8c8c8c;font-weight:400;">Select Asset</div><svg class="r" style="left:1291.3px;top:455.9px;" width="5" height="3.4" viewBox="0 0 5 3.4"><path d="M0.5 0.5L2.5 2.7L4.5 0.5" stroke="#a0a0a0" stroke-width="1" fill="none"/></svg>
<svg class="r" style="left:1302.6px;top:454.3px;" width="6.4" height="6.4" viewBox="0 0 6.4 6.4"><circle cx="3.2" cy="3.2" r="2.7" stroke="#4a4c4a" stroke-width="0.9" fill="none"/><path d="M4.6 3.2H1.9M2.9 2.1L1.8 3.2L2.9 4.3" stroke="#4a4c4a" stroke-width="0.8" fill="none"/></svg><svg class="r" style="left:1312.0px;top:454.1px;" width="7.4" height="7.4" viewBox="0 0 7.4 7.4"><circle cx="3" cy="3" r="2.4" stroke="#4a4c4a" stroke-width="0.9" fill="none"/><path d="M4.8 4.8L6.8 6.8" stroke="#4a4c4a" stroke-width="1.1"/></svg>
<div class="r nd" style="left:1495.8px;top:239.7px;width:90.6px;height:46.7px;"><div class="r" style="left:0;top:0;width:100%;height:12.0px;border-radius:3.5px 3.5px 0 0;background:linear-gradient(to bottom, rgba(255,255,255,.22) 0, rgba(255,255,255,.04) 45%, rgba(0,0,0,.18) 100%), linear-gradient(to right, rgba(150,150,150,.98) 0, rgba(100,100,100,.85) 45%, rgba(45,45,45,.5) 100%);box-shadow:inset 0 0.7px 0 rgba(255,255,255,.35);"></div></div>
<svg class="r" style="left:1500.4px;top:242.2px;" width="9" height="7" viewBox="0 0 9 7"><path d="M0 3.5h2.5M2.5 1.2v4.6M2.5 1.2h2M2.5 5.8h2" stroke="#fff" stroke-width="1.1" fill="none"/><rect x="4.4" y="0" width="4.2" height="2.6" fill="#fff"/><rect x="4.4" y="4.4" width="4.2" height="2.6" fill="#fff"/></svg>
<div class="t" style="left:1511.4px;top:242.08px;font-size:7.2px;color:#eef2f4;font-weight:400;text-shadow:0.6px 0.8px 0.6px rgba(0,0,0,.9);transform:scaleX(.93);transform-origin:0 50%;letter-spacing:.05px;">Branch</div>
<svg class="r" style="left:1502.0px;top:256.6px;" width="7.6" height="8.4" viewBox="0 0 7.6 8.4"><path d="M0.8 0.9H3.6L6.8 4.2L3.6 7.5H0.8Z" fill="#ffffff" stroke="#ffffff" stroke-width="0.9" stroke-linejoin="round"/></svg>
<div class="t" style="right:349.2px;top:257.62px;font-size:6px;color:#f2f2f2;font-weight:400;text-shadow:0.6px 0.8px 0.6px rgba(0,0,0,.9);">True</div>
<svg class="r" style="left:1572.8px;top:256.6px;" width="7.6" height="8.4" viewBox="0 0 7.6 8.4"><path d="M0.8 0.9H3.6L6.8 4.2L3.6 7.5H0.8Z" fill="#ffffff" stroke="#ffffff" stroke-width="0.9" stroke-linejoin="round"/></svg>
<svg class="r" style="left:1502.3px;top:273.4px;" width="8.4" height="6.6" viewBox="0 0 8.4 6.6"><circle cx="3.3" cy="3.3" r="2.9" fill="#8a0c0c"/><path d="M6 1.9L7.6 3.3L6 4.7Z" fill="#8a0c0c"/></svg>
<div class="t" style="left:1512.5px;top:273.52px;font-size:6px;color:#f2f2f2;font-weight:400;text-shadow:0.6px 0.8px 0.6px rgba(0,0,0,.9);">Condition</div>
<div class="t" style="right:349.2px;top:274.02px;font-size:6px;color:#f2f2f2;font-weight:400;text-shadow:0.6px 0.8px 0.6px rgba(0,0,0,.9);">False</div>
<svg class="r" style="left:1572.8px;top:273.0px;" width="7.6" height="8.4" viewBox="0 0 7.6 8.4"><path d="M0.8 0.9H3.6L6.8 4.2L3.6 7.5H0.8Z" fill="none" stroke="#ffffff" stroke-width="0.9" stroke-linejoin="round"/></svg>
<div class="r nd" style="left:1625.8px;top:239.7px;width:182.5px;height:125.3px;"><div class="r" style="left:0;top:0;width:100%;height:12.0px;border-radius:3.5px 3.5px 0 0;background:linear-gradient(to bottom, rgba(255,255,255,.22) 0, rgba(255,255,255,.04) 45%, rgba(0,0,0,.18) 100%), linear-gradient(to right, rgba(68,122,164,.98) 0, rgba(46,88,124,.85) 45%, rgba(28,46,62,.55) 100%);box-shadow:inset 0 0.7px 0 rgba(255,255,255,.35);"></div></div>
<svg class="r" style="left:1630.2px;top:241.7px;" width="9" height="8" viewBox="0 0 9 8"><circle cx="4" cy="2.8" r="2.4" stroke="#fff" stroke-width="1" fill="none"/><path d="M0.4 7.4h7.4l-1-1.8H1.4z" fill="#fff"/><path d="M6 5.4l2.6 1.2-2.6 1.2z" fill="#fff"/></svg>
<div class="t" style="left:1640.3px;top:242.08px;font-size:7.2px;color:#eef2f4;font-weight:400;text-shadow:0.6px 0.8px 0.6px rgba(0,0,0,.9);transform:scaleX(.93);transform-origin:0 50%;letter-spacing:.05px;">SpawnActor BP Spawn Marker</div>
<svg class="r" style="left:1632.0px;top:256.6px;" width="7.6" height="8.4" viewBox="0 0 7.6 8.4"><path d="M0.8 0.9H3.6L6.8 4.2L3.6 7.5H0.8Z" fill="#ffffff" stroke="#ffffff" stroke-width="0.9" stroke-linejoin="round"/></svg>
<svg class="r" style="left:1794.4px;top:256.6px;" width="7.6" height="8.4" viewBox="0 0 7.6 8.4"><path d="M0.8 0.9H3.6L6.8 4.2L3.6 7.5H0.8Z" fill="none" stroke="#ffffff" stroke-width="0.9" stroke-linejoin="round"/></svg>
<div class="t" style="left:1642.5px;top:272.82px;font-size:6px;color:#f2f2f2;font-weight:400;text-shadow:0.6px 0.8px 0.6px rgba(0,0,0,.9);">Class</div>
<svg class="r" style="left:1632.3px;top:279.5px;" width="8.4" height="6.6" viewBox="0 0 8.4 6.6"><circle cx="3.3" cy="3.3" r="2.35" fill="#0c0c0c" fill-opacity="0.6" stroke="#5a10c0" stroke-width="1.1"/><path d="M6 1.9L7.6 3.3L6 4.7Z" fill="#5a10c0"/></svg>
<div class="r" style="left:1646.0px;top:280.3px;width:49.8px;height:10.7px;background:#2a2c2a;border:1px solid #343634;box-sizing:border-box;border-radius:2px;"></div><div class="t" style="left:1648.5px;top:282.89px;font-size:5.2px;color:#8c8c8c;font-weight:400;">BP Spawn Marker</div><svg class="r" style="left:1688.3px;top:284.0px;" width="5" height="3.4" viewBox="0 0 5 3.4"><path d="M0.5 0.5L2.5 2.7L4.5 0.5" stroke="#a0a0a0" stroke-width="1" fill="none"/></svg>
<svg class="r" style="left:1699.6px;top:282.4px;" width="6.4" height="6.4" viewBox="0 0 6.4 6.4"><circle cx="3.2" cy="3.2" r="2.7" stroke="#4a4c4a" stroke-width="0.9" fill="none"/><path d="M4.6 3.2H1.9M2.9 2.1L1.8 3.2L2.9 4.3" stroke="#4a4c4a" stroke-width="0.8" fill="none"/></svg><svg class="r" style="left:1709.0px;top:282.2px;" width="7.4" height="7.4" viewBox="0 0 7.4 7.4"><circle cx="3" cy="3" r="2.4" stroke="#4a4c4a" stroke-width="0.9" fill="none"/><path d="M4.8 4.8L6.8 6.8" stroke="#4a4c4a" stroke-width="1.1"/></svg>
<div class="t" style="right:128.0px;top:273.52px;font-size:6px;color:#f2f2f2;font-weight:400;text-shadow:0.6px 0.8px 0.6px rgba(0,0,0,.9);">Return Value</div>
<svg class="r" style="left:1793.5px;top:273.4px;" width="8.4" height="6.6" viewBox="0 0 8.4 6.6"><circle cx="3.3" cy="3.3" r="2.35" fill="#0c0c0c" fill-opacity="0.6" stroke="#19a8f2" stroke-width="1.1"/><path d="M6 1.9L7.6 3.3L6 4.7Z" fill="#19a8f2"/></svg>
<svg class="r" style="left:1632.3px;top:300.3px;" width="8.4" height="6.6" viewBox="0 0 8.4 6.6"><circle cx="3.3" cy="3.3" r="2.9" fill="#ff7a14"/><path d="M6 1.9L7.6 3.3L6 4.7Z" fill="#ff7a14"/></svg>
<div class="t" style="left:1642.5px;top:300.42px;font-size:6px;color:#f2f2f2;font-weight:400;text-shadow:0.6px 0.8px 0.6px rgba(0,0,0,.9);">Spawn Transform</div>
<div class="t" style="left:1642.5px;top:315.12px;font-size:6px;color:#f2f2f2;font-weight:400;text-shadow:0.6px 0.8px 0.6px rgba(0,0,0,.9);">Collision Handling Override</div>
<svg class="r" style="left:1632.3px;top:321.4px;" width="8.4" height="6.6" viewBox="0 0 8.4 6.6"><circle cx="3.3" cy="3.3" r="2.35" fill="#0c0c0c" fill-opacity="0.6" stroke="#0f5a52" stroke-width="1.1"/><path d="M6 1.9L7.6 3.3L6 4.7Z" fill="#0f5a52"/></svg>
<div class="r" style="left:1645.3px;top:322.5px;width:95.7px;height:12.5px;background:#0a0a0a;border:1px solid #2c2c2c;box-sizing:border-box;border-radius:2px;"></div><div class="t" style="left:1650.3px;top:325.78px;font-size:5.6px;color:#b8b8b8;font-weight:400;">Default</div><svg class="r" style="left:1730.5px;top:327.1px;" width="5" height="3.4" viewBox="0 0 5 3.4"><path d="M0.5 0.5L2.5 2.7L4.5 0.5" stroke="#d0d0d0" stroke-width="1" fill="none"/></svg>
<svg class="r" style="left:1632.3px;top:343.7px;" width="8.4" height="6.6" viewBox="0 0 8.4 6.6"><circle cx="3.3" cy="3.3" r="2.35" fill="#0c0c0c" fill-opacity="0.6" stroke="#19a8f2" stroke-width="1.1"/><path d="M6 1.9L7.6 3.3L6 4.7Z" fill="#19a8f2"/></svg>
<div class="t" style="left:1642.5px;top:343.82px;font-size:6px;color:#f2f2f2;font-weight:400;text-shadow:0.6px 0.8px 0.6px rgba(0,0,0,.9);">Instigator</div>
<svg class="r" style="left:1714.5px;top:358.7px;" width="6" height="4" viewBox="0 0 6 4"><path d="M0.6 0.6L3 3L5.4 0.6" stroke="#f0f0f0" stroke-width="1.2" fill="none"/></svg>
<div class="r cn" style="left:1455.6px;top:296.7px;width:83.6px;height:36.1px;"></div>
<div class="r" style="left:1480.0px;top:297.5px;width:8.2px;height:8.2px;background:rgba(190,156,60,.44);"></div><div class="r" style="left:1480.0px;top:310.8px;width:8.2px;height:8.2px;background:rgba(190,156,60,.44);"></div><div class="r" style="left:1480.0px;top:324.0px;width:8.2px;height:8.2px;background:rgba(190,156,60,.44);"></div><div class="r" style="left:1493.3px;top:297.5px;width:8.2px;height:8.2px;background:rgba(190,156,60,.44);"></div><div class="r" style="left:1493.3px;top:310.8px;width:8.2px;height:8.2px;background:rgba(190,156,60,.44);"></div><div class="r" style="left:1493.3px;top:324.0px;width:8.2px;height:8.2px;background:rgba(190,156,60,.44);"></div><div class="r" style="left:1506.5px;top:297.5px;width:8.2px;height:8.2px;background:rgba(190,156,60,.44);"></div><div class="r" style="left:1506.5px;top:310.8px;width:8.2px;height:8.2px;background:rgba(190,156,60,.44);"></div><div class="r" style="left:1506.5px;top:324.0px;width:8.2px;height:8.2px;background:rgba(190,156,60,.44);"></div>
<div class="t" style="left:1397.2px;width:200px;text-align:center;top:308.42px;font-size:12.8px;color:rgba(205,205,200,.8);font-weight:700;transform:scaleX(.8);-webkit-text-stroke:0;">GET</div>
<svg class="r" style="left:1461.3px;top:304.4px;" width="7" height="7" viewBox="0 0 7 7"><rect x="0.3" y="0.3" width="1.8" height="1.8" fill="#fdc818"/><rect x="0.3" y="2.6" width="1.8" height="1.8" fill="#fdc818"/><rect x="0.3" y="4.9" width="1.8" height="1.8" fill="#fdc818"/><rect x="2.6" y="0.3" width="1.8" height="1.8" fill="#fdc818"/><rect x="2.6" y="2.6" width="1.8" height="1.8" fill="#fdc818"/><rect x="2.6" y="4.9" width="1.8" height="1.8" fill="#fdc818"/><rect x="4.9" y="0.3" width="1.8" height="1.8" fill="#fdc818"/><rect x="4.9" y="2.6" width="1.8" height="1.8" fill="#fdc818"/><rect x="4.9" y="4.9" width="1.8" height="1.8" fill="#fdc818"/></svg>
<svg class="r" style="left:1462.0px;top:318.7px;" width="8.4" height="6.6" viewBox="0 0 8.4 6.6"><circle cx="3.3" cy="3.3" r="2.9" fill="#22e0b0"/><path d="M6 1.9L7.6 3.3L6 4.7Z" fill="#22e0b0"/></svg>
<svg class="r" style="left:1526.5px;top:311.5px;" width="7" height="7" viewBox="0 0 7 7"><path d="M3.5 0.4L6.6 3.5L3.5 6.6L0.4 3.5Z" fill="#fdc818"/></svg>
<div class="r cn" style="left:1544.7px;top:305.8px;width:63.6px;height:17.2px;"></div>
<svg class="r" style="left:1550.9px;top:311.7px;" width="8.4" height="6.6" viewBox="0 0 8.4 6.6"><circle cx="3.3" cy="3.3" r="2.9" fill="#fdc818"/><path d="M6 1.9L7.6 3.3L6 4.7Z" fill="#fdc818"/></svg>
<svg class="r" style="left:1574.9px;top:313.5px;" width="3" height="3" viewBox="0 0 3 3"><circle cx="1.5" cy="1.5" r="1.3" fill="#d8d8d8"/></svg>
<svg class="r" style="left:1593.4px;top:311.7px;" width="8.4" height="6.6" viewBox="0 0 8.4 6.6"><circle cx="3.3" cy="3.3" r="2.9" fill="#ff7a14"/><path d="M6 1.9L7.6 3.3L6 4.7Z" fill="#ff7a14"/></svg>
<div class="r vn" style="left:1448.0px;top:344.2px;width:64.8px;height:17.8px;background:radial-gradient(ellipse 70% 62% at 50% 0%, rgba(90,220,60,.75) 0, rgba(90,220,60,.3) 50%, rgba(90,220,60,0) 100%), linear-gradient(to bottom, rgba(98,100,98,.66) 0, rgba(78,80,78,.66) 55%, rgba(56,56,56,.7) 100%);"></div>
<div class="t" style="right:424.7px;top:349.82px;font-size:6px;color:#f2f2f2;font-weight:400;text-shadow:0.6px 0.8px 0.6px rgba(0,0,0,.9);">Radius</div>
<svg class="r" style="left:1498.1px;top:349.7px;" width="8.4" height="6.6" viewBox="0 0 8.4 6.6"><circle cx="3.3" cy="3.3" r="2.9" fill="#3bd622"/><path d="M6 1.9L7.6 3.3L6 4.7Z" fill="#3bd622"/></svg>
<div class="r cn" style="left:1520.8px;top:345.3px;width:88.4px;height:34.7px;"></div>
<svg class="r" style="left:1527.0px;top:350.0px;" width="7.2" height="7.2" viewBox="0 0 7.2 7.2"><circle cx="3.6" cy="3.6" r="2.7" fill="#3bd622" fill-opacity="0.35" stroke="#3bd622" stroke-opacity="0.85" stroke-width="1"/></svg>
<svg class="r" style="left:1527.0px;top:366.7px;" width="7.2" height="7.2" viewBox="0 0 7.2 7.2"><circle cx="3.6" cy="3.6" r="2.7" fill="#3bd622" fill-opacity="0.35" stroke="#3bd622" stroke-opacity="0.85" stroke-width="1"/></svg>
<div class="r" style="left:1539.7px;top:365.8px;width:25.0px;height:9.0px;border:1px solid #d0d0d0;box-sizing:border-box;border-radius:1.5px;background:rgba(10,10,10,.35);"></div><div class="t" style="left:1452.2px;width:200px;text-align:center;top:367.41px;font-size:6.3px;color:#e8e8e8;font-weight:400;">2000.0</div>
<div class="t" style="left:1466.0px;width:200px;text-align:center;top:357.90px;font-size:10px;color:#c8c8c8;font-weight:400;">&gt;</div>
<svg class="r" style="left:1595.3px;top:358.9px;" width="7.2" height="7.2" viewBox="0 0 7.2 7.2"><circle cx="3.6" cy="3.6" r="2.6" fill="#6a4a4a" stroke="#c04848" stroke-width="1"/></svg>
<div class="r nd" style="left:629.4px;top:393.5px;width:141.6px;height:59.3px;"><div class="r" style="left:0;top:0;width:100%;height:11.8px;border-radius:3.5px 3.5px 0 0;background:linear-gradient(to bottom, rgba(255,255,255,.22) 0, rgba(255,255,255,.04) 45%, rgba(0,0,0,.18) 100%), linear-gradient(to right, rgba(112,160,108,.98) 0, rgba(70,112,70,.85) 45%, rgba(36,56,38,.5) 100%);box-shadow:inset 0 0.7px 0 rgba(255,255,255,.35);"></div></div>
<div class="t" style="left:635.9px;top:394.92px;font-size:8px;color:#d8e8f0;font-family:'Liberation Serif',serif;font-style:italic;opacity:.75">&#402;</div>
<div class="t" style="left:643.8px;top:395.78px;font-size:7.2px;color:#eef2f4;font-weight:400;text-shadow:0.6px 0.8px 0.6px rgba(0,0,0,.9);transform:scaleX(.93);transform-origin:0 50%;letter-spacing:.05px;">Random Float in Range from Stream</div>
<svg class="r" style="left:635.1px;top:411.0px;" width="8.4" height="6.6" viewBox="0 0 8.4 6.6"><circle cx="3.3" cy="3.3" r="2.9" fill="#1466e0"/><path d="M6 1.9L7.6 3.3L6 4.7Z" fill="#1466e0"/></svg>
<div class="t" style="left:646.0px;top:411.12px;font-size:6px;color:#f2f2f2;font-weight:400;text-shadow:0.6px 0.8px 0.6px rgba(0,0,0,.9);">Stream</div>
<div class="t" style="right:1166.2px;top:411.12px;font-size:6px;color:#f2f2f2;font-weight:400;text-shadow:0.6px 0.8px 0.6px rgba(0,0,0,.9);">Return Value</div>
<svg class="r" style="left:755.5px;top:411.0px;" width="8.4" height="6.6" viewBox="0 0 8.4 6.6"><circle cx="3.3" cy="3.3" r="2.9" fill="#3bd622"/><path d="M6 1.9L7.6 3.3L6 4.7Z" fill="#3bd622"/></svg>
<svg class="r" style="left:635.1px;top:425.8px;" width="8.4" height="6.6" viewBox="0 0 8.4 6.6"><circle cx="3.3" cy="3.3" r="2.9" fill="#3bd622"/><path d="M6 1.9L7.6 3.3L6 4.7Z" fill="#3bd622"/></svg>
<div class="t" style="left:646.0px;top:425.92px;font-size:6px;color:#f2f2f2;font-weight:400;text-shadow:0.6px 0.8px 0.6px rgba(0,0,0,.9);">Min</div>
<svg class="r" style="left:635.1px;top:440.8px;" width="8.4" height="6.6" viewBox="0 0 8.4 6.6"><circle cx="3.3" cy="3.3" r="2.9" fill="#3bd622"/><path d="M6 1.9L7.6 3.3L6 4.7Z" fill="#3bd622"/></svg>
<div class="t" style="left:646.0px;top:440.92px;font-size:6px;color:#f2f2f2;font-weight:400;text-shadow:0.6px 0.8px 0.6px rgba(0,0,0,.9);">Max</div>
<div class="r vn" style="left:556.5px;top:405.0px;width:65.6px;height:18.1px;background:radial-gradient(ellipse 70% 62% at 50% 0%, rgba(40,110,235,.75) 0, rgba(40,110,235,.3) 50%, rgba(40,110,235,0) 100%), linear-gradient(to bottom, rgba(98,100,98,.66) 0, rgba(78,80,78,.66) 55%, rgba(56,56,56,.7) 100%);"></div>
<div class="t" style="right:1316.8px;top:410.92px;font-size:6px;color:#f2f2f2;font-weight:400;text-shadow:0.6px 0.8px 0.6px rgba(0,0,0,.9);">Seed</div>
<svg class="r" style="left:606.7px;top:410.8px;" width="8.4" height="6.6" viewBox="0 0 8.4 6.6"><circle cx="3.3" cy="3.3" r="2.9" fill="#1466e0"/><path d="M6 1.9L7.6 3.3L6 4.7Z" fill="#1466e0"/></svg>
<div class="r vn" style="left:556.5px;top:426.0px;width:65.6px;height:32.8px;background:radial-gradient(ellipse 70% 62% at 50% 0%, rgba(40,110,235,.75) 0, rgba(40,110,235,.3) 50%, rgba(40,110,235,0) 100%), linear-gradient(to bottom, rgba(98,100,98,.66) 0, rgba(78,80,78,.66) 55%, rgba(56,56,56,.7) 100%);"></div>
<div class="t" style="right:1316.0px;top:431.82px;font-size:6px;color:#f2f2f2;font-weight:400;text-shadow:0.6px 0.8px 0.6px rgba(0,0,0,.9);">Islands Size X</div>
<svg class="r" style="left:606.7px;top:431.7px;" width="8.4" height="6.6" viewBox="0 0 8.4 6.6"><circle cx="3.3" cy="3.3" r="2.9" fill="#3bd622"/><path d="M6 1.9L7.6 3.3L6 4.7Z" fill="#3bd622"/></svg>
<div class="t" style="right:1316.0px;top:446.82px;font-size:6px;color:#f2f2f2;font-weight:400;text-shadow:0.6px 0.8px 0.6px rgba(0,0,0,.9);">Islands Size Y</div>
<svg class="r" style="left:606.7px;top:446.7px;" width="8.4" height="6.6" viewBox="0 0 8.4 6.6"><circle cx="3.3" cy="3.3" r="2.9" fill="#3bd622"/><path d="M6 1.9L7.6 3.3L6 4.7Z" fill="#3bd622"/></svg>
<div class="r nd" style="left:791.7px;top:539.2px;width:181.9px;height:234.7px;"><div class="r" style="left:0;top:0;width:100%;height:12.5px;border-radius:3.5px 3.5px 0 0;background:linear-gradient(to bottom, rgba(255,255,255,.22) 0, rgba(255,255,255,.04) 45%, rgba(0,0,0,.18) 100%), linear-gradient(to right, rgba(68,122,164,.98) 0, rgba(46,88,124,.85) 45%, rgba(28,46,62,.55) 100%);box-shadow:inset 0 0.7px 0 rgba(255,255,255,.35);"></div></div>
<div class="t" style="left:798.2px;top:540.97px;font-size:8px;color:#d8e8f0;font-family:'Liberation Serif',serif;font-style:italic;opacity:.75">&#402;</div>
<div class="t" style="left:805.8px;top:541.83px;font-size:7.2px;color:#eef2f4;font-weight:400;text-shadow:0.6px 0.8px 0.6px rgba(0,0,0,.9);transform:scaleX(.93);transform-origin:0 50%;letter-spacing:.05px;">Append Box</div>
<svg class="r" style="left:796.7px;top:556.6px;" width="7.6" height="8.4" viewBox="0 0 7.6 8.4"><path d="M0.8 0.9H3.6L6.8 4.2L3.6 7.5H0.8Z" fill="#ffffff" stroke="#ffffff" stroke-width="0.9" stroke-linejoin="round"/></svg>
<svg class="r" style="left:959.2px;top:556.6px;" width="7.6" height="8.4" viewBox="0 0 7.6 8.4"><path d="M0.8 0.9H3.6L6.8 4.2L3.6 7.5H0.8Z" fill="#ffffff" stroke="#ffffff" stroke-width="0.9" stroke-linejoin="round"/></svg>
<svg class="r" style="left:797.0px;top:573.4px;" width="8.4" height="6.6" viewBox="0 0 8.4 6.6"><circle cx="3.3" cy="3.3" r="2.9" fill="#19a8f2"/><path d="M6 1.9L7.6 3.3L6 4.7Z" fill="#19a8f2"/></svg>
<div class="t" style="left:808.0px;top:573.52px;font-size:6px;color:#f2f2f2;font-weight:400;text-shadow:0.6px 0.8px 0.6px rgba(0,0,0,.9);">Target Mesh</div>
<div class="t" style="right:964.2px;top:573.52px;font-size:6px;color:#f2f2f2;font-weight:400;text-shadow:0.6px 0.8px 0.6px rgba(0,0,0,.9);">Target Mesh</div>
<svg class="r" style="left:958.5px;top:573.4px;" width="8.4" height="6.6" viewBox="0 0 8.4 6.6"><circle cx="3.3" cy="3.3" r="2.9" fill="#19a8f2"/><path d="M6 1.9L7.6 3.3L6 4.7Z" fill="#19a8f2"/></svg>
<svg class="r" style="left:797.0px;top:587.8px;" width="8.4" height="6.6" viewBox="0 0 8.4 6.6"><circle cx="3.3" cy="3.3" r="2.35" fill="#0c0c0c" fill-opacity="0.6" stroke="#0a3f9a" stroke-width="1.1"/><path d="M6 1.9L7.6 3.3L6 4.7Z" fill="#0a3f9a"/></svg>
<div class="t" style="left:808.0px;top:587.92px;font-size:6px;color:#f2f2f2;font-weight:400;text-shadow:0.6px 0.8px 0.6px rgba(0,0,0,.9);">Primitive Options</div>
<svg class="r" style="left:797.0px;top:602.5px;" width="8.4" height="6.6" viewBox="0 0 8.4 6.6"><circle cx="3.3" cy="3.3" r="2.9" fill="#ff7a14"/><path d="M6 1.9L7.6 3.3L6 4.7Z" fill="#ff7a14"/></svg>
<div class="t" style="left:808.0px;top:602.62px;font-size:6px;color:#f2f2f2;font-weight:400;text-shadow:0.6px 0.8px 0.6px rgba(0,0,0,.9);">Transform</div>
<svg class="r" style="left:797.0px;top:617.8px;" width="8.4" height="6.6" viewBox="0 0 8.4 6.6"><circle cx="3.3" cy="3.3" r="2.9" fill="#3bd622"/><path d="M6 1.9L7.6 3.3L6 4.7Z" fill="#3bd622"/></svg>
<div class="t" style="left:808.0px;top:617.92px;font-size:6px;color:#f2f2f2;font-weight:400;text-shadow:0.6px 0.8px 0.6px rgba(0,0,0,.9);">Dimension X</div>
<svg class="r" style="left:797.0px;top:632.5px;" width="8.4" height="6.6" viewBox="0 0 8.4 6.6"><circle cx="3.3" cy="3.3" r="2.9" fill="#3bd622"/><path d="M6 1.9L7.6 3.3L6 4.7Z" fill="#3bd622"/></svg>
<div class="t" style="left:808.0px;top:632.62px;font-size:6px;color:#f2f2f2;font-weight:400;text-shadow:0.6px 0.8px 0.6px rgba(0,0,0,.9);">Dimension Y</div>
<svg class="r" style="left:797.0px;top:649.2px;" width="8.4" height="6.6" viewBox="0 0 8.4 6.6"><circle cx="3.3" cy="3.3" r="2.35" fill="#0c0c0c" fill-opacity="0.6" stroke="#3bd622" stroke-width="1.1"/><path d="M6 1.9L7.6 3.3L6 4.7Z" fill="#3bd622"/></svg>
<div class="t" style="left:808.0px;top:649.32px;font-size:6px;color:#f2f2f2;font-weight:400;text-shadow:0.6px 0.8px 0.6px rgba(0,0,0,.9);">Dimension Z</div>
<div class="r" style="left:845.3px;top:647.8px;width:20.7px;height:9.6px;border:1px solid #d0d0d0;box-sizing:border-box;border-radius:1.5px;background:rgba(10,10,10,.35);"></div><div class="t" style="left:755.6px;width:200px;text-align:center;top:649.71px;font-size:6.3px;color:#e8e8e8;font-weight:400;">400.0</div>
<svg class="r" style="left:797.0px;top:667.3px;" width="8.4" height="6.6" viewBox="0 0 8.4 6.6"><circle cx="3.3" cy="3.3" r="2.35" fill="#0c0c0c" fill-opacity="0.6" stroke="#22e0b0" stroke-width="1.1"/><path d="M6 1.9L7.6 3.3L6 4.7Z" fill="#22e0b0"/></svg>
<div class="t" style="left:808.0px;top:667.42px;font-size:6px;color:#f2f2f2;font-weight:400;text-shadow:0.6px 0.8px 0.6px rgba(0,0,0,.9);">Steps X</div>
<div class="r" style="left:831.4px;top:665.8px;width:8.9px;height:10.0px;border:1px solid #d0d0d0;box-sizing:border-box;border-radius:1.5px;background:rgba(10,10,10,.35);"></div><div class="t" style="left:735.8px;width:200px;text-align:center;top:667.91px;font-size:6.3px;color:#e8e8e8;font-weight:400;">0</div>
<svg class="r" style="left:797.0px;top:685.9px;" width="8.4" height="6.6" viewBox="0 0 8.4 6.6"><circle cx="3.3" cy="3.3" r="2.35" fill="#0c0c0c" fill-opacity="0.6" stroke="#22e0b0" stroke-width="1.1"/><path d="M6 1.9L7.6 3.3L6 4.7Z" fill="#22e0b0"/></svg>
<div class="t" style="left:808.0px;top:686.02px;font-size:6px;color:#f2f2f2;font-weight:400;text-shadow:0.6px 0.8px 0.6px rgba(0,0,0,.9);">Steps Y</div>
<div class="r" style="left:831.4px;top:684.4px;width:8.9px;height:10.0px;border:1px solid #d0d0d0;box-sizing:border-box;border-radius:1.5px;background:rgba(10,10,10,.35);"></div><div class="t" style="left:735.8px;width:200px;text-align:center;top:686.51px;font-size:6.3px;color:#e8e8e8;font-weight:400;">0</div>
<svg class="r" style="left:797.0px;top:704.2px;" width="8.4" height="6.6" viewBox="0 0 8.4 6.6"><circle cx="3.3" cy="3.3" r="2.35" fill="#0c0c0c" fill-opacity="0.6" stroke="#22e0b0" stroke-width="1.1"/><path d="M6 1.9L7.6 3.3L6 4.7Z" fill="#22e0b0"/></svg>
<div class="t" style="left:808.0px;top:704.32px;font-size:6px;color:#f2f2f2;font-weight:400;text-shadow:0.6px 0.8px 0.6px rgba(0,0,0,.9);">Steps Z</div>
<div class="r" style="left:831.4px;top:702.7px;width:8.9px;height:10.0px;border:1px solid #d0d0d0;box-sizing:border-box;border-radius:1.5px;background:rgba(10,10,10,.35);"></div><div class="t" style="left:735.8px;width:200px;text-align:center;top:704.81px;font-size:6.3px;color:#e8e8e8;font-weight:400;">0</div>
<div class="t" style="left:808.0px;top:721.22px;font-size:6px;color:#f2f2f2;font-weight:400;text-shadow:0.6px 0.8px 0.6px rgba(0,0,0,.9);">Origin</div>
<svg class="r" style="left:797.3px;top:728.1px;" width="8.4" height="6.6" viewBox="0 0 8.4 6.6"><circle cx="3.3" cy="3.3" r="2.35" fill="#0c0c0c" fill-opacity="0.6" stroke="#0f5a52" stroke-width="1.1"/><path d="M6 1.9L7.6 3.3L6 4.7Z" fill="#0f5a52"/></svg>
<div class="r" style="left:810.6px;top:728.6px;width:96.6px;height:12.4px;background:#0a0a0a;border:1px solid #2c2c2c;box-sizing:border-box;border-radius:2px;"></div><div class="t" style="left:815.6px;top:731.83px;font-size:5.6px;color:#b8b8b8;font-weight:400;">Base</div><svg class="r" style="left:896.7px;top:733.2px;" width="5" height="3.4" viewBox="0 0 5 3.4"><path d="M0.5 0.5L2.5 2.7L4.5 0.5" stroke="#d0d0d0" stroke-width="1" fill="none"/></svg>
<div class="t" style="left:808.0px;top:749.82px;font-size:6px;color:#f2f2f2;font-weight:400;text-shadow:0.6px 0.8px 0.6px rgba(0,0,0,.9);">Debug</div>
<svg class="r" style="left:797.3px;top:755.9px;" width="8.4" height="6.6" viewBox="0 0 8.4 6.6"><circle cx="3.3" cy="3.3" r="2.35" fill="#0c0c0c" fill-opacity="0.6" stroke="#19a8f2" stroke-width="1.1"/><path d="M6 1.9L7.6 3.3L6 4.7Z" fill="#19a8f2"/></svg>
<div class="r" style="left:812.0px;top:757.2px;width:41.6px;height:10.6px;background:#2a2c2a;border:1px solid #343634;box-sizing:border-box;border-radius:2px;"></div><div class="t" style="left:814.5px;top:759.53px;font-size:5.6px;color:#8c8c8c;font-weight:400;">Select Asset</div><svg class="r" style="left:846.1px;top:760.9px;" width="5" height="3.4" viewBox="0 0 5 3.4"><path d="M0.5 0.5L2.5 2.7L4.5 0.5" stroke="#a0a0a0" stroke-width="1" fill="none"/></svg>
<svg class="r" style="left:856.8px;top:759.3px;" width="6.4" height="6.4" viewBox="0 0 6.4 6.4"><circle cx="3.2" cy="3.2" r="2.7" stroke="#4a4c4a" stroke-width="0.9" fill="none"/><path d="M4.6 3.2H1.9M2.9 2.1L1.8 3.2L2.9 4.3" stroke="#4a4c4a" stroke-width="0.8" fill="none"/></svg><svg class="r" style="left:866.2px;top:759.1px;" width="7.4" height="7.4" viewBox="0 0 7.4 7.4"><circle cx="3" cy="3" r="2.4" stroke="#4a4c4a" stroke-width="0.9" fill="none"/><path d="M4.8 4.8L6.8 6.8" stroke="#4a4c4a" stroke-width="1.1"/></svg>
<div class="r vn" style="left:694.4px;top:572.0px;width:66.2px;height:18.0px;background:radial-gradient(ellipse 70% 62% at 50% 0%, rgba(40,160,235,.75) 0, rgba(40,160,235,.3) 50%, rgba(40,160,235,0) 100%), linear-gradient(to bottom, rgba(98,100,98,.66) 0, rgba(78,80,78,.66) 55%, rgba(56,56,56,.7) 100%);"></div>
<div class="t" style="right:1178.0px;top:577.62px;font-size:6px;color:#f2f2f2;font-weight:400;text-shadow:0.6px 0.8px 0.6px rgba(0,0,0,.9);">Dyn Mesh</div>
<svg class="r" style="left:744.7px;top:577.5px;" width="8.4" height="6.6" viewBox="0 0 8.4 6.6"><circle cx="3.3" cy="3.3" r="2.9" fill="#19a8f2"/><path d="M6 1.9L7.6 3.3L6 4.7Z" fill="#19a8f2"/></svg>
<div class="r nd" style="left:588.3px;top:596.7px;width:167.3px;height:95.8px;"><div class="r" style="left:0;top:0;width:100%;height:11.1px;border-radius:3.5px 3.5px 0 0;background:linear-gradient(to bottom, rgba(255,255,255,.22) 0, rgba(255,255,255,.04) 45%, rgba(0,0,0,.18) 100%), linear-gradient(to right, rgba(112,160,108,.98) 0, rgba(70,112,70,.85) 45%, rgba(36,56,38,.5) 100%);box-shadow:inset 0 0.7px 0 rgba(255,255,255,.35);"></div></div>
<svg class="r" style="left:592.5px;top:598.6px;" width="9" height="7.2" viewBox="0 0 9 7.2"><path d="M0.4 0.4L3 2.6v2L0.4 6.8" stroke="#fff" stroke-width="1.1" fill="none"/><rect x="3" y="2.2" width="5.6" height="2.8" rx="1.2" fill="#fff"/></svg>
<div class="t" style="left:603.2px;top:598.63px;font-size:7.2px;color:#eef2f4;font-weight:400;text-shadow:0.6px 0.8px 0.6px rgba(0,0,0,.9);transform:scaleX(.93);transform-origin:0 50%;letter-spacing:.05px;">Make Transform</div>
<div class="t" style="right:1181.7px;top:613.82px;font-size:6px;color:#f2f2f2;font-weight:400;text-shadow:0.6px 0.8px 0.6px rgba(0,0,0,.9);">Return Value</div>
<svg class="r" style="left:740.5px;top:613.7px;" width="8.4" height="6.6" viewBox="0 0 8.4 6.6"><circle cx="3.3" cy="3.3" r="2.9" fill="#ff7a14"/><path d="M6 1.9L7.6 3.3L6 4.7Z" fill="#ff7a14"/></svg>
<div class="t" style="left:605.6px;top:613.82px;font-size:6px;color:#f2f2f2;font-weight:400;text-shadow:0.6px 0.8px 0.6px rgba(0,0,0,.9);">Location</div>
<svg class="r" style="left:595.3px;top:620.0px;" width="8.4" height="6.6" viewBox="0 0 8.4 6.6"><circle cx="3.3" cy="3.3" r="2.35" fill="#0c0c0c" fill-opacity="0.6" stroke="#e8b020" stroke-width="1.1"/><path d="M6 1.9L7.6 3.3L6 4.7Z" fill="#e8b020"/></svg>
<div class="t" style="left:611.8px;top:623.26px;font-size:6.2px;color:#6e6e6e;font-weight:400;">X</div>
<div class="r" style="left:617.0px;top:621.7px;width:13.8px;height:9.7px;border:1px solid #d0d0d0;box-sizing:border-box;border-radius:1.5px;background:rgba(10,10,10,.35);"></div><div class="t" style="left:523.9px;width:200px;text-align:center;top:623.66px;font-size:6.3px;color:#e8e8e8;font-weight:400;">0.0</div>
<div class="t" style="left:635.3px;top:623.26px;font-size:6.2px;color:#6e6e6e;font-weight:400;">Y</div>
<div class="r" style="left:640.3px;top:621.7px;width:13.9px;height:9.7px;border:1px solid #d0d0d0;box-sizing:border-box;border-radius:1.5px;background:rgba(10,10,10,.35);"></div><div class="t" style="left:547.2px;width:200px;text-align:center;top:623.66px;font-size:6.3px;color:#e8e8e8;font-weight:400;">0.0</div>
<div class="t" style="left:658.6px;top:623.26px;font-size:6.2px;color:#6e6e6e;font-weight:400;">Z</div>
<div class="r" style="left:663.3px;top:621.7px;width:24.5px;height:9.7px;border:1px solid #d0d0d0;box-sizing:border-box;border-radius:1.5px;background:rgba(10,10,10,.35);"></div><div class="t" style="left:575.5px;width:200px;text-align:center;top:623.66px;font-size:6.3px;color:#e8e8e8;font-weight:400;">-800.0</div>
<div class="t" style="left:605.6px;top:640.72px;font-size:6px;color:#f2f2f2;font-weight:400;text-shadow:0.6px 0.8px 0.6px rgba(0,0,0,.9);">Rotation</div>
<svg class="r" style="left:595.3px;top:647.0px;" width="8.4" height="6.6" viewBox="0 0 8.4 6.6"><circle cx="3.3" cy="3.3" r="2.35" fill="#0c0c0c" fill-opacity="0.6" stroke="#9fb0ff" stroke-width="1.1"/><path d="M6 1.9L7.6 3.3L6 4.7Z" fill="#9fb0ff"/></svg>
<div class="t" style="left:611.8px;top:650.46px;font-size:6.2px;color:#6e6e6e;font-weight:400;">X</div>
<div class="r" style="left:617.0px;top:648.9px;width:13.8px;height:9.7px;border:1px solid #d0d0d0;box-sizing:border-box;border-radius:1.5px;background:rgba(10,10,10,.35);"></div><div class="t" style="left:523.9px;width:200px;text-align:center;top:650.86px;font-size:6.3px;color:#e8e8e8;font-weight:400;">0.0</div>
<div class="t" style="left:635.3px;top:650.46px;font-size:6.2px;color:#6e6e6e;font-weight:400;">Y</div>
<div class="r" style="left:640.3px;top:648.9px;width:13.9px;height:9.7px;border:1px solid #d0d0d0;box-sizing:border-box;border-radius:1.5px;background:rgba(10,10,10,.35);"></div><div class="t" style="left:547.2px;width:200px;text-align:center;top:650.86px;font-size:6.3px;color:#e8e8e8;font-weight:400;">0.0</div>
<div class="t" style="left:658.6px;top:650.46px;font-size:6.2px;color:#6e6e6e;font-weight:400;">Z</div>
<div class="r" style="left:663.3px;top:648.9px;width:14.5px;height:9.7px;border:1px solid #d0d0d0;box-sizing:border-box;border-radius:1.5px;background:rgba(10,10,10,.35);"></div><div class="t" style="left:570.5px;width:200px;text-align:center;top:650.86px;font-size:6.3px;color:#e8e8e8;font-weight:400;">0.0</div>
<div class="t" style="left:605.6px;top:667.62px;font-size:6px;color:#f2f2f2;font-weight:400;text-shadow:0.6px 0.8px 0.6px rgba(0,0,0,.9);">Scale</div>
<svg class="r" style="left:595.3px;top:674.2px;" width="8.4" height="6.6" viewBox="0 0 8.4 6.6"><circle cx="3.3" cy="3.3" r="2.35" fill="#0c0c0c" fill-opacity="0.6" stroke="#e8b020" stroke-width="1.1"/><path d="M6 1.9L7.6 3.3L6 4.7Z" fill="#e8b020"/></svg>
<div class="t" style="left:611.8px;top:677.41px;font-size:6.2px;color:#6e6e6e;font-weight:400;">X</div>
<div class="r" style="left:617.0px;top:675.8px;width:13.8px;height:9.8px;border:1px solid #d0d0d0;box-sizing:border-box;border-radius:1.5px;background:rgba(10,10,10,.35);"></div><div class="t" style="left:523.9px;width:200px;text-align:center;top:677.81px;font-size:6.3px;color:#e8e8e8;font-weight:400;">1.0</div>
<div class="t" style="left:635.3px;top:677.41px;font-size:6.2px;color:#6e6e6e;font-weight:400;">Y</div>
<div class="r" style="left:640.3px;top:675.8px;width:13.9px;height:9.8px;border:1px solid #d0d0d0;box-sizing:border-box;border-radius:1.5px;background:rgba(10,10,10,.35);"></div><div class="t" style="left:547.2px;width:200px;text-align:center;top:677.81px;font-size:6.3px;color:#e8e8e8;font-weight:400;">1.0</div>
<div class="t" style="left:658.6px;top:677.41px;font-size:6.2px;color:#6e6e6e;font-weight:400;">Z</div>
<div class="r" style="left:663.3px;top:675.8px;width:14.5px;height:9.8px;border:1px solid #d0d0d0;box-sizing:border-box;border-radius:1.5px;background:rgba(10,10,10,.35);"></div><div class="t" style="left:570.5px;width:200px;text-align:center;top:677.81px;font-size:6.3px;color:#e8e8e8;font-weight:400;">1.0</div>
<div class="r vn" style="left:572.2px;top:701.7px;width:84.2px;height:17.5px;background:radial-gradient(ellipse 70% 62% at 50% 0%, rgba(90,220,60,.75) 0, rgba(90,220,60,.3) 50%, rgba(90,220,60,0) 100%), linear-gradient(to bottom, rgba(98,100,98,.66) 0, rgba(78,80,78,.66) 55%, rgba(56,56,56,.7) 100%);"></div>
<div class="t" style="right:1281.7px;top:706.82px;font-size:6px;color:#f2f2f2;font-weight:400;text-shadow:0.6px 0.8px 0.6px rgba(0,0,0,.9);">Max Spawn Distance</div>
<svg class="r" style="left:640.6px;top:706.7px;" width="8.4" height="6.6" viewBox="0 0 8.4 6.6"><circle cx="3.3" cy="3.3" r="2.9" fill="#3bd622"/><path d="M6 1.9L7.6 3.3L6 4.7Z" fill="#3bd622"/></svg>
<div class="r cn" style="left:665.6px;top:701.7px;width:92.2px;height:35.5px;"></div>
<svg class="r" style="left:672.2px;top:706.4px;" width="7.2" height="7.2" viewBox="0 0 7.2 7.2"><circle cx="3.6" cy="3.6" r="2.7" fill="#3bd622" fill-opacity="0.35" stroke="#3bd622" stroke-opacity="0.85" stroke-width="1"/></svg>
<svg class="r" style="left:672.2px;top:723.1px;" width="7.2" height="7.2" viewBox="0 0 7.2 7.2"><circle cx="3.6" cy="3.6" r="2.7" fill="#3bd622" fill-opacity="0.35" stroke="#3bd622" stroke-opacity="0.85" stroke-width="1"/></svg>
<div class="r" style="left:684.2px;top:722.3px;width:29.1px;height:9.9px;border:1px solid #b0b0b0;box-sizing:border-box;border-radius:1.5px;background:rgba(10,10,10,.35);"></div><div class="t" style="left:598.8px;width:200px;text-align:center;top:724.36px;font-size:6.3px;color:#a8a8a8;font-weight:400;">10000.0</div>
<div class="t" style="left:611.6px;width:200px;text-align:center;top:713.57px;font-size:9.5px;color:#c0c0c0;font-weight:700;">+</div>
<svg class="r" style="left:744.4px;top:708.1px;" width="7.2" height="7.2" viewBox="0 0 7.2 7.2"><circle cx="3.6" cy="3.6" r="2.7" fill="#3bd622" fill-opacity="0.35" stroke="#3bd622" stroke-opacity="0.85" stroke-width="1"/></svg>
<div class="t" style="left:719.4px;top:726.81px;font-size:6.4px;color:#f0f0f0;font-weight:400;text-shadow:0.6px 0.8px 0.6px rgba(0,0,0,.9);">Add pin</div>
<svg class="r" style="left:746.0px;top:726.6px;" width="7.2" height="7.2" viewBox="0 0 7.2 7.2"><circle cx="3.6" cy="3.6" r="3" stroke="#f0f0f0" stroke-width="0.9" fill="none"/><path d="M3.6 2V5.2M2 3.6H5.2" stroke="#f0f0f0" stroke-width="0.9"/></svg>
<div class="r nd" style="left:1204.4px;top:539.3px;width:148.6px;height:87.4px;"><div class="r" style="left:0;top:0;width:100%;height:12.7px;border-radius:3.5px 3.5px 0 0;background:linear-gradient(to bottom, rgba(255,255,255,.22) 0, rgba(255,255,255,.04) 45%, rgba(0,0,0,.18) 100%), linear-gradient(to right, rgba(68,122,164,.98) 0, rgba(46,88,124,.85) 45%, rgba(28,46,62,.55) 100%);box-shadow:inset 0 0.7px 0 rgba(255,255,255,.35);"></div></div>
<div class="t" style="left:1210.9px;top:541.17px;font-size:8px;color:#d8e8f0;font-family:'Liberation Serif',serif;font-style:italic;opacity:.75">&#402;</div>
<div class="t" style="left:1219.3px;top:542.03px;font-size:7.2px;color:#eef2f4;font-weight:400;text-shadow:0.6px 0.8px 0.6px rgba(0,0,0,.9);transform:scaleX(.93);transform-origin:0 50%;letter-spacing:.05px;">Apply Mesh Solidify</div>
<svg class="r" style="left:1209.9px;top:556.8px;" width="7.6" height="8.4" viewBox="0 0 7.6 8.4"><path d="M0.8 0.9H3.6L6.8 4.2L3.6 7.5H0.8Z" fill="#ffffff" stroke="#ffffff" stroke-width="0.9" stroke-linejoin="round"/></svg>
<svg class="r" style="left:1339.6px;top:556.8px;" width="7.6" height="8.4" viewBox="0 0 7.6 8.4"><path d="M0.8 0.9H3.6L6.8 4.2L3.6 7.5H0.8Z" fill="#ffffff" stroke="#ffffff" stroke-width="0.9" stroke-linejoin="round"/></svg>
<svg class="r" style="left:1210.2px;top:573.3px;" width="8.4" height="6.6" viewBox="0 0 8.4 6.6"><circle cx="3.3" cy="3.3" r="2.9" fill="#19a8f2"/><path d="M6 1.9L7.6 3.3L6 4.7Z" fill="#19a8f2"/></svg>
<div class="t" style="left:1221.8px;top:573.42px;font-size:6px;color:#f2f2f2;font-weight:400;text-shadow:0.6px 0.8px 0.6px rgba(0,0,0,.9);">Target Mesh</div>
<div class="t" style="right:584.1px;top:573.42px;font-size:6px;color:#f2f2f2;font-weight:400;text-shadow:0.6px 0.8px 0.6px rgba(0,0,0,.9);">Target Mesh</div>
<svg class="r" style="left:1338.5px;top:573.3px;" width="8.4" height="6.6" viewBox="0 0 8.4 6.6"><circle cx="3.3" cy="3.3" r="2.9" fill="#19a8f2"/><path d="M6 1.9L7.6 3.3L6 4.7Z" fill="#19a8f2"/></svg>
<svg class="r" style="left:1210.2px;top:587.9px;" width="8.4" height="6.6" viewBox="0 0 8.4 6.6"><circle cx="3.3" cy="3.3" r="2.9" fill="#1466e0"/><path d="M6 1.9L7.6 3.3L6 4.7Z" fill="#1466e0"/></svg>
<div class="t" style="left:1221.8px;top:588.02px;font-size:6px;color:#f2f2f2;font-weight:400;text-shadow:0.6px 0.8px 0.6px rgba(0,0,0,.9);">Options</div>
<div class="t" style="left:1221.8px;top:602.82px;font-size:6px;color:#f2f2f2;font-weight:400;text-shadow:0.6px 0.8px 0.6px rgba(0,0,0,.9);">Debug</div>
<svg class="r" style="left:1210.5px;top:608.6px;" width="8.4" height="6.6" viewBox="0 0 8.4 6.6"><circle cx="3.3" cy="3.3" r="2.35" fill="#0c0c0c" fill-opacity="0.6" stroke="#19a8f2" stroke-width="1.1"/><path d="M6 1.9L7.6 3.3L6 4.7Z" fill="#19a8f2"/></svg>
<div class="r" style="left:1224.4px;top:609.8px;width:42.3px;height:11.2px;background:#2a2c2a;border:1px solid #343634;box-sizing:border-box;border-radius:2px;"></div><div class="t" style="left:1226.9px;top:612.43px;font-size:5.6px;color:#8c8c8c;font-weight:400;">Select Asset</div><svg class="r" style="left:1259.2px;top:613.8px;" width="5" height="3.4" viewBox="0 0 5 3.4"><path d="M0.5 0.5L2.5 2.7L4.5 0.5" stroke="#a0a0a0" stroke-width="1" fill="none"/></svg>
<svg class="r" style="left:1270.0px;top:612.2px;" width="6.4" height="6.4" viewBox="0 0 6.4 6.4"><circle cx="3.2" cy="3.2" r="2.7" stroke="#4a4c4a" stroke-width="0.9" fill="none"/><path d="M4.6 3.2H1.9M2.9 2.1L1.8 3.2L2.9 4.3" stroke="#4a4c4a" stroke-width="0.8" fill="none"/></svg><svg class="r" style="left:1279.4px;top:612.0px;" width="7.4" height="7.4" viewBox="0 0 7.4 7.4"><circle cx="3" cy="3" r="2.4" stroke="#4a4c4a" stroke-width="0.9" fill="none"/><path d="M4.8 4.8L6.8 6.8" stroke="#4a4c4a" stroke-width="1.1"/></svg>
<div class="r nd" style="left:1431.3px;top:543.2px;width:148.3px;height:71.8px;"><div class="r" style="left:0;top:0;width:100%;height:12.3px;border-radius:3.5px 3.5px 0 0;background:linear-gradient(to bottom, rgba(255,255,255,.22) 0, rgba(255,255,255,.04) 45%, rgba(0,0,0,.18) 100%), linear-gradient(to right, rgba(68,122,164,.98) 0, rgba(46,88,124,.85) 45%, rgba(28,46,62,.55) 100%);box-shadow:inset 0 0.7px 0 rgba(255,255,255,.35);"></div></div>
<div class="t" style="left:1437.8px;top:544.87px;font-size:8px;color:#d8e8f0;font-family:'Liberation Serif',serif;font-style:italic;opacity:.75">&#402;</div>
<div class="t" style="left:1445.8px;top:545.73px;font-size:7.2px;color:#eef2f4;font-weight:400;text-shadow:0.6px 0.8px 0.6px rgba(0,0,0,.9);transform:scaleX(.93);transform-origin:0 50%;letter-spacing:.05px;">Set Mesh To Per Vertex Normals</div>
<svg class="r" style="left:1436.8px;top:560.5px;" width="7.6" height="8.4" viewBox="0 0 7.6 8.4"><path d="M0.8 0.9H3.6L6.8 4.2L3.6 7.5H0.8Z" fill="#ffffff" stroke="#ffffff" stroke-width="0.9" stroke-linejoin="round"/></svg>
<svg class="r" style="left:1566.4px;top:560.5px;" width="7.6" height="8.4" viewBox="0 0 7.6 8.4"><path d="M0.8 0.9H3.6L6.8 4.2L3.6 7.5H0.8Z" fill="#ffffff" stroke="#ffffff" stroke-width="0.9" stroke-linejoin="round"/></svg>
<svg class="r" style="left:1437.1px;top:577.0px;" width="8.4" height="6.6" viewBox="0 0 8.4 6.6"><circle cx="3.3" cy="3.3" r="2.9" fill="#19a8f2"/><path d="M6 1.9L7.6 3.3L6 4.7Z" fill="#19a8f2"/></svg>
<div class="t" style="left:1448.2px;top:577.12px;font-size:6px;color:#f2f2f2;font-weight:400;text-shadow:0.6px 0.8px 0.6px rgba(0,0,0,.9);">Target Mesh</div>
<div class="t" style="right:357.8px;top:577.12px;font-size:6px;color:#f2f2f2;font-weight:400;text-shadow:0.6px 0.8px 0.6px rgba(0,0,0,.9);">Target Mesh</div>
<svg class="r" style="left:1564.9px;top:577.0px;" width="8.4" height="6.6" viewBox="0 0 8.4 6.6"><circle cx="3.3" cy="3.3" r="2.9" fill="#19a8f2"/><path d="M6 1.9L7.6 3.3L6 4.7Z" fill="#19a8f2"/></svg>
<div class="t" style="left:1448.2px;top:592.42px;font-size:6px;color:#f2f2f2;font-weight:400;text-shadow:0.6px 0.8px 0.6px rgba(0,0,0,.9);">Debug</div>
<svg class="r" style="left:1437.3px;top:598.0px;" width="8.4" height="6.6" viewBox="0 0 8.4 6.6"><circle cx="3.3" cy="3.3" r="2.35" fill="#0c0c0c" fill-opacity="0.6" stroke="#19a8f2" stroke-width="1.1"/><path d="M6 1.9L7.6 3.3L6 4.7Z" fill="#19a8f2"/></svg>
<div class="r" style="left:1451.3px;top:599.4px;width:40.9px;height:10.4px;background:#2a2c2a;border:1px solid #343634;box-sizing:border-box;border-radius:2px;"></div><div class="t" style="left:1453.8px;top:601.63px;font-size:5.6px;color:#8c8c8c;font-weight:400;">Select Asset</div><svg class="r" style="left:1484.7px;top:603.0px;" width="5" height="3.4" viewBox="0 0 5 3.4"><path d="M0.5 0.5L2.5 2.7L4.5 0.5" stroke="#a0a0a0" stroke-width="1" fill="none"/></svg>
<svg class="r" style="left:1496.8px;top:601.4px;" width="6.4" height="6.4" viewBox="0 0 6.4 6.4"><circle cx="3.2" cy="3.2" r="2.7" stroke="#4a4c4a" stroke-width="0.9" fill="none"/><path d="M4.6 3.2H1.9M2.9 2.1L1.8 3.2L2.9 4.3" stroke="#4a4c4a" stroke-width="0.8" fill="none"/></svg><svg class="r" style="left:1506.2px;top:601.2px;" width="7.4" height="7.4" viewBox="0 0 7.4 7.4"><circle cx="3" cy="3" r="2.4" stroke="#4a4c4a" stroke-width="0.9" fill="none"/><path d="M4.8 4.8L6.8 6.8" stroke="#4a4c4a" stroke-width="1.1"/></svg>
<div class="r nd" style="left:1156.0px;top:648.7px;width:211.3px;height:145.9px;"><div class="r" style="left:0;top:0;width:100%;height:11.7px;border-radius:3.5px 3.5px 0 0;background:linear-gradient(to bottom, rgba(255,255,255,.22) 0, rgba(255,255,255,.04) 45%, rgba(0,0,0,.18) 100%), linear-gradient(to right, rgba(46,92,176,.98) 0, rgba(32,68,140,.92) 45%, rgba(22,40,84,.7) 100%);box-shadow:inset 0 0.7px 0 rgba(255,255,255,.35);"></div></div>
<svg class="r" style="left:1160.2px;top:650.9px;" width="9" height="7.2" viewBox="0 0 9 7.2"><path d="M0.4 0.4L3 2.6v2L0.4 6.8" stroke="#fff" stroke-width="1.1" fill="none"/><rect x="3" y="2.2" width="5.6" height="2.8" rx="1.2" fill="#fff"/></svg>
<div class="t" style="left:1170.3px;top:650.93px;font-size:7.2px;color:#eef2f4;font-weight:400;text-shadow:0.6px 0.8px 0.6px rgba(0,0,0,.9);transform:scaleX(.93);transform-origin:0 50%;letter-spacing:.05px;">Make GeometryScriptSolidifyOptions</div>
<svg class="r" style="left:1161.7px;top:666.7px;" width="8.4" height="6.6" viewBox="0 0 8.4 6.6"><circle cx="3.3" cy="3.3" r="2.9" fill="#1466e0"/><path d="M6 1.9L7.6 3.3L6 4.7Z" fill="#1466e0"/></svg>
<div class="t" style="left:1172.6px;top:666.82px;font-size:6px;color:#f2f2f2;font-weight:400;text-shadow:0.6px 0.8px 0.6px rgba(0,0,0,.9);">Grid Parameters</div>
<div class="t" style="right:569.6px;top:666.82px;font-size:6px;color:#f2f2f2;font-weight:400;text-shadow:0.6px 0.8px 0.6px rgba(0,0,0,.9);">Geometry Script Solidify Options</div>
<svg class="r" style="left:1352.7px;top:666.7px;" width="8.4" height="6.6" viewBox="0 0 8.4 6.6"><circle cx="3.3" cy="3.3" r="2.9" fill="#1466e0"/><path d="M6 1.9L7.6 3.3L6 4.7Z" fill="#1466e0"/></svg>
<svg class="r" style="left:1161.7px;top:683.0px;" width="8.4" height="6.6" viewBox="0 0 8.4 6.6"><circle cx="3.3" cy="3.3" r="2.35" fill="#0c0c0c" fill-opacity="0.6" stroke="#3bd622" stroke-width="1.1"/><path d="M6 1.9L7.6 3.3L6 4.7Z" fill="#3bd622"/></svg>
<div class="t" style="left:1172.6px;top:683.12px;font-size:6px;color:#f2f2f2;font-weight:400;text-shadow:0.6px 0.8px 0.6px rgba(0,0,0,.9);">Winding Threshold</div>
<div class="r" style="left:1228.3px;top:681.6px;width:14.5px;height:9.4px;border:1px solid #d0d0d0;box-sizing:border-box;border-radius:1.5px;background:rgba(10,10,10,.35);"></div><div class="t" style="left:1135.5px;width:200px;text-align:center;top:683.41px;font-size:6.3px;color:#e8e8e8;font-weight:400;">0.5</div>
<svg class="r" style="left:1161.7px;top:700.6px;" width="8.4" height="6.6" viewBox="0 0 8.4 6.6"><circle cx="3.3" cy="3.3" r="2.35" fill="#0c0c0c" fill-opacity="0.6" stroke="#8a0c0c" stroke-width="1.1"/><path d="M6 1.9L7.6 3.3L6 4.7Z" fill="#8a0c0c"/></svg>
<div class="t" style="left:1172.6px;top:700.72px;font-size:6px;color:#f2f2f2;font-weight:400;text-shadow:0.6px 0.8px 0.6px rgba(0,0,0,.9);">Solid At Boundaries</div>
<div class="r" style="left:1230.4px;top:700.0px;width:8.0px;height:8.3px;background:#0c0c0c;border:1px solid #2e2e2e;box-sizing:border-box;border-radius:1.5px;"></div>
<svg class="r" style="left:1161.7px;top:718.5px;" width="8.4" height="6.6" viewBox="0 0 8.4 6.6"><circle cx="3.3" cy="3.3" r="2.35" fill="#0c0c0c" fill-opacity="0.6" stroke="#3bd622" stroke-width="1.1"/><path d="M6 1.9L7.6 3.3L6 4.7Z" fill="#3bd622"/></svg>
<div class="t" style="left:1172.6px;top:718.62px;font-size:6px;color:#f2f2f2;font-weight:400;text-shadow:0.6px 0.8px 0.6px rgba(0,0,0,.9);">Extend Bounds</div>
<div class="r" style="left:1217.4px;top:717.0px;width:13.8px;height:9.6px;border:1px solid #d0d0d0;box-sizing:border-box;border-radius:1.5px;background:rgba(10,10,10,.35);"></div><div class="t" style="left:1124.3px;width:200px;text-align:center;top:718.91px;font-size:6.3px;color:#e8e8e8;font-weight:400;">0.0</div>
<svg class="r" style="left:1161.7px;top:736.7px;" width="8.4" height="6.6" viewBox="0 0 8.4 6.6"><circle cx="3.3" cy="3.3" r="2.35" fill="#0c0c0c" fill-opacity="0.6" stroke="#22e0b0" stroke-width="1.1"/><path d="M6 1.9L7.6 3.3L6 4.7Z" fill="#22e0b0"/></svg>
<div class="t" style="left:1172.6px;top:736.82px;font-size:6px;color:#f2f2f2;font-weight:400;text-shadow:0.6px 0.8px 0.6px rgba(0,0,0,.9);">Surface Search Steps</div>
<div class="r" style="left:1233.5px;top:735.2px;width:12.5px;height:9.6px;border:1px solid #d0d0d0;box-sizing:border-box;border-radius:1.5px;background:rgba(10,10,10,.35);"></div><div class="t" style="left:1139.8px;width:200px;text-align:center;top:737.11px;font-size:6.3px;color:#e8e8e8;font-weight:400;">64</div>
<svg class="r" style="left:1161.7px;top:754.8px;" width="8.4" height="6.6" viewBox="0 0 8.4 6.6"><circle cx="3.3" cy="3.3" r="2.35" fill="#0c0c0c" fill-opacity="0.6" stroke="#8a0c0c" stroke-width="1.1"/><path d="M6 1.9L7.6 3.3L6 4.7Z" fill="#8a0c0c"/></svg>
<div class="t" style="left:1172.6px;top:754.92px;font-size:6px;color:#f2f2f2;font-weight:400;text-shadow:0.6px 0.8px 0.6px rgba(0,0,0,.9);">Thicken Shells</div>
<div class="r" style="left:1215.3px;top:754.0px;width:8.0px;height:8.3px;background:#0c0c0c;border:1px solid #2e2e2e;box-sizing:border-box;border-radius:1.5px;"></div>
<svg class="r" style="left:1161.7px;top:772.5px;" width="8.4" height="6.6" viewBox="0 0 8.4 6.6"><circle cx="3.3" cy="3.3" r="2.35" fill="#0c0c0c" fill-opacity="0.6" stroke="#3bd622" stroke-width="1.1"/><path d="M6 1.9L7.6 3.3L6 4.7Z" fill="#3bd622"/></svg>
<div class="t" style="left:1172.6px;top:772.62px;font-size:6px;color:#f2f2f2;font-weight:400;text-shadow:0.6px 0.8px 0.6px rgba(0,0,0,.9);">Shell Thickness</div>
<div class="r" style="left:1218.2px;top:771.0px;width:13.5px;height:9.6px;border:1px solid #d0d0d0;box-sizing:border-box;border-radius:1.5px;background:rgba(10,10,10,.35);"></div><div class="t" style="left:1125.0px;width:200px;text-align:center;top:772.91px;font-size:6.3px;color:#e8e8e8;font-weight:400;">1.0</div>
<svg class="r" style="left:1259.3px;top:788.3px;" width="6" height="4" viewBox="0 0 6 4"><path d="M0.6 3.4L3 1L5.4 3.4" stroke="#f0f0f0" stroke-width="1.2" fill="none"/></svg>
<div class="r nd" style="left:1657.6px;top:543.2px;width:149.6px;height:102.1px;"><div class="r" style="left:0;top:0;width:100%;height:12.2px;border-radius:3.5px 3.5px 0 0;background:linear-gradient(to bottom, rgba(255,255,255,.22) 0, rgba(255,255,255,.04) 45%, rgba(0,0,0,.18) 100%), linear-gradient(to right, rgba(68,122,164,.98) 0, rgba(46,88,124,.85) 45%, rgba(28,46,62,.55) 100%);box-shadow:inset 0 0.7px 0 rgba(255,255,255,.35);"></div></div>
<div class="t" style="left:1664.1px;top:544.82px;font-size:8px;color:#d8e8f0;font-family:'Liberation Serif',serif;font-style:italic;opacity:.75">&#402;</div>
<div class="t" style="left:1673.3px;top:545.68px;font-size:7.2px;color:#eef2f4;font-weight:400;text-shadow:0.6px 0.8px 0.6px rgba(0,0,0,.9);transform:scaleX(.93);transform-origin:0 50%;letter-spacing:.05px;">Apply Iterative Smoothing to Mesh</div>
<svg class="r" style="left:1664.1px;top:560.5px;" width="7.6" height="8.4" viewBox="0 0 7.6 8.4"><path d="M0.8 0.9H3.6L6.8 4.2L3.6 7.5H0.8Z" fill="#ffffff" stroke="#ffffff" stroke-width="0.9" stroke-linejoin="round"/></svg>
<svg class="r" style="left:1792.7px;top:560.5px;" width="7.6" height="8.4" viewBox="0 0 7.6 8.4"><path d="M0.8 0.9H3.6L6.8 4.2L3.6 7.5H0.8Z" fill="#ffffff" stroke="#ffffff" stroke-width="0.9" stroke-linejoin="round"/></svg>
<svg class="r" style="left:1664.4px;top:577.0px;" width="8.4" height="6.6" viewBox="0 0 8.4 6.6"><circle cx="3.3" cy="3.3" r="2.9" fill="#19a8f2"/><path d="M6 1.9L7.6 3.3L6 4.7Z" fill="#19a8f2"/></svg>
<div class="t" style="left:1675.0px;top:577.12px;font-size:6px;color:#f2f2f2;font-weight:400;text-shadow:0.6px 0.8px 0.6px rgba(0,0,0,.9);">Target Mesh</div>
<div class="t" style="right:130.4px;top:577.12px;font-size:6px;color:#f2f2f2;font-weight:400;text-shadow:0.6px 0.8px 0.6px rgba(0,0,0,.9);">Target Mesh</div>
<svg class="r" style="left:1791.7px;top:577.0px;" width="8.4" height="6.6" viewBox="0 0 8.4 6.6"><circle cx="3.3" cy="3.3" r="2.9" fill="#19a8f2"/><path d="M6 1.9L7.6 3.3L6 4.7Z" fill="#19a8f2"/></svg>
<svg class="r" style="left:1664.4px;top:592.0px;" width="8.4" height="6.6" viewBox="0 0 8.4 6.6"><circle cx="3.3" cy="3.3" r="2.35" fill="#0c0c0c" fill-opacity="0.6" stroke="#0a3f9a" stroke-width="1.1"/><path d="M6 1.9L7.6 3.3L6 4.7Z" fill="#0a3f9a"/></svg>
<div class="t" style="left:1675.0px;top:592.12px;font-size:6px;color:#f2f2f2;font-weight:400;text-shadow:0.6px 0.8px 0.6px rgba(0,0,0,.9);">Selection</div>
<svg class="r" style="left:1664.4px;top:607.0px;" width="8.4" height="6.6" viewBox="0 0 8.4 6.6"><circle cx="3.3" cy="3.3" r="2.9" fill="#1466e0"/><path d="M6 1.9L7.6 3.3L6 4.7Z" fill="#1466e0"/></svg>
<div class="t" style="left:1675.0px;top:607.12px;font-size:6px;color:#f2f2f2;font-weight:400;text-shadow:0.6px 0.8px 0.6px rgba(0,0,0,.9);">Options</div>
<div class="t" style="left:1675.0px;top:621.42px;font-size:6px;color:#f2f2f2;font-weight:400;text-shadow:0.6px 0.8px 0.6px rgba(0,0,0,.9);">Debug</div>
<svg class="r" style="left:1664.7px;top:627.5px;" width="8.4" height="6.6" viewBox="0 0 8.4 6.6"><circle cx="3.3" cy="3.3" r="2.35" fill="#0c0c0c" fill-opacity="0.6" stroke="#19a8f2" stroke-width="1.1"/><path d="M6 1.9L7.6 3.3L6 4.7Z" fill="#19a8f2"/></svg>
<div class="r" style="left:1678.1px;top:628.7px;width:42.3px;height:10.9px;background:#2a2c2a;border:1px solid #343634;box-sizing:border-box;border-radius:2px;"></div><div class="t" style="left:1680.6px;top:631.18px;font-size:5.6px;color:#8c8c8c;font-weight:400;">Select Asset</div><svg class="r" style="left:1712.9px;top:632.6px;" width="5" height="3.4" viewBox="0 0 5 3.4"><path d="M0.5 0.5L2.5 2.7L4.5 0.5" stroke="#a0a0a0" stroke-width="1" fill="none"/></svg>
<svg class="r" style="left:1723.7px;top:631.0px;" width="6.4" height="6.4" viewBox="0 0 6.4 6.4"><circle cx="3.2" cy="3.2" r="2.7" stroke="#4a4c4a" stroke-width="0.9" fill="none"/><path d="M4.6 3.2H1.9M2.9 2.1L1.8 3.2L2.9 4.3" stroke="#4a4c4a" stroke-width="0.8" fill="none"/></svg><svg class="r" style="left:1733.1px;top:630.8px;" width="7.4" height="7.4" viewBox="0 0 7.4 7.4"><circle cx="3" cy="3" r="2.4" stroke="#4a4c4a" stroke-width="0.9" fill="none"/><path d="M4.8 4.8L6.8 6.8" stroke="#4a4c4a" stroke-width="1.1"/></svg>
<div class="r nd" style="left:1528.5px;top:656.5px;width:287.8px;height:80.9px;"><div class="r" style="left:0;top:0;width:100%;height:12.2px;border-radius:3.5px 3.5px 0 0;background:linear-gradient(to bottom, rgba(255,255,255,.22) 0, rgba(255,255,255,.04) 45%, rgba(0,0,0,.18) 100%), linear-gradient(to right, rgba(46,92,176,.98) 0, rgba(32,68,140,.92) 45%, rgba(22,40,84,.7) 100%);box-shadow:inset 0 0.7px 0 rgba(255,255,255,.35);"></div></div>
<svg class="r" style="left:1532.7px;top:659.0px;" width="9" height="7.2" viewBox="0 0 9 7.2"><path d="M0.4 0.4L3 2.6v2L0.4 6.8" stroke="#fff" stroke-width="1.1" fill="none"/><rect x="3" y="2.2" width="5.6" height="2.8" rx="1.2" fill="#fff"/></svg>
<div class="t" style="left:1543.4px;top:658.98px;font-size:7.2px;color:#eef2f4;font-weight:400;text-shadow:0.6px 0.8px 0.6px rgba(0,0,0,.9);transform:scaleX(.93);transform-origin:0 50%;letter-spacing:.05px;">Make GeometryScriptIterativeMeshSmoothingOptions</div>
<svg class="r" style="left:1535.1px;top:676.5px;" width="8.4" height="6.6" viewBox="0 0 8.4 6.6"><circle cx="3.3" cy="3.3" r="2.35" fill="#0c0c0c" fill-opacity="0.6" stroke="#22e0b0" stroke-width="1.1"/><path d="M6 1.9L7.6 3.3L6 4.7Z" fill="#22e0b0"/></svg>
<div class="t" style="left:1545.6px;top:676.62px;font-size:6px;color:#f2f2f2;font-weight:400;text-shadow:0.6px 0.8px 0.6px rgba(0,0,0,.9);">Num Iterations</div>
<div class="r" style="left:1588.9px;top:675.2px;width:8.8px;height:9.2px;border:1px solid #d0d0d0;box-sizing:border-box;border-radius:1.5px;background:rgba(10,10,10,.35);"></div><div class="t" style="left:1493.3px;width:200px;text-align:center;top:676.91px;font-size:6.3px;color:#e8e8e8;font-weight:400;">6</div>
<div class="t" style="right:121.0px;top:674.82px;font-size:6px;color:#f2f2f2;font-weight:400;text-shadow:0.6px 0.8px 0.6px rgba(0,0,0,.9);">Geometry Script Iterative Mesh Smoothing Options</div>
<svg class="r" style="left:1801.5px;top:674.7px;" width="8.4" height="6.6" viewBox="0 0 8.4 6.6"><circle cx="3.3" cy="3.3" r="2.9" fill="#1466e0"/><path d="M6 1.9L7.6 3.3L6 4.7Z" fill="#1466e0"/></svg>
<svg class="r" style="left:1535.1px;top:694.4px;" width="8.4" height="6.6" viewBox="0 0 8.4 6.6"><circle cx="3.3" cy="3.3" r="2.35" fill="#0c0c0c" fill-opacity="0.6" stroke="#3bd622" stroke-width="1.1"/><path d="M6 1.9L7.6 3.3L6 4.7Z" fill="#3bd622"/></svg>
<div class="t" style="left:1545.6px;top:694.52px;font-size:6px;color:#f2f2f2;font-weight:400;text-shadow:0.6px 0.8px 0.6px rgba(0,0,0,.9);">Alpha</div>
<div class="r" style="left:1563.5px;top:693.2px;width:14.3px;height:9.2px;border:1px solid #d0d0d0;box-sizing:border-box;border-radius:1.5px;background:rgba(10,10,10,.35);"></div><div class="t" style="left:1470.7px;width:200px;text-align:center;top:694.91px;font-size:6.3px;color:#e8e8e8;font-weight:400;">0.2</div>
<div class="t" style="left:1545.6px;top:711.62px;font-size:6px;color:#f2f2f2;font-weight:400;text-shadow:0.6px 0.8px 0.6px rgba(0,0,0,.9);">Empty Behavior</div>
<svg class="r" style="left:1535.1px;top:718.5px;" width="8.4" height="6.6" viewBox="0 0 8.4 6.6"><circle cx="3.3" cy="3.3" r="2.35" fill="#0c0c0c" fill-opacity="0.6" stroke="#0f5a52" stroke-width="1.1"/><path d="M6 1.9L7.6 3.3L6 4.7Z" fill="#0f5a52"/></svg>
<div class="r" style="left:1548.0px;top:718.7px;width:96.7px;height:12.5px;background:#0a0a0a;border:1px solid #2c2c2c;box-sizing:border-box;border-radius:2px;"></div><div class="t" style="left:1553.0px;top:721.98px;font-size:5.6px;color:#b8b8b8;font-weight:400;">Full Mesh Selection</div><svg class="r" style="left:1634.2px;top:723.4px;" width="5" height="3.4" viewBox="0 0 5 3.4"><path d="M0.5 0.5L2.5 2.7L4.5 0.5" stroke="#d0d0d0" stroke-width="1" fill="none"/></svg>
<div class="r nd" style="left:1123.6px;top:794.6px;width:243.7px;height:76.4px;"><div class="r" style="left:0;top:0;width:100%;height:11.7px;border-radius:3.5px 3.5px 0 0;background:linear-gradient(to bottom, rgba(255,255,255,.22) 0, rgba(255,255,255,.04) 45%, rgba(0,0,0,.18) 100%), linear-gradient(to right, rgba(46,92,176,.98) 0, rgba(32,68,140,.92) 45%, rgba(22,40,84,.7) 100%);box-shadow:inset 0 0.7px 0 rgba(255,255,255,.35);"></div></div>
<svg class="r" style="left:1127.8px;top:796.9px;" width="9" height="7.2" viewBox="0 0 9 7.2"><path d="M0.4 0.4L3 2.6v2L0.4 6.8" stroke="#fff" stroke-width="1.1" fill="none"/><rect x="3" y="2.2" width="5.6" height="2.8" rx="1.2" fill="#fff"/></svg>
<div class="t" style="left:1137.9px;top:796.83px;font-size:7.2px;color:#eef2f4;font-weight:400;text-shadow:0.6px 0.8px 0.6px rgba(0,0,0,.9);transform:scaleX(.93);transform-origin:0 50%;letter-spacing:.05px;">Make GeometryScript3DGridParameters</div>
<div class="t" style="left:1140.4px;top:812.22px;font-size:6px;color:#f2f2f2;font-weight:400;text-shadow:0.6px 0.8px 0.6px rgba(0,0,0,.9);">Size Method</div>
<svg class="r" style="left:1129.9px;top:819.1px;" width="8.4" height="6.6" viewBox="0 0 8.4 6.6"><circle cx="3.3" cy="3.3" r="2.35" fill="#0c0c0c" fill-opacity="0.6" stroke="#0f5a52" stroke-width="1.1"/><path d="M6 1.9L7.6 3.3L6 4.7Z" fill="#0f5a52"/></svg>
<div class="r" style="left:1143.5px;top:819.8px;width:96.0px;height:12.4px;background:#0a0a0a;border:1px solid #2c2c2c;box-sizing:border-box;border-radius:2px;"></div><div class="t" style="left:1148.5px;top:823.03px;font-size:5.6px;color:#b8b8b8;font-weight:400;">Grid Resolution</div><svg class="r" style="left:1229.0px;top:824.4px;" width="5" height="3.4" viewBox="0 0 5 3.4"><path d="M0.5 0.5L2.5 2.7L4.5 0.5" stroke="#d0d0d0" stroke-width="1" fill="none"/></svg>
<div class="t" style="right:569.6px;top:812.22px;font-size:6px;color:#f2f2f2;font-weight:400;text-shadow:0.6px 0.8px 0.6px rgba(0,0,0,.9);">Geometry Script 3DGrid Parameters</div>
<svg class="r" style="left:1352.7px;top:812.1px;" width="8.4" height="6.6" viewBox="0 0 8.4 6.6"><circle cx="3.3" cy="3.3" r="2.9" fill="#1466e0"/><path d="M6 1.9L7.6 3.3L6 4.7Z" fill="#1466e0"/></svg>
<svg class="r" style="left:1129.9px;top:842.7px;" width="8.4" height="6.6" viewBox="0 0 8.4 6.6"><circle cx="3.3" cy="3.3" r="2.35" fill="#0c0c0c" fill-opacity="0.6" stroke="#3bd622" stroke-width="1.1"/><path d="M6 1.9L7.6 3.3L6 4.7Z" fill="#3bd622"/></svg>
<div class="t" style="left:1140.4px;top:842.82px;font-size:6px;color:#f2f2f2;font-weight:400;text-shadow:0.6px 0.8px 0.6px rgba(0,0,0,.9);">Grid Cell Size</div>
<div class="r" style="left:1178.0px;top:841.3px;width:17.9px;height:9.9px;border:1px solid #d0d0d0;box-sizing:border-box;border-radius:1.5px;background:rgba(10,10,10,.35);"></div><div class="t" style="left:1087.0px;width:200px;text-align:center;top:843.36px;font-size:6.3px;color:#e8e8e8;font-weight:400;">0.25</div>
<svg class="r" style="left:1129.9px;top:859.3px;" width="8.4" height="6.6" viewBox="0 0 8.4 6.6"><circle cx="3.3" cy="3.3" r="2.9" fill="#22e0b0"/><path d="M6 1.9L7.6 3.3L6 4.7Z" fill="#22e0b0"/></svg>
<div class="t" style="left:1140.4px;top:859.42px;font-size:6px;color:#f2f2f2;font-weight:400;text-shadow:0.6px 0.8px 0.6px rgba(0,0,0,.9);">Grid Resolution</div>
<div class="r nd" style="left:1123.6px;top:883.3px;width:123.6px;height:51.9px;"><div class="r" style="left:0;top:0;width:100%;height:12.4px;border-radius:3.5px 3.5px 0 0;background:linear-gradient(to bottom, rgba(255,255,255,.22) 0, rgba(255,255,255,.04) 45%, rgba(0,0,0,.18) 100%), linear-gradient(to right, rgba(112,160,108,.98) 0, rgba(70,112,70,.85) 45%, rgba(36,56,38,.5) 100%);box-shadow:inset 0 0.7px 0 rgba(255,255,255,.35);"></div></div>
<div class="t" style="left:1130.1px;top:885.02px;font-size:8px;color:#d8e8f0;font-family:'Liberation Serif',serif;font-style:italic;opacity:.75">&#402;</div>
<div class="t" style="left:1137.9px;top:885.88px;font-size:7.2px;color:#eef2f4;font-weight:400;text-shadow:0.6px 0.8px 0.6px rgba(0,0,0,.9);transform:scaleX(.93);transform-origin:0 50%;letter-spacing:.05px;">Platform Switch</div>
<svg class="r" style="left:1129.9px;top:902.8px;" width="8.4" height="6.6" viewBox="0 0 8.4 6.6"><circle cx="3.3" cy="3.3" r="2.35" fill="#0c0c0c" fill-opacity="0.6" stroke="#22e0b0" stroke-width="1.1"/><path d="M6 1.9L7.6 3.3L6 4.7Z" fill="#22e0b0"/></svg>
<div class="t" style="left:1140.4px;top:902.92px;font-size:6px;color:#f2f2f2;font-weight:400;text-shadow:0.6px 0.8px 0.6px rgba(0,0,0,.9);">Low End</div>
<div class="r" style="left:1166.3px;top:901.5px;width:12.2px;height:9.8px;border:1px solid #d0d0d0;box-sizing:border-box;border-radius:1.5px;background:rgba(10,10,10,.35);"></div><div class="t" style="left:1072.4px;width:200px;text-align:center;top:903.51px;font-size:6.3px;color:#e8e8e8;font-weight:400;">60</div>
<div class="t" style="right:689.6px;top:901.62px;font-size:6px;color:#f2f2f2;font-weight:400;text-shadow:0.6px 0.8px 0.6px rgba(0,0,0,.9);">Return Value</div>
<svg class="r" style="left:1231.7px;top:901.5px;" width="8.4" height="6.6" viewBox="0 0 8.4 6.6"><circle cx="3.3" cy="3.3" r="2.9" fill="#22e0b0"/><path d="M6 1.9L7.6 3.3L6 4.7Z" fill="#22e0b0"/></svg>
<svg class="r" style="left:1129.9px;top:921.5px;" width="8.4" height="6.6" viewBox="0 0 8.4 6.6"><circle cx="3.3" cy="3.3" r="2.35" fill="#0c0c0c" fill-opacity="0.6" stroke="#22e0b0" stroke-width="1.1"/><path d="M6 1.9L7.6 3.3L6 4.7Z" fill="#22e0b0"/></svg>
<div class="t" style="left:1140.4px;top:921.62px;font-size:6px;color:#f2f2f2;font-weight:400;text-shadow:0.6px 0.8px 0.6px rgba(0,0,0,.9);">High End</div>
<div class="r" style="left:1168.2px;top:920.0px;width:12.4px;height:9.8px;border:1px solid #d0d0d0;box-sizing:border-box;border-radius:1.5px;background:rgba(10,10,10,.35);"></div><div class="t" style="left:1074.4px;width:200px;text-align:center;top:922.01px;font-size:6.3px;color:#e8e8e8;font-weight:400;">50</div>
<div class="r nd" style="left:531.8px;top:855.5px;width:121.9px;height:56.9px;"><div class="r" style="left:0;top:0;width:100%;height:20.3px;border-radius:3.5px 3.5px 0 0;background:linear-gradient(to bottom, rgba(255,255,255,.22) 0, rgba(255,255,255,.04) 45%, rgba(0,0,0,.18) 100%), linear-gradient(to right, rgba(68,122,164,.98) 0, rgba(46,88,124,.85) 45%, rgba(28,46,62,.55) 100%);box-shadow:inset 0 0.7px 0 rgba(255,255,255,.35);"></div></div>
<div class="t" style="left:538.3px;top:857.82px;font-size:8px;color:#d8e8f0;font-family:'Liberation Serif',serif;font-style:italic;opacity:.75">&#402;</div>
<div class="t" style="left:546.0px;top:858.68px;font-size:7.2px;color:#eef2f4;font-weight:400;text-shadow:0.6px 0.8px 0.6px rgba(0,0,0,.9);transform:scaleX(.93);transform-origin:0 50%;letter-spacing:.05px;">Release All Compute Meshes</div>
<div class="t" style="left:546.5px;top:867.87px;font-size:6.1px;color:#86acc6;font-weight:400;font-style:italic;transform:scaleX(.99);transform-origin:0 50%;">Target is Dynamic Mesh Actor</div>
<svg class="r" style="left:537.7px;top:881.1px;" width="7.6" height="8.4" viewBox="0 0 7.6 8.4"><path d="M0.8 0.9H3.6L6.8 4.2L3.6 7.5H0.8Z" fill="#ffffff" stroke="#ffffff" stroke-width="0.9" stroke-linejoin="round"/></svg>
<svg class="r" style="left:640.1px;top:881.1px;" width="7.6" height="8.4" viewBox="0 0 7.6 8.4"><path d="M0.8 0.9H3.6L6.8 4.2L3.6 7.5H0.8Z" fill="#ffffff" stroke="#ffffff" stroke-width="0.9" stroke-linejoin="round"/></svg>
<svg class="r" style="left:538.5px;top:899.1px;" width="8.4" height="6.6" viewBox="0 0 8.4 6.6"><circle cx="3.3" cy="3.3" r="2.35" fill="#0c0c0c" fill-opacity="0.6" stroke="#19a8f2" stroke-width="1.1"/><path d="M6 1.9L7.6 3.3L6 4.7Z" fill="#19a8f2"/></svg>
<div class="t" style="left:548.9px;top:899.22px;font-size:6px;color:#f2f2f2;font-weight:400;text-shadow:0.6px 0.8px 0.6px rgba(0,0,0,.9);">Target</div>
<div class="r" style="left:569.2px;top:897.8px;width:19.5px;height:9.6px;border:1px solid #b0b0b0;box-sizing:border-box;border-radius:1.5px;background:rgba(10,10,10,.35);"></div><div class="t" style="left:479.0px;width:200px;text-align:center;top:899.71px;font-size:6.3px;color:#a8a8a8;font-weight:400;">self</div>
<div class="r nd" style="left:678.1px;top:855.5px;width:170.7px;height:118.7px;"><div class="r" style="left:0;top:0;width:100%;height:20.3px;border-radius:3.5px 3.5px 0 0;background:linear-gradient(to bottom, rgba(255,255,255,.22) 0, rgba(255,255,255,.04) 45%, rgba(0,0,0,.18) 100%), linear-gradient(to right, rgba(68,122,164,.98) 0, rgba(46,88,124,.85) 45%, rgba(28,46,62,.55) 100%);box-shadow:inset 0 0.7px 0 rgba(255,255,255,.35);"></div></div>
<div class="t" style="left:684.6px;top:857.82px;font-size:8px;color:#d8e8f0;font-family:'Liberation Serif',serif;font-style:italic;opacity:.75">&#402;</div>
<div class="t" style="left:692.6px;top:858.68px;font-size:7.2px;color:#eef2f4;font-weight:400;text-shadow:0.6px 0.8px 0.6px rgba(0,0,0,.9);transform:scaleX(.93);transform-origin:0 50%;letter-spacing:.05px;">Add Actor World Offset</div>
<div class="t" style="left:693.1px;top:867.87px;font-size:6.1px;color:#86acc6;font-weight:400;font-style:italic;transform:scaleX(.99);transform-origin:0 50%;">Target is Actor</div>
<svg class="r" style="left:683.5px;top:881.1px;" width="7.6" height="8.4" viewBox="0 0 7.6 8.4"><path d="M0.8 0.9H3.6L6.8 4.2L3.6 7.5H0.8Z" fill="#ffffff" stroke="#ffffff" stroke-width="0.9" stroke-linejoin="round"/></svg>
<svg class="r" style="left:835.7px;top:881.1px;" width="7.6" height="8.4" viewBox="0 0 7.6 8.4"><path d="M0.8 0.9H3.6L6.8 4.2L3.6 7.5H0.8Z" fill="#ffffff" stroke="#ffffff" stroke-width="0.9" stroke-linejoin="round"/></svg>
<svg class="r" style="left:683.8px;top:899.1px;" width="8.4" height="6.6" viewBox="0 0 8.4 6.6"><circle cx="3.3" cy="3.3" r="2.35" fill="#0c0c0c" fill-opacity="0.6" stroke="#19a8f2" stroke-width="1.1"/><path d="M6 1.9L7.6 3.3L6 4.7Z" fill="#19a8f2"/></svg>
<div class="t" style="left:694.7px;top:899.22px;font-size:6px;color:#f2f2f2;font-weight:400;text-shadow:0.6px 0.8px 0.6px rgba(0,0,0,.9);">Target</div>
<div class="r" style="left:715.0px;top:897.8px;width:20.0px;height:9.6px;border:1px solid #b0b0b0;box-sizing:border-box;border-radius:1.5px;background:rgba(10,10,10,.35);"></div><div class="t" style="left:625.0px;width:200px;text-align:center;top:899.71px;font-size:6.3px;color:#a8a8a8;font-weight:400;">self</div>
<div class="t" style="right:1088.0px;top:897.82px;font-size:6px;color:#f2f2f2;font-weight:400;text-shadow:0.6px 0.8px 0.6px rgba(0,0,0,.9);">Sweep Hit Result</div>
<svg class="r" style="left:834.9px;top:897.7px;" width="8.4" height="6.6" viewBox="0 0 8.4 6.6"><circle cx="3.3" cy="3.3" r="2.35" fill="#0c0c0c" fill-opacity="0.6" stroke="#0a3f9a" stroke-width="1.1"/><path d="M6 1.9L7.6 3.3L6 4.7Z" fill="#0a3f9a"/></svg>
<div class="t" style="left:694.7px;top:915.42px;font-size:6px;color:#f2f2f2;font-weight:400;text-shadow:0.6px 0.8px 0.6px rgba(0,0,0,.9);">Delta Location</div>
<svg class="r" style="left:683.8px;top:922.1px;" width="8.4" height="6.6" viewBox="0 0 8.4 6.6"><circle cx="3.3" cy="3.3" r="2.35" fill="#0c0c0c" fill-opacity="0.6" stroke="#e8b020" stroke-width="1.1"/><path d="M6 1.9L7.6 3.3L6 4.7Z" fill="#e8b020"/></svg>
<div class="t" style="left:700.0px;top:925.51px;font-size:6.2px;color:#6e6e6e;font-weight:400;">X</div>
<div class="r" style="left:705.2px;top:924.0px;width:14.4px;height:9.6px;border:1px solid #d0d0d0;box-sizing:border-box;border-radius:1.5px;background:rgba(10,10,10,.35);"></div><div class="t" style="left:612.4px;width:200px;text-align:center;top:925.91px;font-size:6.3px;color:#e8e8e8;font-weight:400;">0.0</div>
<div class="t" style="left:724.0px;top:925.51px;font-size:6.2px;color:#6e6e6e;font-weight:400;">Y</div>
<div class="r" style="left:729.0px;top:924.0px;width:15.0px;height:9.6px;border:1px solid #d0d0d0;box-sizing:border-box;border-radius:1.5px;background:rgba(10,10,10,.35);"></div><div class="t" style="left:636.5px;width:200px;text-align:center;top:925.91px;font-size:6.3px;color:#e8e8e8;font-weight:400;">0.0</div>
<div class="t" style="left:747.4px;top:925.51px;font-size:6.2px;color:#6e6e6e;font-weight:400;">Z</div>
<div class="r" style="left:752.0px;top:924.0px;width:19.0px;height:9.6px;border:1px solid #d0d0d0;box-sizing:border-box;border-radius:1.5px;background:rgba(10,10,10,.35);"></div><div class="t" style="left:661.5px;width:200px;text-align:center;top:925.91px;font-size:6.3px;color:#e8e8e8;font-weight:400;">0.05</div>
<svg class="r" style="left:683.8px;top:944.3px;" width="8.4" height="6.6" viewBox="0 0 8.4 6.6"><circle cx="3.3" cy="3.3" r="2.35" fill="#0c0c0c" fill-opacity="0.6" stroke="#8a0c0c" stroke-width="1.1"/><path d="M6 1.9L7.6 3.3L6 4.7Z" fill="#8a0c0c"/></svg>
<div class="t" style="left:694.7px;top:944.42px;font-size:6px;color:#f2f2f2;font-weight:400;text-shadow:0.6px 0.8px 0.6px rgba(0,0,0,.9);">Sweep</div>
<div class="r" style="left:715.5px;top:943.6px;width:8.2px;height:8.6px;background:#0c0c0c;border:1px solid #2e2e2e;box-sizing:border-box;border-radius:1.5px;"></div>
<svg class="r" style="left:683.8px;top:961.4px;" width="8.4" height="6.6" viewBox="0 0 8.4 6.6"><circle cx="3.3" cy="3.3" r="2.35" fill="#0c0c0c" fill-opacity="0.6" stroke="#8a0c0c" stroke-width="1.1"/><path d="M6 1.9L7.6 3.3L6 4.7Z" fill="#8a0c0c"/></svg>
<div class="t" style="left:694.7px;top:961.52px;font-size:6px;color:#f2f2f2;font-weight:400;text-shadow:0.6px 0.8px 0.6px rgba(0,0,0,.9);">Teleport</div>
<div class="r" style="left:720.4px;top:960.6px;width:8.2px;height:8.6px;background:#0c0c0c;border:1px solid #2e2e2e;box-sizing:border-box;border-radius:1.5px;"></div>
<div class="r nd" style="left:904.6px;top:855.5px;width:104.0px;height:53.7px;"><div class="r" style="left:0;top:0;width:100%;height:20.3px;border-radius:3.5px 3.5px 0 0;background:linear-gradient(to bottom, rgba(255,255,255,.22) 0, rgba(255,255,255,.04) 45%, rgba(0,0,0,.18) 100%), linear-gradient(to right, rgba(68,122,164,.98) 0, rgba(46,88,124,.85) 45%, rgba(28,46,62,.55) 100%);box-shadow:inset 0 0.7px 0 rgba(255,255,255,.35);"></div></div>
<svg class="r" style="left:908.8px;top:858.3px;" width="8.4" height="8" viewBox="0 0 8.4 8"><path d="M4.2 0.5L7.9 4L4.2 7.5L0.5 4Z" stroke="#fff" stroke-width="1.1" fill="none"/><path d="M3.4 2.6L5 4L3.4 5.4" fill="#fff"/></svg>
<div class="t" style="left:919.3px;top:858.68px;font-size:7.2px;color:#eef2f4;font-weight:400;text-shadow:0.6px 0.8px 0.6px rgba(0,0,0,.9);transform:scaleX(.93);transform-origin:0 50%;letter-spacing:.05px;">Island Gen Complete</div>
<div class="t" style="left:919.8px;top:867.87px;font-size:6.1px;color:#86acc6;font-weight:400;font-style:italic;transform:scaleX(.99);transform-origin:0 50%;">Target is DIV Island Plugin</div>
<svg class="r" style="left:910.2px;top:881.1px;" width="7.6" height="8.4" viewBox="0 0 7.6 8.4"><path d="M0.8 0.9H3.6L6.8 4.2L3.6 7.5H0.8Z" fill="#ffffff" stroke="#ffffff" stroke-width="0.9" stroke-linejoin="round"/></svg>
<svg class="r" style="left:995.0px;top:881.1px;" width="7.6" height="8.4" viewBox="0 0 7.6 8.4"><path d="M0.8 0.9H3.6L6.8 4.2L3.6 7.5H0.8Z" fill="none" stroke="#ffffff" stroke-width="0.9" stroke-linejoin="round"/></svg>
<svg class="r" style="left:910.5px;top:897.7px;" width="8.4" height="6.6" viewBox="0 0 8.4 6.6"><circle cx="3.3" cy="3.3" r="2.9" fill="#19a8f2"/><path d="M6 1.9L7.6 3.3L6 4.7Z" fill="#19a8f2"/></svg>
<div class="t" style="left:921.4px;top:897.82px;font-size:6px;color:#f2f2f2;font-weight:400;text-shadow:0.6px 0.8px 0.6px rgba(0,0,0,.9);">Target</div>
<svg class="r" style="left:1000.7px;top:849.6px;" width="14" height="13.5" viewBox="0 0 14 13.5"><path d="M0.5 5L7 0.5L13.5 5V13H0.5Z" fill="#b8d4ee"/><rect x="2.4" y="3.4" width="9.2" height="6" fill="#f4f8fc"/><path d="M0.5 5.4L7 9.6L13.5 5.4V13H0.5Z" fill="#9cc0e4"/><path d="M0.5 13L5.6 8.6M13.5 13L8.4 8.6" stroke="#d8e8f6" stroke-width="0.7"/></svg>
<div class="r nd" style="left:904.6px;top:912.4px;width:81.0px;height:28.4px;"><div class="r" style="left:0;top:0;width:100%;height:12.2px;border-radius:3.5px 3.5px 0 0;background:linear-gradient(to bottom, rgba(255,255,255,.22) 0, rgba(255,255,255,.04) 45%, rgba(0,0,0,.18) 100%), linear-gradient(to right, rgba(112,160,108,.98) 0, rgba(70,112,70,.85) 45%, rgba(36,56,38,.5) 100%);box-shadow:inset 0 0.7px 0 rgba(255,255,255,.35);"></div></div>
<div class="t" style="left:911.1px;top:914.02px;font-size:8px;color:#d8e8f0;font-family:'Liberation Serif',serif;font-style:italic;opacity:.75">&#402;</div>
<div class="t" style="left:919.3px;top:914.88px;font-size:7.2px;color:#eef2f4;font-weight:400;text-shadow:0.6px 0.8px 0.6px rgba(0,0,0,.9);transform:scaleX(.93);transform-origin:0 50%;letter-spacing:.05px;">Get Game Mode</div>
<div class="t" style="right:951.2px;top:929.82px;font-size:6px;color:#f2f2f2;font-weight:400;text-shadow:0.6px 0.8px 0.6px rgba(0,0,0,.9);">Return Value</div>
<svg class="r" style="left:970.5px;top:929.7px;" width="8.4" height="6.6" viewBox="0 0 8.4 6.6"><circle cx="3.3" cy="3.3" r="2.9" fill="#19a8f2"/><path d="M6 1.9L7.6 3.3L6 4.7Z" fill="#19a8f2"/></svg>
<div class="r nd" style="left:604.4px;top:1042.4px;width:157.6px;height:57.6px;"><div class="r" style="left:0;top:0;width:100%;height:13.1px;border-radius:3.5px 3.5px 0 0;background:linear-gradient(to bottom, rgba(255,255,255,.22) 0, rgba(255,255,255,.04) 45%, rgba(0,0,0,.18) 100%), linear-gradient(to right, rgba(68,122,164,.98) 0, rgba(46,88,124,.85) 45%, rgba(28,46,62,.55) 100%);box-shadow:inset 0 0.7px 0 rgba(255,255,255,.35);"></div></div>
<div class="t" style="left:610.9px;top:1044.47px;font-size:8px;color:#d8e8f0;font-family:'Liberation Serif',serif;font-style:italic;opacity:.75">&#402;</div>
<div class="t" style="left:618.8px;top:1045.33px;font-size:7.2px;color:#eef2f4;font-weight:400;text-shadow:0.6px 0.8px 0.6px rgba(0,0,0,.9);transform:scaleX(.93);transform-origin:0 50%;letter-spacing:.05px;">Get Vector Parameter Value</div>
<div class="r nd" style="left:993.7px;top:1042.4px;width:120.8px;height:57.6px;"><div class="r" style="left:0;top:0;width:100%;height:13.1px;border-radius:3.5px 3.5px 0 0;background:linear-gradient(to bottom, rgba(255,255,255,.22) 0, rgba(255,255,255,.04) 45%, rgba(0,0,0,.18) 100%), linear-gradient(to right, rgba(68,122,164,.98) 0, rgba(46,88,124,.85) 45%, rgba(28,46,62,.55) 100%);box-shadow:inset 0 0.7px 0 rgba(255,255,255,.35);"></div></div>
<div class="t" style="left:1000.2px;top:1044.47px;font-size:8px;color:#d8e8f0;font-family:'Liberation Serif',serif;font-style:italic;opacity:.75">&#402;</div>
<div class="t" style="left:1008.0px;top:1045.33px;font-size:7.2px;color:#eef2f4;font-weight:400;text-shadow:0.6px 0.8px 0.6px rgba(0,0,0,.9);transform:scaleX(.93);transform-origin:0 50%;letter-spacing:.05px;">Set Vector Parameter Value</div>
<svg class="r" style="left:505.0px;top:256.7px;" width="7" height="7" viewBox="0 0 7 7"><circle cx="3.5" cy="3.5" r="3" fill="#fff"/></svg>
<svg class="r" style="left:521.6px;top:556.6px;" width="7" height="7" viewBox="0 0 7 7"><circle cx="3.5" cy="3.5" r="3" fill="#fff"/></svg>
<svg class="r" style="left:0;top:0;opacity:.18" width="1920" height="1080" viewBox="0 0 1920 1080">
<path d="M285.7 491.7C304.4 491.7 304.0 472.7 322.7 472.7" stroke="#22e0b0" stroke-width="1.75" fill="none" stroke-opacity="1.0"/>
<path d="M585.4 325.0C595.2 325.0 604.6 325.3 614.4 325.3" stroke="#1466e0" stroke-width="1.75" fill="none" stroke-opacity="1.0"/>
<path d="M725.6 325.3C738.2 325.3 748.2 327.8 760.8 327.8" stroke="#fdc818" stroke-width="1.75" fill="none" stroke-opacity="1.0"/>
<path d="M635.7 345.4C647.6 345.4 659.4 345.4 671.3 345.4" stroke="#3bd622" stroke-width="1.75" fill="none" stroke-opacity="1.0"/>
<path d="M728.6 347.0C740.7 347.0 748.7 342.8 760.8 342.8" stroke="#fdc818" stroke-width="1.75" fill="none" stroke-opacity="1.0"/>
<path d="M810.1 312.8C836.3 312.8 839.6 290.0 865.8 290.0" stroke="#3bd622" stroke-width="1.75" fill="none" stroke-opacity="1.0"/>
<path d="M810.1 327.6C836.2 327.6 839.7 305.0 865.8 305.0" stroke="#3bd622" stroke-width="1.75" fill="none" stroke-opacity="1.0"/>
<path d="M797.8 272.8C821.2 272.8 841.6 275.8 865.0 275.8" stroke="#fdc818" stroke-width="2.35" fill="none" stroke-opacity="1.0"/>
<path d="M797.8 272.8C869.7 272.8 881.9 332.5 953.8 332.5" stroke="#fdc818" stroke-width="1.75" fill="none" stroke-opacity="1.0"/>
<path d="M797.8 272.8C978.4 272.8 1284.1 307.8 1464.7 307.8" stroke="#fdc818" stroke-width="1.75" fill="none" stroke-opacity="1.0"/>
<path d="M916.8 275.8C953.0 275.8 918.3 346.8 954.5 346.8" stroke="#22e0b0" stroke-width="1.75" fill="none" stroke-opacity="1.0"/>
<path d="M916.8 275.8C1101.1 275.8 1281.0 322.0 1465.3 322.0" stroke="#22e0b0" stroke-width="1.75" fill="none" stroke-opacity="1.0"/>
<path d="M1018.0 325.0C1034.7 325.0 1051.3 325.0 1068.0 325.0" stroke="#3bd622" stroke-width="1.75" fill="none" stroke-opacity="1.0"/>
<path d="M1018.0 340.0C1034.7 340.0 1051.3 340.0 1068.0 340.0" stroke="#3bd622" stroke-width="1.75" fill="none" stroke-opacity="1.0"/>
<path d="M758.8 414.3C932.4 414.3 449.8 276.6 623.4 276.6" stroke="#3bd622" stroke-width="1.75" fill="none" stroke-opacity="1.0"/>
<path d="M610.0 414.1C619.5 414.1 628.9 414.3 638.4 414.3" stroke="#1466e0" stroke-width="1.75" fill="none" stroke-opacity="1.0"/>
<path d="M610.0 435.0C621.4 435.0 627.0 429.1 638.4 429.1" stroke="#3bd622" stroke-width="1.75" fill="none" stroke-opacity="1.0"/>
<path d="M610.0 450.0C621.4 450.0 627.0 444.1 638.4 444.1" stroke="#3bd622" stroke-width="1.75" fill="none" stroke-opacity="1.0"/>
<path d="M1201.3 272.8C1216.2 272.8 1230.9 272.5 1245.8 272.5" stroke="#19a8f2" stroke-width="1.75" fill="none" stroke-opacity="1.0"/>
<path d="M1203.2 325.0C1225.1 325.0 1223.9 302.0 1245.8 302.0" stroke="#ff7a14" stroke-width="1.75" fill="none" stroke-opacity="1.0"/>
<path d="M1104.3 435.0C1190.8 435.0 1159.3 317.0 1245.8 317.0" stroke="#3bd622" stroke-width="1.75" fill="none" stroke-opacity="1.0"/>
<path d="M1104.3 435.0C1116.8 435.0 1129.3 435.0 1141.8 435.0" stroke="#3bd622" stroke-width="1.75" fill="none" stroke-opacity="1.0"/>
<path d="M1199.3 436.3C1249.6 436.3 1195.5 332.0 1245.8 332.0" stroke="#3bd622" stroke-width="1.75" fill="none" stroke-opacity="1.0"/>
<path d="M1530.0 315.0C1538.1 315.0 1546.1 315.0 1554.2 315.0" stroke="#fdc818" stroke-width="1.75" fill="none" stroke-opacity="1.0"/>
<path d="M1596.7 315.0C1613.5 315.0 1618.8 303.6 1635.6 303.6" stroke="#ff7a14" stroke-width="1.75" fill="none" stroke-opacity="1.0"/>
<path d="M1501.4 353.0C1511.3 353.0 1520.7 353.6 1530.6 353.6" stroke="#3bd622" stroke-width="1.75" fill="none" stroke-opacity="1.0"/>
<path d="M1598.9 362.5C1714.7 362.5 1389.8 276.7 1505.6 276.7" stroke="#a01818" stroke-width="1.75" fill="none" stroke-opacity="1.0"/>
<path d="M748.0 580.8C766.8 580.8 781.5 576.7 800.3 576.7" stroke="#19a8f2" stroke-width="1.75" fill="none" stroke-opacity="1.0"/>
<path d="M743.8 617.0C766.4 617.0 777.7 605.8 800.3 605.8" stroke="#ff7a14" stroke-width="1.75" fill="none" stroke-opacity="1.0"/>
<path d="M643.9 710.0C654.5 710.0 665.2 710.0 675.8 710.0" stroke="#3bd622" stroke-width="1.75" fill="none" stroke-opacity="1.0"/>
<path d="M748.0 711.7C795.6 711.7 752.7 621.1 800.3 621.1" stroke="#3bd622" stroke-width="1.75" fill="none" stroke-opacity="1.0"/>
<path d="M748.0 711.7C790.7 711.7 757.6 635.8 800.3 635.8" stroke="#3bd622" stroke-width="1.75" fill="none" stroke-opacity="1.0"/>
<path d="M961.8 576.7C1045.7 576.7 1129.6 576.6 1213.5 576.6" stroke="#19a8f2" stroke-width="1.75" fill="none" stroke-opacity="1.0"/>
<path d="M1341.8 576.6C1375.9 576.6 1406.3 580.3 1440.4 580.3" stroke="#19a8f2" stroke-width="1.75" fill="none" stroke-opacity="1.0"/>
<path d="M1568.2 580.3C1601.4 580.3 1634.5 580.3 1667.7 580.3" stroke="#19a8f2" stroke-width="1.75" fill="none" stroke-opacity="1.0"/>
<path d="M1795.0 580.3C1850.2 580.3 1904.8 581.0 1960.0 581.0" stroke="#19a8f2" stroke-width="1.75" fill="none" stroke-opacity="1.0"/>
<path d="M1795.0 580.3C1875.9 580.3 1909.1 628.0 1990.0 628.0" stroke="#19a8f2" stroke-width="1.75" fill="none" stroke-opacity="1.0"/>
<path d="M1356.0 670.0C1510.6 670.0 1058.9 591.2 1213.5 591.2" stroke="#1466e0" stroke-width="1.75" fill="none" stroke-opacity="1.0"/>
<path d="M1356.0 815.4C1545.3 815.4 975.7 670.0 1165.0 670.0" stroke="#1466e0" stroke-width="1.75" fill="none" stroke-opacity="1.0"/>
<path d="M1235.0 904.8C1339.5 904.8 1028.7 862.6 1133.2 862.6" stroke="#22e0b0" stroke-width="1.75" fill="none" stroke-opacity="1.0"/>
<path d="M1804.8 678.0C1950.1 678.0 1522.4 610.3 1667.7 610.3" stroke="#1466e0" stroke-width="1.75" fill="none" stroke-opacity="1.0"/>
<path d="M973.8 933.0C1038.4 933.0 849.2 901.0 913.8 901.0" stroke="#19a8f2" stroke-width="1.75" fill="none" stroke-opacity="1.0"/>
</svg>
<div class="r" style="left:266px;top:97px;width:1654px;height:27.7px;background:rgba(0,0,0,.6);"></div>
<svg class="r" style="left:272px;top:104.4px;" width="9" height="12" viewBox="0 0 9 12"><path d="M0 0.5h5v8H0z" fill="#6a6a6a"/><path d="M2 2.4h6.4v9.4L5.2 9.4L2 11.8z" fill="#b8b8b8"/></svg>
<svg class="r" style="left:287px;top:108.0px;" width="7.5" height="5" viewBox="0 0 7.5 5"><path d="M0.7 0.8L3.75 4L6.8 0.8" stroke="#b8b8b8" stroke-width="1.4" fill="none"/></svg>
<div class="r" style="left:302px;top:100px;width:1px;height:22px;background:rgba(255,255,255,.05);"></div>
<div class="r" style="left:361.5px;top:100px;width:1px;height:22px;background:rgba(255,255,255,.05);"></div>
<svg class="r" style="left:309.5px;top:104.5px;" width="14" height="11" viewBox="0 0 14 11"><path d="M0.5 5.5L6.5 0.5V3.6H13.5V7.4H6.5V10.5Z" fill="#8c8c8c"/></svg>
<svg class="r" style="left:338.5px;top:104.5px;" width="14" height="11" viewBox="0 0 14 11"><path d="M13.5 5.5L7.5 0.5V3.6H0.5V7.4H7.5V10.5Z" fill="#8c8c8c"/></svg>
<div class="t" style="left:373.5px;top:98.5px;font-size:19px;color:#b0b0b0;font-family:'Liberation Serif',serif;font-style:italic;">&#402;</div>
<div class="t " style="left:399px;top:103.99px;font-size:13.8px;color:#8a8a8a;font-weight:400;-webkit-text-stroke:0;">BP_IslandGen</div>
<svg class="r" style="left:492.5px;top:105px;" width="8" height="11" viewBox="0 0 8 11"><path d="M1.2 0.8L6.6 5.5L1.2 10.2" stroke="#9a9a9a" stroke-width="1.5" fill="none"/></svg>
<div class="t " style="left:507px;top:103.89px;font-size:13.8px;color:#8a8a8a;font-weight:400;-webkit-text-stroke:0;">Create Island</div>
<div class="t" style="right:6.5px;top:102px;font-size:15.5px;font-weight:700;color:#474747;transform:scaleX(.83);transform-origin:100% 50%;">Zoom -3</div>
<div class="t" style="right:11.5px;top:993px;font-size:47.5px;font-weight:700;color:rgba(255,255,255,.25);transform:scaleX(.80);transform-origin:100% 50%;letter-spacing:0px;">BLUEPRINT</div>
</div>
<div class="r" style="left:0px;top:0px;width:1920px;height:44px;background:#151515;"></div>
<svg class="r" style="left:4px;top:3px;" width="33" height="33" viewBox="0 0 33 33"><defs><linearGradient id="ueg" x1="0" y1="0" x2="0" y2="1"><stop offset="0" stop-color="#f2f2f2"/><stop offset="1" stop-color="#8e9496"/></linearGradient></defs><circle cx="16.5" cy="16.7" r="14.9" stroke="#9c9c9c" stroke-width="1.3" fill="#0e0e0e"/><path d="M7.2 14.9L12.7 7.6L14.8 9.6V21.8Q14.8 23.5 16.4 23.4L18.5 22.4V11L22.8 7.9V20.6L25.7 19.4Q22.4 26 16.2 27Q10.5 26.2 10.3 21V13.4Z" fill="url(#ueg)"/></svg>
<div class="t " style="left:50px;top:3.51px;font-size:9.6px;color:#c0c0c0;font-weight:400;">File</div>
<div class="t " style="left:83px;top:3.51px;font-size:9.6px;color:#c0c0c0;font-weight:400;">Edit</div>
<div class="t " style="left:117px;top:3.51px;font-size:9.6px;color:#c0c0c0;font-weight:400;">Asset</div>
<div class="t " style="left:160px;top:3.51px;font-size:9.6px;color:#c0c0c0;font-weight:400;">View</div>
<div class="t " style="left:199px;top:3.51px;font-size:9.6px;color:#c0c0c0;font-weight:400;">Debug</div>
<div class="t " style="left:244px;top:3.51px;font-size:9.6px;color:#c0c0c0;font-weight:400;">Window</div>
<div class="t " style="left:296px;top:3.51px;font-size:9.6px;color:#c0c0c0;font-weight:400;">Tools</div>
<div class="t " style="left:338px;top:3.51px;font-size:9.6px;color:#c0c0c0;font-weight:400;">Help</div>
<div class="r" style="left:1838px;top:12.5px;width:8px;height:1px;background:#b0b0b0;"></div>
<svg class="r" style="left:1869px;top:9px;" width="9" height="9" viewBox="0 0 9 9"><rect x="0.6" y="2.2" width="5.6" height="5.8" rx="1" stroke="#c0c0c0" stroke-width="1.1" fill="none"/><path d="M2.6 2.2V1.4a.8 .8 0 0 1 .8-.8h4a.8 .8 0 0 1 .8 .8v4.4a.8 .8 0 0 1-.8 .8h-1" stroke="#c0c0c0" stroke-width="1.1" fill="none"/></svg>
<svg class="r" style="left:1900.5px;top:8.5px;" width="9" height="9" viewBox="0 0 9 9"><path d="M0.8 0.8L8.2 8.2M8.2 0.8L0.8 8.2" stroke="#d0d0d0" stroke-width="1.3"/></svg>
<div class="t" style="right:105.5px;top:26.07px;font-size:9.3px;color:#7a7a7a;font-weight:400;">Parent class:</div>
<div class="t" style="right:11.5px;top:26.51px;font-size:9.6px;color:#d8d8d8;font-weight:400;border-bottom:1px dotted #c0c0c0;padding-bottom:0.5px;">Dynamic Mesh Actor</div>
<div class="r" style="left:49px;top:20px;width:157px;height:24px;background:#242424;border-radius:4px 4px 0 0;"></div>
<svg class="r" style="left:55px;top:24.4px;" width="12" height="13" viewBox="0 0 12 13"><circle cx="6" cy="5" r="4.1" fill="#1a46b0" stroke="#3a74e0" stroke-width="1.3"/><circle cx="7.2" cy="3.9" r="1.3" fill="#4a86f0"/><path d="M0.4 12.4h11.2l-1.5-2.3H1.9z" fill="#2c66d8"/></svg>
<div class="t " style="left:73px;top:27.11px;font-size:9.8px;color:#e0e0e0;font-weight:400;">BP_IslandGen&#8226;</div>
<svg class="r" style="left:189.5px;top:28.7px;" width="6" height="6" viewBox="0 0 6 6"><path d="M0.7 0.7L5.3 5.3M5.3 0.7L0.7 5.3" stroke="#c0c0c0" stroke-width="1.4"/></svg>
<div class="r" style="left:0px;top:43.5px;width:1920px;height:31.5px;background:#242424;"></div>
<svg class="r" style="left:13px;top:52px;" width="13" height="14" viewBox="0 0 13 14"><path d="M0.5 0.5h9l3 3v10h-12z" fill="#a6a6a6"/><rect x="3" y="0.5" width="6" height="4" fill="#242424"/><rect x="6.6" y="1" width="1.8" height="3" fill="#a6a6a6"/><rect x="2" y="8" width="9" height="5.5" fill="#242424"/><rect x="2.6" y="8.8" width="7.8" height="4.7" fill="#c4c4c4"/></svg>
<svg class="r" style="left:45px;top:51.5px;" width="16" height="14.933333333333334" viewBox="0 0 15 14"><path d="M0.5 1.5h4.2l1.3 1.5h5v3.2a4 4 0 0 0-3.5 5.8H0.5z" fill="#a8a8a8"/><circle cx="10.6" cy="9.3" r="2.6" stroke="#a8a8a8" stroke-width="1.2" fill="none"/><path d="M8.8 11.2L6.8 13.4" stroke="#a8a8a8" stroke-width="1.4" stroke-linecap="round"/></svg>
<div class="r" style="left:72px;top:46px;width:1px;height:27px;background:#1a1a1a;"></div>
<div class="r" style="left:160px;top:46px;width:1px;height:27px;background:#1a1a1a;"></div>
<div class="r" style="left:227.5px;top:46px;width:1px;height:27px;background:#1a1a1a;"></div>
<div class="r" style="left:396px;top:46px;width:1px;height:27px;background:#1a1a1a;"></div>
<div class="r" style="left:677px;top:46px;width:1px;height:27px;background:#1a1a1a;"></div>
<div class="r" style="left:806px;top:46px;width:1px;height:27px;background:#1a1a1a;"></div>
<svg class="r" style="left:85px;top:51.5px;" width="16" height="16" viewBox="0 0 16 16"><rect x="1.0" y="1.0" width="2.7" height="2.7" fill="#c8c8c8"/><rect x="4.6" y="1.0" width="2.7" height="2.7" fill="#6a6a6a"/><rect x="8.2" y="1.0" width="2.7" height="2.7" fill="#c8c8c8"/><rect x="11.8" y="1.0" width="2.7" height="2.7" fill="#6a6a6a"/><rect x="1.0" y="4.6" width="2.7" height="2.7" fill="#6a6a6a"/><rect x="4.6" y="4.6" width="2.7" height="2.7" fill="#c8c8c8"/><rect x="8.2" y="4.6" width="2.7" height="2.7" fill="#6a6a6a"/><rect x="11.8" y="4.6" width="2.7" height="2.7" fill="#c8c8c8"/><rect x="1.0" y="8.2" width="2.7" height="2.7" fill="#c8c8c8"/><rect x="4.6" y="8.2" width="2.7" height="2.7" fill="#6a6a6a"/><rect x="8.2" y="8.2" width="2.7" height="2.7" fill="#c8c8c8"/><rect x="11.8" y="8.2" width="2.7" height="2.7" fill="#6a6a6a"/><rect x="1.0" y="11.8" width="2.7" height="2.7" fill="#6a6a6a"/><rect x="4.6" y="11.8" width="2.7" height="2.7" fill="#c8c8c8"/><rect x="8.2" y="11.8" width="2.7" height="2.7" fill="#6a6a6a"/><rect x="11.8" y="11.8" width="2.7" height="2.7" fill="#c8c8c8"/><circle cx="9.4" cy="9.6" r="5.2" fill="#6cc03a" stroke="#242424" stroke-width="1"/><path d="M6.8 9.6L8.7 11.6L12.2 7.8" stroke="#111" stroke-width="1.7" fill="none"/></svg>
<div class="t " style="left:104px;top:53.91px;font-size:9.6px;color:#c0c0c0;font-weight:400;">Compile</div>
<svg class="r" style="left:148.5px;top:53.5px;" width="3" height="12" viewBox="0 0 3 12"><circle cx="1.5" cy="1.5" r="1.35" fill="#c0c0c0"/><circle cx="1.5" cy="6" r="1.35" fill="#c0c0c0"/><circle cx="1.5" cy="10.5" r="1.35" fill="#c0c0c0"/></svg>
<svg class="r" style="left:170px;top:52px;" width="16" height="15" viewBox="0 0 16 15"><rect x="0" y="4" width="4.5" height="3.2" rx="0.6" fill="#c8c8c8"/><rect x="9.5" y="0.3" width="5" height="3.4" rx="0.6" fill="#c8c8c8"/><path d="M4.5 5.6h3V2h2M7.5 5.6v4.5" stroke="#c8c8c8" stroke-width="1" fill="none"/><circle cx="11.5" cy="10.6" r="3.6" fill="#c8c8c8"/><path d="M9.7 10.6L11 12L13.3 9.3" stroke="#242424" stroke-width="1.3" fill="none"/></svg>
<div class="t " style="left:188.5px;top:53.91px;font-size:9.6px;color:#c0c0c0;font-weight:400;">Diff</div>
<svg class="r" style="left:206.5px;top:57.0px;" width="7" height="5" viewBox="0 0 7 5"><path d="M0.7 0.8L3.5 4L6.3 0.8" stroke="#c0c0c0" stroke-width="1.4" fill="none"/></svg>
<svg class="r" style="left:240px;top:52px;" width="15" height="15" viewBox="0 0 15 15"><circle cx="8.6" cy="6" r="5" stroke="#c8c8c8" stroke-width="1.3" fill="none"/><path d="M5 9.8L1 13.8" stroke="#c8c8c8" stroke-width="1.8" stroke-linecap="round"/><circle cx="7" cy="5.5" r="0.9" fill="#c8c8c8"/><circle cx="10.3" cy="5.5" r="0.9" fill="#c8c8c8"/><path d="M7 5.5L8.6 8L10.3 5.5" stroke="#c8c8c8" stroke-width="0.7" fill="none"/></svg>
<div class="t " style="left:258.5px;top:53.91px;font-size:9.6px;color:#c0c0c0;font-weight:400;">Find</div>
<svg class="r" style="left:291px;top:52px;" width="15" height="15" viewBox="0 0 15 15"><circle cx="2" cy="2.2" r="1.6" fill="#c8c8c8"/><circle cx="12.6" cy="2.2" r="1.6" fill="#c8c8c8"/><circle cx="7.3" cy="4.8" r="1.6" fill="#c8c8c8"/><path d="M2 2.2L7.3 4.8L12.6 2.2" stroke="#c8c8c8" stroke-width="0.8" fill="none"/><path d="M2.8 10.3Q7.5 5.8 12.6 10.3Q7.5 14.8 2.8 10.3Z" stroke="#c8c8c8" stroke-width="1.1" fill="none"/><circle cx="7.7" cy="10.3" r="1.5" fill="#c8c8c8"/></svg>
<div class="t " style="left:309px;top:53.91px;font-size:9.6px;color:#c0c0c0;font-weight:400;">Hide Unrelated</div>
<svg class="r" style="left:383.5px;top:53.5px;" width="3" height="12" viewBox="0 0 3 12"><circle cx="1.5" cy="1.5" r="1.35" fill="#c0c0c0"/><circle cx="1.5" cy="6" r="1.35" fill="#c0c0c0"/><circle cx="1.5" cy="10.5" r="1.35" fill="#c0c0c0"/></svg>
<svg class="r" style="left:408.5px;top:52.5px;" width="14" height="14" viewBox="0 0 12 12"><rect x="5.1" y="0.2" width="1.8" height="2.6" fill="#c8c8c8" transform="rotate(0 6 6)"/><rect x="5.1" y="0.2" width="1.8" height="2.6" fill="#c8c8c8" transform="rotate(45 6 6)"/><rect x="5.1" y="0.2" width="1.8" height="2.6" fill="#c8c8c8" transform="rotate(90 6 6)"/><rect x="5.1" y="0.2" width="1.8" height="2.6" fill="#c8c8c8" transform="rotate(135 6 6)"/><rect x="5.1" y="0.2" width="1.8" height="2.6" fill="#c8c8c8" transform="rotate(180 6 6)"/><rect x="5.1" y="0.2" width="1.8" height="2.6" fill="#c8c8c8" transform="rotate(225 6 6)"/><rect x="5.1" y="0.2" width="1.8" height="2.6" fill="#c8c8c8" transform="rotate(270 6 6)"/><rect x="5.1" y="0.2" width="1.8" height="2.6" fill="#c8c8c8" transform="rotate(315 6 6)"/><circle cx="6" cy="6" r="3.3" stroke="#c8c8c8" stroke-width="1.6" fill="none"/></svg>
<div class="t " style="left:426.5px;top:53.91px;font-size:9.6px;color:#c0c0c0;font-weight:400;">Class Settings</div>
<div class="r" style="left:500px;top:48.5px;width:92px;height:21.5px;background:#0d6fe0;border-radius:4px;"></div>
<svg class="r" style="left:506px;top:52.5px;" width="14" height="14" viewBox="0 0 14 14"><path d="M3.5 8.2L9.8 1.2l2.3 2-6.3 7-3 1z" fill="#fff"/><path d="M0.5 7h2.5M0.5 9.3h2M0.5 11.6h3.5M6.5 13h7" stroke="#fff" stroke-width="1"/></svg>
<div class="t " style="left:523.5px;top:53.91px;font-size:9.6px;color:#ffffff;font-weight:400;">Class Defaults</div>
<svg class="r" style="left:603px;top:52px;" width="16" height="15" viewBox="0 0 16 15"><path d="M1 0.8L11.5 7L1 13.2z" fill="#a8a8a8"/><rect x="6.2" y="8.2" width="9.3" height="5.8" rx="2.6" fill="#242424"/><rect x="7.2" y="9.1" width="7.4" height="4.1" rx="2" stroke="#c8c8c8" stroke-width="0.9" fill="none"/><circle cx="9.4" cy="11.1" r="0.7" fill="#c8c8c8"/><circle cx="12.4" cy="11.1" r="0.7" fill="#c8c8c8"/></svg>
<div class="t " style="left:622px;top:53.91px;font-size:9.6px;color:#c0c0c0;font-weight:400;">Simulation</div>
<div class="r" style="left:691px;top:48.5px;width:105.5px;height:21.5px;background:#2f2f2f;border-radius:4px;"></div>
<svg class="r" style="left:698px;top:53px;" width="13" height="13" viewBox="0 0 13 13"><path d="M0.5 0.5L12 6.5L0.5 12.5z" fill="#7fc241"/></svg>
<svg class="r" style="left:720px;top:53.5px;" width="13" height="12" viewBox="0 0 13 12"><rect x="0" y="0.3" width="1.8" height="11.4" fill="#7a7a7a"/><path d="M3.6 0.3L12 6L3.6 11.7z" fill="#7a7a7a"/></svg>
<div class="r" style="left:741px;top:54px;width:11px;height:11px;background:#7a7a7a;"></div>
<svg class="r" style="left:761px;top:53.5px;" width="13" height="12" viewBox="0 0 13 12"><path d="M6.5 0.5L12.2 7.2H0.8z" fill="#7a7a7a"/><rect x="0.8" y="9" width="11.4" height="2.4" fill="#7a7a7a"/></svg>
<svg class="r" style="left:787.0px;top:53.5px;" width="3" height="12" viewBox="0 0 3 12"><circle cx="1.5" cy="1.5" r="1.35" fill="#c0c0c0"/><circle cx="1.5" cy="6" r="1.35" fill="#c0c0c0"/><circle cx="1.5" cy="10.5" r="1.35" fill="#c0c0c0"/></svg>
<div class="r" style="left:819px;top:48.5px;width:134px;height:21.5px;background:#0f0f0f;border-radius:4px;border:1px solid #383838;box-sizing:border-box;"></div>
<div class="t " style="left:825.5px;top:53.91px;font-size:9.6px;color:#d0d0d0;font-weight:400;">No debug object selected</div>
<svg class="r" style="left:937px;top:57.0px;" width="7" height="5" viewBox="0 0 7 5"><path d="M0.7 0.8L3.5 4L6.3 0.8" stroke="#d0d0d0" stroke-width="1.4" fill="none"/></svg>
<svg class="r" style="left:959px;top:52.5px;" width="14" height="13.066666666666666" viewBox="0 0 15 14"><path d="M0.5 1.5h4.2l1.3 1.5h5v3.2a4 4 0 0 0-3.5 5.8H0.5z" fill="#5a5a5a"/><circle cx="10.6" cy="9.3" r="2.6" stroke="#5a5a5a" stroke-width="1.2" fill="none"/><path d="M8.8 11.2L6.8 13.4" stroke="#5a5a5a" stroke-width="1.4" stroke-linecap="round"/></svg>
<div class="r" style="left:0px;top:75px;width:1920px;height:22px;background:#151515;"></div>
<div class="r" style="left:4px;top:78px;width:119px;height:22px;background:#242424;border-radius:4px 4px 0 0;"></div>
<svg class="r" style="left:7.5px;top:80.3px;" width="11" height="12" viewBox="0 0 11 12"><path d="M0 0.2H6.6V3.4H5.4A2.7 2.7 0 1 0 5.4 8.6H6.6V11.8H0Z" fill="#b4b4b4"/><rect x="4.6" y="5" width="3.6" height="2" fill="#b4b4b4"/><rect x="7.9" y="0.8" width="2.7" height="10.4" fill="#b4b4b4"/></svg>
<div class="t " style="left:23.5px;top:81.71px;font-size:9.6px;color:#d0d0d0;font-weight:400;">Components</div>
<svg class="r" style="left:106.5px;top:83.9px;" width="6" height="6" viewBox="0 0 6 6"><path d="M0.7 0.7L5.3 5.3M5.3 0.7L0.7 5.3" stroke="#c0c0c0" stroke-width="1.4"/></svg>
<svg class="r" style="left:270.2px;top:82.2px;" width="11.4" height="9" viewBox="0 0 11.4 9"><rect x="0" y="0" width="5.1" height="3.9" fill="#6e6e6e"/><rect x="6.1" y="0" width="5.1" height="3.9" fill="#dcdcdc"/><rect x="0" y="4.9" width="5.1" height="3.9" fill="#6e6e6e"/><rect x="6.1" y="4.9" width="5.1" height="3.9" fill="#6e6e6e"/></svg>
<div class="t " style="left:286.5px;top:81.91px;font-size:9.6px;color:#c0c0c0;font-weight:400;">Viewport</div>
<div class="t" style="left:393.5px;top:80.34px;font-size:11px;color:#c0c0c0;font-family:'Liberation Serif',serif;font-style:italic;">&#402;</div>
<div class="t " style="left:408.5px;top:81.91px;font-size:9.6px;color:#c0c0c0;font-weight:400;">Construction Scr...</div>
<div class="t" style="left:515px;top:80.34px;font-size:11px;color:#c0c0c0;font-family:'Liberation Serif',serif;font-style:italic;">&#402;</div>
<div class="t " style="left:530px;top:81.91px;font-size:9.6px;color:#c0c0c0;font-weight:400;">Platform Switch</div>
<svg class="r" style="left:635.5px;top:81.5px;" width="12" height="11" viewBox="0 0 12 11"><rect x="0" y="0.5" width="4" height="3.4" fill="#c0c0c0"/><rect x="0" y="6.6" width="4" height="3.4" fill="#c0c0c0"/><rect x="8" y="2" width="3.4" height="3" fill="#c0c0c0"/><rect x="8.2" y="7" width="3" height="2.6" fill="#c0c0c0"/><path d="M4 2.2h2.5l1.5 1.3M4 8.3h4.2" stroke="#c0c0c0" stroke-width="0.9" fill="none"/></svg>
<div class="t " style="left:651.5px;top:81.91px;font-size:9.6px;color:#c0c0c0;font-weight:400;">Event Graph</div>
<div class="r" style="left:753px;top:77.5px;width:119px;height:19.5px;background:#242424;border-radius:4px 4px 0 0;border-top:1px solid #2f6fd0;box-sizing:border-box;"></div>
<div class="t" style="left:758.5px;top:80.34px;font-size:11px;color:#e0e0e0;font-family:'Liberation Serif',serif;font-style:italic;">&#402;</div>
<div class="t " style="left:772.5px;top:81.91px;font-size:9.6px;color:#e8e8e8;font-weight:400;">Create Island</div>
<svg class="r" style="left:856px;top:84px;" width="6" height="6" viewBox="0 0 6 6"><path d="M0.7 0.7L5.3 5.3M5.3 0.7L0.7 5.3" stroke="#c0c0c0" stroke-width="1.4"/></svg>
<div class="r" style="left:0px;top:97px;width:266px;height:958px;background:#151515;"></div>
<div class="r" style="left:4px;top:97px;width:258.8px;height:22.5px;background:#242424;"></div>
<div class="r" style="left:7px;top:98px;width:50px;height:17px;background:#383838;border-radius:3px;box-shadow:0 0 0 1px #1c1c1c;"></div>
<svg class="r" style="left:17px;top:101.5px;" width="10" height="10" viewBox="0 0 10 10"><path d="M5 0.3V9.7M0.3 5H9.7" stroke="#7fc241" stroke-width="1.3"/></svg>
<div class="t " style="left:30.5px;top:101.51px;font-size:9.6px;color:#e0e0e0;font-weight:400;">Add</div>
<div class="r" style="left:67px;top:99px;width:191px;height:15.5px;background:#0d0d0d;border-radius:8px;border:1px solid #353535;box-sizing:border-box;"></div>
<svg class="r" style="left:70.5px;top:101.5px;" width="11" height="11" viewBox="0 0 12 12"><circle cx="5" cy="5" r="3.8" stroke="#d0d0d0" stroke-width="1.3" fill="none"/><path d="M7.8 7.8L11 11" stroke="#d0d0d0" stroke-width="1.6" stroke-linecap="round"/></svg>
<div class="t " style="left:87.5px;top:101.57px;font-size:9.3px;color:#4c4c4c;font-weight:400;">Search</div>
<div class="r" style="left:4px;top:119.5px;width:258.8px;height:128px;background:#1a1a1a;"></div>
<div class="r" style="left:6px;top:124px;width:254px;height:17.7px;background:#40576f;"></div>
<svg class="r" style="left:8.5px;top:126px;" width="13" height="13" viewBox="0 0 13 13"><circle cx="6.5" cy="5" r="4.2" fill="#d8d8d8"/><circle cx="7.6" cy="4" r="1.6" fill="#ffffff"/><path d="M0.6 12.4h11.8l-1.5-2.6H2.1z" fill="#d0d0d0"/></svg>
<div class="t " style="left:25.5px;top:127.71px;font-size:9.6px;color:#ffffff;font-weight:400;">BP_IslandGen (Self)</div>
<div class="r" style="left:6px;top:142.7px;width:254px;height:16.7px;background:#1f1f1f;"></div>
<svg class="r" style="left:28px;top:144.5px;" width="14" height="12" viewBox="0 0 14 12"><path d="M0 8.4h9M3 7.5L4.5 1.5L6 7.5zM6.5 7.5l1.2-3.8l1.2 3.8z" fill="#a0a0a0" stroke="#a0a0a0" stroke-width="0.6"/><path d="M8.6 8.2v3.3h1.8M11.4 8.2v3.3M12.9 8.2v3.3M11.4 9.8h1.5" stroke="#c0c0c0" stroke-width="0.8" fill="none"/></svg>
<div class="t" style="left:45px;top:145.71px;font-size:9.6px;color:#d0d0d0;width:215px;overflow:hidden;">Dynamic Mesh Component (DynamicMeshComponent)</div>
<div class="r" style="left:4px;top:253px;width:119px;height:22px;background:#242424;border-radius:4px 4px 0 0;"></div>
<svg class="r" style="left:7px;top:256px;" width="11" height="10" viewBox="0 0 11 10"><path d="M0.5 1.5L2.5 0.6V8L0.5 9z" fill="#8a8a8a"/><path d="M3.2 0.5h3.1V8H3.2zM7 0.5h2l1.5 7.5H7z" fill="#d0d0d0"/><path d="M0.3 9.5h10.4" stroke="#d0d0d0" stroke-width="0.8"/></svg>
<div class="t " style="left:23.5px;top:256.71px;font-size:9.6px;color:#d0d0d0;font-weight:400;">My Blueprint</div>
<svg class="r" style="left:106.5px;top:258.9px;" width="6" height="6" viewBox="0 0 6 6"><path d="M0.7 0.7L5.3 5.3M5.3 0.7L0.7 5.3" stroke="#c0c0c0" stroke-width="1.4"/></svg>
<div class="r" style="left:4px;top:272.5px;width:258.8px;height:24px;background:#242424;"></div>
<div class="r" style="left:7px;top:275px;width:50px;height:17px;background:#383838;border-radius:3px;box-shadow:0 0 0 1px #1c1c1c;"></div>
<svg class="r" style="left:17px;top:278.5px;" width="10" height="10" viewBox="0 0 10 10"><path d="M5 0.3V9.7M0.3 5H9.7" stroke="#7fc241" stroke-width="1.3"/></svg>
<div class="t " style="left:30.5px;top:278.51px;font-size:9.6px;color:#e0e0e0;font-weight:400;">Add</div>
<div class="r" style="left:62px;top:275.5px;width:177px;height:15.5px;background:#0d0d0d;border-radius:8px;border:1px solid #353535;box-sizing:border-box;"></div>
<svg class="r" style="left:65.5px;top:278.0px;" width="11" height="11" viewBox="0 0 12 12"><circle cx="5" cy="5" r="3.8" stroke="#d0d0d0" stroke-width="1.3" fill="none"/><path d="M7.8 7.8L11 11" stroke="#d0d0d0" stroke-width="1.6" stroke-linecap="round"/></svg>
<div class="t " style="left:82.5px;top:278.07px;font-size:9.3px;color:#4c4c4c;font-weight:400;">Search</div>
<svg class="r" style="left:245.25px;top:278.55px;" width="10.5" height="10.5" viewBox="0 0 12 12"><rect x="5.1" y="0.2" width="1.8" height="2.6" fill="#b0b0b0" transform="rotate(0 6 6)"/><rect x="5.1" y="0.2" width="1.8" height="2.6" fill="#b0b0b0" transform="rotate(45 6 6)"/><rect x="5.1" y="0.2" width="1.8" height="2.6" fill="#b0b0b0" transform="rotate(90 6 6)"/><rect x="5.1" y="0.2" width="1.8" height="2.6" fill="#b0b0b0" transform="rotate(135 6 6)"/><rect x="5.1" y="0.2" width="1.8" height="2.6" fill="#b0b0b0" transform="rotate(180 6 6)"/><rect x="5.1" y="0.2" width="1.8" height="2.6" fill="#b0b0b0" transform="rotate(225 6 6)"/><rect x="5.1" y="0.2" width="1.8" height="2.6" fill="#b0b0b0" transform="rotate(270 6 6)"/><rect x="5.1" y="0.2" width="1.8" height="2.6" fill="#b0b0b0" transform="rotate(315 6 6)"/><circle cx="6" cy="6" r="3.3" stroke="#b0b0b0" stroke-width="1.6" fill="none"/></svg>
<div class="r" style="left:4px;top:296.5px;width:258.8px;height:198px;background:#1a1a1a;"></div>
<div class="r" style="left:3px;top:299.5px;width:248px;height:20.5px;background:#2f2f2f;"></div>
<svg class="r" style="left:7.5px;top:308.25px;" width="8" height="5" viewBox="0 0 8 5"><path d="M0 0H8L4 5Z" fill="#8a8a8a"/></svg>
<div class="t " style="left:17.5px;top:305.62px;font-size:7.8px;color:#d8d8d8;font-weight:400;letter-spacing:-0.1px;"><b style="font-weight:700;color:#d8d8d8">GRAPHS</b></div>
<svg class="r" style="left:232.5px;top:304.05px;" width="12" height="12" viewBox="0 0 12 12"><circle cx="6" cy="6" r="5" stroke="#c8c8c8" stroke-width="1.1" fill="none"/><path d="M6 3.3V8.7M3.3 6H8.7" stroke="#c8c8c8" stroke-width="1.2"/></svg>
<svg class="r" style="left:7.5px;top:325.5px;" width="5" height="8" viewBox="0 0 5 8"><path d="M0 0V8L5 4Z" fill="#8a8a8a"/></svg>
<svg class="r" style="left:17.5px;top:324.5px;" width="11" height="10" viewBox="0 0 11 10"><rect x="0" y="0.3" width="4" height="3.6" fill="#d0d0d0"/><rect x="0.3" y="6.2" width="3.4" height="3" fill="#d0d0d0"/><rect x="6.5" y="1" width="3" height="2.6" fill="#d0d0d0"/><rect x="7.4" y="6.4" width="2.6" height="2.4" fill="#d0d0d0"/><path d="M4 2.2h2.5M3.7 7.6h3.7" stroke="#d0d0d0" stroke-width="0.8"/></svg>
<div class="t " style="left:31.5px;top:324.81px;font-size:9.8px;color:#d8d8d8;font-weight:400;">EventGraph</div>
<div class="r" style="left:3px;top:341.5px;width:248px;height:23px;background:#2f2f2f;"></div>
<svg class="r" style="left:7.5px;top:351.5px;" width="8" height="5" viewBox="0 0 8 5"><path d="M0 0H8L4 5Z" fill="#8a8a8a"/></svg>
<div class="t " style="left:17.5px;top:348.87px;font-size:7.8px;color:#d8d8d8;font-weight:400;letter-spacing:-0.1px;"><b style="font-weight:700;color:#d8d8d8">FUNCTIONS</b> <span style="color:#8a8a8a;font-weight:400">(21 OVERRIDABLE)</span></div>
<svg class="r" style="left:232.5px;top:347.3px;" width="12" height="12" viewBox="0 0 12 12"><circle cx="6" cy="6" r="5" stroke="#c8c8c8" stroke-width="1.1" fill="none"/><path d="M6 3.3V8.7M3.3 6H8.7" stroke="#c8c8c8" stroke-width="1.2"/></svg>
<svg class="r" style="left:16.5px;top:367.5px;" width="12" height="9" viewBox="0 0 12 9"><path d="M1.2 5.5A4 4 0 0 1 7.2 2" stroke="#9a9a9a" stroke-width="1" fill="none"/><path d="M5.8 0.3L8.6 2L6 3.8z" fill="#9a9a9a"/></svg>
<div class="t" style="left:20.5px;top:368.84px;font-size:11px;color:#b0b0b0;font-family:'Liberation Serif',serif;font-style:italic;">&#402;</div>
<div class="t " style="left:31.5px;top:369.11px;font-size:9.8px;color:#d8d8d8;font-weight:400;">ConstructionScript</div>
<div class="t" style="left:19.5px;top:386.84px;font-size:11px;color:#d8d8d8;font-family:'Liberation Serif',serif;font-style:italic;">&#402;</div>
<div class="t " style="left:31.5px;top:387.61px;font-size:9.8px;color:#d8d8d8;font-weight:400;">Create Island</div>
<div class="t" style="left:19.5px;top:406.14px;font-size:11px;color:#d8d8d8;font-family:'Liberation Serif',serif;font-style:italic;">&#402;</div>
<div class="t " style="left:31.5px;top:407.11px;font-size:9.8px;color:#d8d8d8;font-weight:400;">Platform Switch</div>
<div class="r" style="left:3px;top:422.5px;width:248px;height:20.5px;background:#2f2f2f;"></div>
<div class="t " style="left:17.5px;top:428.62px;font-size:7.8px;color:#d8d8d8;font-weight:400;letter-spacing:-0.1px;"><b style="font-weight:700;color:#d8d8d8">MACROS</b></div>
<svg class="r" style="left:232.5px;top:427.05px;" width="12" height="12" viewBox="0 0 12 12"><circle cx="6" cy="6" r="5" stroke="#c8c8c8" stroke-width="1.1" fill="none"/><path d="M6 3.3V8.7M3.3 6H8.7" stroke="#c8c8c8" stroke-width="1.2"/></svg>
<div class="r" style="left:3px;top:445px;width:248px;height:20.5px;background:#2f2f2f;"></div>
<svg class="r" style="left:7.5px;top:453.75px;" width="8" height="5" viewBox="0 0 8 5"><path d="M0 0H8L4 5Z" fill="#8a8a8a"/></svg>
<div class="t " style="left:17.5px;top:451.12px;font-size:7.8px;color:#d8d8d8;font-weight:400;letter-spacing:-0.1px;"><b style="font-weight:700;color:#d8d8d8">VARIABLES</b></div>
<svg class="r" style="left:232.5px;top:449.55px;" width="12" height="12" viewBox="0 0 12 12"><circle cx="6" cy="6" r="5" stroke="#c8c8c8" stroke-width="1.1" fill="none"/><path d="M6 3.3V8.7M3.3 6H8.7" stroke="#c8c8c8" stroke-width="1.2"/></svg>
<div class="t " style="left:17.5px;top:470.71px;font-size:9.6px;color:#d0d0d0;font-weight:400;">Seed</div>
<div class="r" style="left:148.5px;top:474px;width:9px;height:4.6px;background:#0a6ff0;border-radius:2px;"></div>
<div class="t " style="left:162.5px;top:470.71px;font-size:9.6px;color:#d0d0d0;font-weight:400;">Random Stream</div>
<svg class="r" style="left:236.5px;top:471.5px;" width="12" height="9" viewBox="0 0 12 9"><path d="M0.5 4.5Q6 -1.3 11.5 4.5Q6 10.3 0.5 4.5Z" stroke="#f0f0f0" stroke-width="1.1" fill="none"/><circle cx="6" cy="4.5" r="2.2" fill="#f0f0f0"/></svg>
<div class="r" style="left:4px;top:487px;width:247px;height:7.5px;overflow:hidden;"><div class="t" style="left:13.5px;top:2.5px;font-size:9.6px;color:#9a9a9a">Max Spawn Distance</div><div class="r" style="left:144.5px;top:6px;width:9px;height:4px;background:#3a9a20;border-radius:2px;"></div><div class="t" style="left:158.5px;top:2.5px;font-size:9.6px;color:#9a9a9a">Float</div></div>
<div class="r" style="left:254.5px;top:300px;width:5px;height:112.5px;background:#5a5a5a;border-radius:2.5px;"></div>
<div class="r" style="left:4px;top:498px;width:119px;height:22px;background:#242424;border-radius:4px 4px 0 0;"></div>
<svg class="r" style="left:6.5px;top:501px;" width="12" height="11" viewBox="0 0 12 11"><path d="M3 7L8.6 0.8l2 1.8L5 8.8l-2.6 0.9z" fill="#c0c0c0"/><path d="M0.4 6.2h2M0.4 8.2h1.6M0.4 10.2h3M5.5 10.4h6" stroke="#c0c0c0" stroke-width="0.8"/></svg>
<div class="t " style="left:23.5px;top:501.71px;font-size:9.6px;color:#d0d0d0;font-weight:400;">Details</div>
<svg class="r" style="left:106.5px;top:503.9px;" width="6" height="6" viewBox="0 0 6 6"><path d="M0.7 0.7L5.3 5.3M5.3 0.7L0.7 5.3" stroke="#c0c0c0" stroke-width="1.4"/></svg>
<div class="r" style="left:3px;top:517.5px;width:259.8px;height:537.5px;background:#242424;"></div>
<div class="r" style="left:3px;top:545px;width:248px;height:510px;background:#161616;"></div>
<div class="r" style="left:9.5px;top:522px;width:211px;height:15.5px;background:#0d0d0d;border-radius:8px;border:1px solid #353535;box-sizing:border-box;"></div>
<svg class="r" style="left:13px;top:524.25px;" width="11.5" height="11.5" viewBox="0 0 12 12"><circle cx="5" cy="5" r="3.8" stroke="#e0e0e0" stroke-width="1.3" fill="none"/><path d="M7.8 7.8L11 11" stroke="#e0e0e0" stroke-width="1.6" stroke-linecap="round"/></svg>
<div class="t " style="left:30.5px;top:524.57px;font-size:9.3px;color:#4c4c4c;font-weight:400;">Search</div>
<svg class="r" style="left:230px;top:524.5px;" width="11" height="11" viewBox="0 0 11 11"><rect x="0.5" y="0.5" width="10" height="10" stroke="#e0e0e0" stroke-width="1" fill="none"/><rect x="0.5" y="0.5" width="10" height="2.6" fill="#e0e0e0"/><path d="M0.5 5.8h10M0.5 8.2h10M4 3v7.5M7.4 3v7.5" stroke="#e0e0e0" stroke-width="0.8"/></svg>
<svg class="r" style="left:247.5px;top:524.0px;" width="12" height="12" viewBox="0 0 12 12"><rect x="5.1" y="0.2" width="1.8" height="2.6" fill="#d0d0d0" transform="rotate(0 6 6)"/><rect x="5.1" y="0.2" width="1.8" height="2.6" fill="#d0d0d0" transform="rotate(45 6 6)"/><rect x="5.1" y="0.2" width="1.8" height="2.6" fill="#d0d0d0" transform="rotate(90 6 6)"/><rect x="5.1" y="0.2" width="1.8" height="2.6" fill="#d0d0d0" transform="rotate(135 6 6)"/><rect x="5.1" y="0.2" width="1.8" height="2.6" fill="#d0d0d0" transform="rotate(180 6 6)"/><rect x="5.1" y="0.2" width="1.8" height="2.6" fill="#d0d0d0" transform="rotate(225 6 6)"/><rect x="5.1" y="0.2" width="1.8" height="2.6" fill="#d0d0d0" transform="rotate(270 6 6)"/><rect x="5.1" y="0.2" width="1.8" height="2.6" fill="#d0d0d0" transform="rotate(315 6 6)"/><circle cx="6" cy="6" r="3.3" stroke="#d0d0d0" stroke-width="1.6" fill="none"/></svg>
<div class="r" style="left:3px;top:545.5px;width:248px;height:18.5px;background:#2f2f2f;"></div>
<svg class="r" style="left:6.5px;top:553.25px;" width="8" height="5" viewBox="0 0 8 5"><path d="M0 0H8L4 5Z" fill="#8a8a8a"/></svg>
<div class="t " style="left:19.5px;top:551.50px;font-size:8.2px;color:#e0e0e0;font-weight:700;letter-spacing:-0.15px;">Transform</div>
<div class="r" style="left:3px;top:565px;width:248px;height:20.5px;background:#242424;"></div>
<div class="t " style="left:19.5px;top:570.54px;font-size:8.5px;color:#c8c8c8;font-weight:400;"></div>
<div class="r" style="left:140.5px;top:565px;width:1px;height:20.5px;background:#1b1b1b;"></div>
<div class="r" style="left:233px;top:565px;width:1px;height:20.5px;background:#1b1b1b;"></div>
<div class="r" style="left:20px;top:567.5px;width:63.5px;height:14.5px;background:#0f0f0f;border-radius:3px;border:1px solid #343434;box-sizing:border-box;"></div>
<div class="t " style="left:25.5px;top:569.84px;font-size:8.8px;color:#d8d8d8;font-weight:400;">Scale</div>
<svg class="r" style="left:67px;top:572.5px;" width="7.5" height="5" viewBox="0 0 7.5 5"><path d="M0.7 0.8L3.75 4L6.8 0.8" stroke="#d0d0d0" stroke-width="1.4" fill="none"/></svg>
<svg class="r" style="left:89.5px;top:568.5px;" width="12" height="12" viewBox="0 0 12 12"><rect x="0.5" y="5.4" width="8" height="6" rx="0.8" fill="#c8c8c8"/><path d="M6.4 5.4V3.2a2.2 2.2 0 0 1 4.4 0V4.6" stroke="#c8c8c8" stroke-width="1.3" fill="none"/><rect x="3.8" y="7.4" width="1.4" height="2.2" fill="#242424"/></svg>
<div class="r" style="left:150px;top:567.5px;width:26px;height:14.5px;background:#0f0f0f;border-radius:3px;border:1px solid #343434;box-sizing:border-box;"></div>
<div class="r" style="left:151.5px;top:569px;width:1.6px;height:11.5px;background:#c0281c;border-radius:1px;"></div>
<div class="t " style="left:156.5px;top:570.04px;font-size:8.8px;color:#e0e0e0;font-weight:400;">1.0</div>
<div class="r" style="left:177.5px;top:567.5px;width:26px;height:14.5px;background:#0f0f0f;border-radius:3px;border:1px solid #343434;box-sizing:border-box;"></div>
<div class="r" style="left:179.0px;top:569px;width:1.6px;height:11.5px;background:#7cb62c;border-radius:1px;"></div>
<div class="t " style="left:184.0px;top:570.04px;font-size:8.8px;color:#e0e0e0;font-weight:400;">1.0</div>
<div class="r" style="left:205px;top:567.5px;width:26px;height:14.5px;background:#0f0f0f;border-radius:3px;border:1px solid #343434;box-sizing:border-box;"></div>
<div class="r" style="left:206.5px;top:569px;width:1.6px;height:11.5px;background:#1f6fe0;border-radius:1px;"></div>
<div class="t " style="left:211.5px;top:570.04px;font-size:8.8px;color:#e0e0e0;font-weight:400;">1.0</div>
<div class="r" style="left:3px;top:586.5px;width:248px;height:18.0px;background:#2f2f2f;"></div>
<svg class="r" style="left:6.5px;top:594.0px;" width="8" height="5" viewBox="0 0 8 5"><path d="M0 0H8L4 5Z" fill="#8a8a8a"/></svg>
<div class="t " style="left:19.5px;top:592.25px;font-size:8.2px;color:#e0e0e0;font-weight:700;letter-spacing:-0.15px;">Materials</div>
<div class="r" style="left:3px;top:605.5px;width:248px;height:43.0px;background:#242424;"></div>
<div class="t " style="left:19.5px;top:622.29px;font-size:8.5px;color:#c8c8c8;font-weight:400;"></div>
<div class="r" style="left:140.5px;top:605.5px;width:1px;height:43.0px;background:#1b1b1b;"></div>
<div class="r" style="left:233px;top:605.5px;width:1px;height:43.0px;background:#1b1b1b;"></div>
<div class="t " style="left:19.5px;top:619.70px;font-size:8.5px;color:#c8c8c8;font-weight:400;">Element 0</div>
<div class="r" style="left:150px;top:610px;width:36px;height:36px;background:#0a0a0a;border-radius:2px;"></div>
<div class="r" style="left:150px;top:644.5px;width:36px;height:1.8px;background:#44b43c;"></div>
<div class="r" style="left:152.5px;top:611.5px;width:31.5px;height:31.5px;background:radial-gradient(circle at 42% 38%, #4fa84a 0%, #44993f 55%, #2f7a2e 85%, #256426 100%);border-radius:50%;"></div>
<div class="r" style="left:194.5px;top:610px;width:39px;height:14px;background:#0f0f0f;border-radius:3px 0 0 3px;overflow:hidden;"><div class="t" style="left:5px;top:2.4px;font-size:8.8px;color:#d8d8d8">M_Landscape</div></div>
<svg class="r" style="left:197px;top:629.5px;" width="12" height="12" viewBox="0 0 12 12"><path d="M9.6 2.4A5 5 0 1 0 9.6 9.6" stroke="#d0d0d0" stroke-width="1.3" fill="none"/><path d="M11.5 6H5.5M7.8 3.5L5 6L7.8 8.5" stroke="#d0d0d0" stroke-width="1.5" fill="none"/></svg>
<svg class="r" style="left:216px;top:629px;" width="13.5" height="12.6" viewBox="0 0 15 14"><path d="M0.5 1.5h4.2l1.3 1.5h5v3.2a4 4 0 0 0-3.5 5.8H0.5z" fill="#d0d0d0"/><circle cx="10.6" cy="9.3" r="2.6" stroke="#d0d0d0" stroke-width="1.2" fill="none"/><path d="M8.8 11.2L6.8 13.4" stroke="#d0d0d0" stroke-width="1.4" stroke-linecap="round"/></svg>
<svg class="r" style="left:237px;top:620.5px;" width="10" height="9" viewBox="0 0 10 9"><path d="M1 3.6h5a2.6 2.6 0 0 1 0 5.2H4.5" stroke="#c0c0c0" stroke-width="1.2" fill="none"/><path d="M3.4 0.8L0.6 3.6L3.4 6.4" stroke="#c0c0c0" stroke-width="1.2" fill="none"/></svg>
<div class="r" style="left:3px;top:649.5px;width:248px;height:19.0px;background:#2f2f2f;"></div>
<svg class="r" style="left:6.5px;top:657.5px;" width="8" height="5" viewBox="0 0 8 5"><path d="M0 0H8L4 5Z" fill="#8a8a8a"/></svg>
<div class="t " style="left:19.5px;top:655.75px;font-size:8.2px;color:#e0e0e0;font-weight:700;letter-spacing:-0.15px;">Default</div>
<div class="r" style="left:3px;top:669.5px;width:248px;height:19.5px;background:#242424;"></div>
<svg class="r" style="left:6.5px;top:677.75px;" width="8" height="5" viewBox="0 0 8 5"><path d="M0 0H8L4 5Z" fill="#8a8a8a"/></svg>
<div class="t " style="left:19.5px;top:674.54px;font-size:8.5px;color:#c8c8c8;font-weight:400;">Seed</div>
<div class="r" style="left:140.5px;top:669.5px;width:1px;height:19.5px;background:#1b1b1b;"></div>
<div class="r" style="left:233px;top:669.5px;width:1px;height:19.5px;background:#1b1b1b;"></div>
<div class="r" style="left:3px;top:690px;width:248px;height:19.5px;background:#242424;"></div>
<div class="t " style="left:31.5px;top:695.04px;font-size:8.5px;color:#c8c8c8;font-weight:400;">Initial Seed</div>
<div class="r" style="left:140.5px;top:690px;width:1px;height:19.5px;background:#1b1b1b;"></div>
<div class="r" style="left:233px;top:690px;width:1px;height:19.5px;background:#1b1b1b;"></div>
<div class="r" style="left:3px;top:690px;width:11px;height:19.5px;background:#1f1f1f;"></div>
<div class="r" style="left:13.5px;top:690px;width:1px;height:19.5px;background:#383838;"></div>
<div class="r" style="left:150px;top:692.55px;width:81px;height:14.5px;background:#0f0f0f;border-radius:3px;border:1px solid #343434;box-sizing:border-box;"></div>
<div class="t " style="left:157px;top:695.34px;font-size:8.8px;color:#e0e0e0;font-weight:400;">0</div>
<div class="r" style="left:3px;top:710.5px;width:248px;height:19.0px;background:#242424;"></div>
<div class="t " style="left:19.5px;top:715.29px;font-size:8.5px;color:#c8c8c8;font-weight:400;">Max Spawn Distance</div>
<div class="r" style="left:140.5px;top:710.5px;width:1px;height:19.0px;background:#1b1b1b;"></div>
<div class="r" style="left:233px;top:710.5px;width:1px;height:19.0px;background:#1b1b1b;"></div>
<div class="r" style="left:150px;top:712.75px;width:81px;height:14.5px;background:#0f0f0f;border-radius:3px;border:1px solid #343434;box-sizing:border-box;"></div>
<div class="t " style="left:157px;top:715.54px;font-size:8.8px;color:#e0e0e0;font-weight:400;">0.0</div>
<div class="r" style="left:3px;top:730.5px;width:248px;height:19.0px;background:#242424;"></div>
<div class="t " style="left:19.5px;top:735.29px;font-size:8.5px;color:#c8c8c8;font-weight:400;">Islands</div>
<div class="r" style="left:140.5px;top:730.5px;width:1px;height:19.0px;background:#1b1b1b;"></div>
<div class="r" style="left:233px;top:730.5px;width:1px;height:19.0px;background:#1b1b1b;"></div>
<div class="r" style="left:150px;top:732.75px;width:81px;height:14.5px;background:#0f0f0f;border-radius:3px;border:1px solid #343434;box-sizing:border-box;"></div>
<div class="t " style="left:157px;top:735.54px;font-size:8.8px;color:#e0e0e0;font-weight:400;">15</div>
<div class="r" style="left:3px;top:750.5px;width:248px;height:43.0px;background:#242424;"></div>
<div class="t " style="left:19.5px;top:767.29px;font-size:8.5px;color:#c8c8c8;font-weight:400;">Dyn Mesh</div>
<div class="r" style="left:140.5px;top:750.5px;width:1px;height:43.0px;background:#1b1b1b;"></div>
<div class="r" style="left:233px;top:750.5px;width:1px;height:43.0px;background:#1b1b1b;"></div>
<div class="r" style="left:150px;top:754px;width:36px;height:36px;background:#1e1e1e;border-radius:2px;"></div>
<div class="r" style="left:150px;top:788.5px;width:36px;height:1.6px;background:#e8e8e8;"></div>
<div class="t " style="left:160.5px;top:768.79px;font-size:7px;color:#e8e8e8;font-weight:400;">None</div>
<div class="r" style="left:194.5px;top:754.5px;width:36.5px;height:14.5px;background:#0f0f0f;border-radius:3px;border:1px solid #343434;box-sizing:border-box;"></div>
<div class="r" style="left:199.5px;top:756px;width:11px;height:12px;overflow:hidden;"><div class="t" style="left:0;top:1.2px;font-size:8.8px;color:#d8d8d8">None</div></div>
<svg class="r" style="left:214.5px;top:759.5px;" width="7.5" height="5" viewBox="0 0 7.5 5"><path d="M0.7 0.8L3.75 4L6.8 0.8" stroke="#d8d8d8" stroke-width="1.4" fill="none"/></svg>
<svg class="r" style="left:197px;top:774px;" width="12" height="12" viewBox="0 0 12 12"><path d="M9.6 2.4A5 5 0 1 0 9.6 9.6" stroke="#d0d0d0" stroke-width="1.3" fill="none"/><path d="M11.5 6H5.5M7.8 3.5L5 6L7.8 8.5" stroke="#d0d0d0" stroke-width="1.5" fill="none"/></svg>
<svg class="r" style="left:216px;top:773.5px;" width="13.5" height="12.6" viewBox="0 0 15 14"><path d="M0.5 1.5h4.2l1.3 1.5h5v3.2a4 4 0 0 0-3.5 5.8H0.5z" fill="#d0d0d0"/><circle cx="10.6" cy="9.3" r="2.6" stroke="#d0d0d0" stroke-width="1.2" fill="none"/><path d="M8.8 11.2L6.8 13.4" stroke="#d0d0d0" stroke-width="1.4" stroke-linecap="round"/></svg>
<div class="r" style="left:3px;top:794.5px;width:248px;height:19.0px;background:#242424;"></div>
<div class="t " style="left:19.5px;top:799.29px;font-size:8.5px;color:#c8c8c8;font-weight:400;">Pre- Construct</div>
<div class="r" style="left:140.5px;top:794.5px;width:1px;height:19.0px;background:#1b1b1b;"></div>
<div class="r" style="left:233px;top:794.5px;width:1px;height:19.0px;background:#1b1b1b;"></div>
<div class="r" style="left:150px;top:797.7px;width:12px;height:12px;background:#0f0f0f;border-radius:2.5px;border:1px solid #333;box-sizing:border-box;"></div>
<div class="r" style="left:3px;top:814.5px;width:248px;height:19.5px;background:#242424;"></div>
<div class="t " style="left:19.5px;top:819.54px;font-size:8.5px;color:#c8c8c8;font-weight:400;">Spawn Points</div>
<div class="r" style="left:140.5px;top:814.5px;width:1px;height:19.5px;background:#1b1b1b;"></div>
<div class="r" style="left:233px;top:814.5px;width:1px;height:19.5px;background:#1b1b1b;"></div>
<div class="r" style="left:149.5px;top:818px;width:42px;height:12px;overflow:hidden;"><div class="t" style="left:0;top:1.4px;font-size:8.6px;color:#d0d0d0">0 Array elements</div></div>
<svg class="r" style="left:198px;top:818px;" width="12" height="12" viewBox="0 0 12 12"><circle cx="6" cy="6" r="5" stroke="#d0d0d0" stroke-width="1.1" fill="none"/><path d="M6 3.6V8.4M3.6 6H8.4" stroke="#d0d0d0" stroke-width="1.3"/></svg>
<svg class="r" style="left:218px;top:817.5px;" width="11" height="12.5" viewBox="0 0 11 12.5"><path d="M0.5 2.6h10M3.6 2.4V0.8h3.8v1.6" stroke="#d8d8d8" stroke-width="1.2" fill="none"/><path d="M1.8 4.2h7.4l-0.5 7.6H2.3z" stroke="#d8d8d8" stroke-width="1.2" fill="none"/></svg>
<div class="r" style="left:3px;top:835px;width:248px;height:19px;background:#242424;"></div>
<div class="t " style="left:19.5px;top:839.79px;font-size:8.5px;color:#c8c8c8;font-weight:400;">Radius</div>
<div class="r" style="left:140.5px;top:835px;width:1px;height:19px;background:#1b1b1b;"></div>
<div class="r" style="left:233px;top:835px;width:1px;height:19px;background:#1b1b1b;"></div>
<div class="r" style="left:150px;top:837.05px;width:81px;height:14.5px;background:#0f0f0f;border-radius:3px;border:1px solid #343434;box-sizing:border-box;"></div>
<div class="t " style="left:157px;top:839.84px;font-size:8.8px;color:#e0e0e0;font-weight:400;">0.0</div>
<div class="r" style="left:3px;top:855px;width:248px;height:19px;background:#242424;"></div>
<svg class="r" style="left:8px;top:860.8px;" width="5" height="8" viewBox="0 0 5 8"><path d="M0 0V8L5 4Z" fill="#8a8a8a"/></svg>
<div class="t " style="left:19.5px;top:859.79px;font-size:8.5px;color:#c8c8c8;font-weight:400;">Islands Size</div>
<div class="r" style="left:140.5px;top:855px;width:1px;height:19px;background:#1b1b1b;"></div>
<div class="r" style="left:233px;top:855px;width:1px;height:19px;background:#1b1b1b;"></div>
<div class="r" style="left:150px;top:857.05px;width:38.5px;height:14.5px;background:#0f0f0f;border-radius:3px;border:1px solid #343434;box-sizing:border-box;"></div>
<div class="t " style="left:156px;top:859.84px;font-size:8.8px;color:#e0e0e0;font-weight:400;">800.0</div>
<div class="r" style="left:191.5px;top:857.05px;width:39.5px;height:14.5px;background:#0f0f0f;border-radius:3px;border:1px solid #343434;box-sizing:border-box;"></div>
<div class="t " style="left:197.5px;top:859.84px;font-size:8.8px;color:#e0e0e0;font-weight:400;">5000.0</div>
<div class="r" style="left:3px;top:875px;width:248px;height:19.5px;background:#2f2f2f;"></div>
<svg class="r" style="left:6.5px;top:883.25px;" width="8" height="5" viewBox="0 0 8 5"><path d="M0 0H8L4 5Z" fill="#8a8a8a"/></svg>
<div class="t " style="left:19.5px;top:881.50px;font-size:8.2px;color:#e0e0e0;font-weight:700;letter-spacing:-0.15px;">Actor Tick</div>
<div class="r" style="left:3px;top:895.5px;width:248px;height:19.0px;background:#242424;"></div>
<div class="t " style="left:19.5px;top:900.29px;font-size:8.5px;color:#c8c8c8;font-weight:400;">Start with Tick Enabled</div>
<div class="r" style="left:140.5px;top:895.5px;width:1px;height:19.0px;background:#1b1b1b;"></div>
<div class="r" style="left:233px;top:895.5px;width:1px;height:19.0px;background:#1b1b1b;"></div>
<div class="r" style="left:150px;top:899px;width:12px;height:12px;background:#0f0f0f;border-radius:2.5px;border:1px solid #333;box-sizing:border-box;"></div>
<svg class="r" style="left:152px;top:901px;" width="9" height="8" viewBox="0 0 9 8"><path d="M0.8 4.2L3.2 6.8L8 1" stroke="#1a7cf0" stroke-width="1.7" fill="none"/></svg>
<div class="r" style="left:3px;top:915.5px;width:248px;height:19.5px;background:#242424;"></div>
<div class="t " style="left:19.5px;top:920.54px;font-size:8.5px;color:#c8c8c8;font-weight:400;">Tick Interval (secs)</div>
<div class="r" style="left:140.5px;top:915.5px;width:1px;height:19.5px;background:#1b1b1b;"></div>
<div class="r" style="left:233px;top:915.5px;width:1px;height:19.5px;background:#1b1b1b;"></div>
<div class="r" style="left:150px;top:917.75px;width:81px;height:14.5px;background:#0f0f0f;border-radius:3px;border:1px solid #343434;box-sizing:border-box;"></div>
<div class="t " style="left:157px;top:920.54px;font-size:8.8px;color:#e0e0e0;font-weight:400;">0.0</div>
<div class="r" style="left:3px;top:936px;width:248px;height:19px;background:#242424;"></div>
<div class="t " style="left:19.5px;top:940.79px;font-size:8.5px;color:#c8c8c8;font-weight:400;">Allow Tick Before Begin Play</div>
<div class="r" style="left:140.5px;top:936px;width:1px;height:19px;background:#1b1b1b;"></div>
<div class="r" style="left:233px;top:936px;width:1px;height:19px;background:#1b1b1b;"></div>
<div class="r" style="left:150px;top:939.3px;width:12px;height:12px;background:#0f0f0f;border-radius:2.5px;border:1px solid #333;box-sizing:border-box;"></div>
<div class="r" style="left:3px;top:956px;width:248px;height:20px;background:#242424;"></div>
<svg class="r" style="left:8px;top:962.3px;" width="5" height="8" viewBox="0 0 5 8"><path d="M0 0V8L5 4Z" fill="#8a8a8a"/></svg>
<div class="t " style="left:19.5px;top:961.29px;font-size:8.5px;color:#c8c8c8;font-weight:400;">Advanced</div>
<div class="r" style="left:3px;top:977px;width:248px;height:19px;background:#2f2f2f;"></div>
<svg class="r" style="left:6.5px;top:985.0px;" width="8" height="5" viewBox="0 0 8 5"><path d="M0 0H8L4 5Z" fill="#8a8a8a"/></svg>
<div class="t " style="left:19.5px;top:983.25px;font-size:8.2px;color:#e0e0e0;font-weight:700;letter-spacing:-0.15px;">Dynamic Mesh Component</div>
<div class="r" style="left:3px;top:997px;width:248px;height:19.5px;background:#242424;"></div>
<svg class="r" style="left:8px;top:1003.05px;" width="5" height="8" viewBox="0 0 5 8"><path d="M0 0V8L5 4Z" fill="#8a8a8a"/></svg>
<div class="t " style="left:19.5px;top:1002.04px;font-size:8.5px;color:#c8c8c8;font-weight:400;">Collision</div>
<div class="r" style="left:3px;top:1017.5px;width:248px;height:19.0px;background:#242424;"></div>
<svg class="r" style="left:8px;top:1023.3px;" width="5" height="8" viewBox="0 0 5 8"><path d="M0 0V8L5 4Z" fill="#8a8a8a"/></svg>
<div class="t " style="left:19.5px;top:1022.29px;font-size:8.5px;color:#c8c8c8;font-weight:400;">Rendering</div>
<div class="r" style="left:3px;top:1037.5px;width:248px;height:17.5px;background:#2f2f2f;"></div>
<svg class="r" style="left:6.5px;top:1044.75px;" width="8" height="5" viewBox="0 0 8 5"><path d="M0 0H8L4 5Z" fill="#8a8a8a"/></svg>
<div class="t " style="left:19.5px;top:1043.00px;font-size:8.2px;color:#e0e0e0;font-weight:700;letter-spacing:-0.15px;">Component Tick</div>
<div class="r" style="left:254.5px;top:546px;width:5px;height:107px;background:#5a5a5a;border-radius:2.5px;"></div>
<div class="r" style="left:0px;top:1055px;width:1920px;height:25px;background:#151515;"></div>
<div class="r" style="left:0px;top:1056.5px;width:97.5px;height:23.5px;background:#242424;"></div>
<div class="r" style="left:99.5px;top:1056.5px;width:77px;height:23.5px;background:#242424;"></div>
<div class="r" style="left:178.5px;top:1056.5px;width:1559px;height:23.5px;background:#242424;"></div>
<div class="r" style="left:1739.5px;top:1056.5px;width:180.5px;height:23.5px;background:#242424;"></div>
<svg class="r" style="left:7.5px;top:1063px;" width="13" height="11" viewBox="0 0 13 11"><path d="M0.4 0.8h3.6l1 1.2h4.4v2.4a3.6 3.6 0 0 0-3 5.6H0.4z" fill="#c0c0c0"/><circle cx="9" cy="7" r="2.4" stroke="#c0c0c0" stroke-width="1" fill="none"/><path d="M6 9.8l1.6-1.6" stroke="#c0c0c0" stroke-width="1"/></svg>
<div class="t " style="left:23.5px;top:1064.21px;font-size:9.6px;color:#c0c0c0;font-weight:400;">Content Drawer</div>
<svg class="r" style="left:108.5px;top:1062.5px;" width="10" height="12" viewBox="0 0 10 12"><path d="M0.5 1.6h1.5V0.4h1.5v1.2h1.6V0.4h1.5v1.2h1.6V0.4h1.3v11.2h-9z" fill="#c0c0c0"/><path d="M2.4 5.2L4.2 7L2.4 8.8M5.2 9h2.6" stroke="#242424" stroke-width="1" fill="none"/></svg>
<div class="t " style="left:122.5px;top:1064.21px;font-size:9.6px;color:#c0c0c0;font-weight:400;">Output Log</div>
<svg class="r" style="left:188px;top:1064px;" width="12" height="10" viewBox="0 0 12 10"><rect x="0.5" y="0.5" width="11" height="9" stroke="#c0c0c0" stroke-width="1" fill="none"/><rect x="0.5" y="0.5" width="11" height="1.8" fill="#c0c0c0"/><path d="M2.3 4.4L4 5.9L2.3 7.4M5 7.6h2.8" stroke="#c0c0c0" stroke-width="0.9" fill="none"/></svg>
<div class="t " style="left:203.5px;top:1064.21px;font-size:9.6px;color:#c0c0c0;font-weight:400;">Cmd</div>
<svg class="r" style="left:227.5px;top:1067.0px;" width="7" height="5" viewBox="0 0 7 5"><path d="M0.7 0.8L3.5 4L6.3 0.8" stroke="#c0c0c0" stroke-width="1.4" fill="none"/></svg>
<div class="r" style="left:246px;top:1060.5px;width:199.5px;height:16px;background:#0f0f0f;border-radius:3px;border:1px solid #2c2c2c;box-sizing:border-box;"></div>
<div class="t" style="left:252.5px;top:1064.2px;font-size:9px;color:#4a4a4a;font-family:'Liberation Mono',monospace;letter-spacing:-0.05px">Enter Console Command</div>
<svg class="r" style="left:1747px;top:1062.5px;" width="13" height="13" viewBox="0 0 13 13"><path d="M0.4 0.4h6.4l1.8 1.8v4.4H5.6v4.4H0.4z" fill="#c0c0c0"/><rect x="2" y="0.4" width="3.8" height="2.8" fill="#242424"/><rect x="1.8" y="5.6" width="3" height="3.6" fill="#242424"/><path d="M9.6 6.4v5.2M7.2 7.6l4.8 2.8M12 7.6l-4.8 2.8" stroke="#c0c0c0" stroke-width="1.1"/></svg>
<div class="t " style="left:1763.5px;top:1064.21px;font-size:9.6px;color:#c0c0c0;font-weight:400;">1 Unsaved</div>
<svg class="r" style="left:1822.5px;top:1062px;" width="13" height="14" viewBox="0 0 13 14"><circle cx="2.4" cy="2.2" r="1.6" stroke="#d0d0d0" stroke-width="1" fill="none"/><circle cx="9" cy="2.2" r="1.6" stroke="#d0d0d0" stroke-width="1" fill="none"/><circle cx="2.4" cy="11.2" r="1.6" stroke="#d0d0d0" stroke-width="1" fill="none"/><path d="M2.4 3.8v5.8M9 3.8v1.4q0 1.6-6.6 3" stroke="#d0d0d0" stroke-width="1" fill="none"/><circle cx="8.6" cy="9.6" r="3.6" fill="#22b14c"/><path d="M6.9 9.6l1.3 1.3l2.2-2.5" stroke="#fff" stroke-width="1.1" fill="none"/></svg>
<div class="t " style="left:1837.5px;top:1064.21px;font-size:9.6px;color:#c0c0c0;font-weight:400;">Revision Control</div>
<svg class="r" style="left:1908px;top:1072px;" width="4" height="4" viewBox="0 0 4 4"><path d="M4 0V4H0" stroke="#8a8a8a" stroke-width="1" fill="none"/></svg>
</div>
</body></html>
